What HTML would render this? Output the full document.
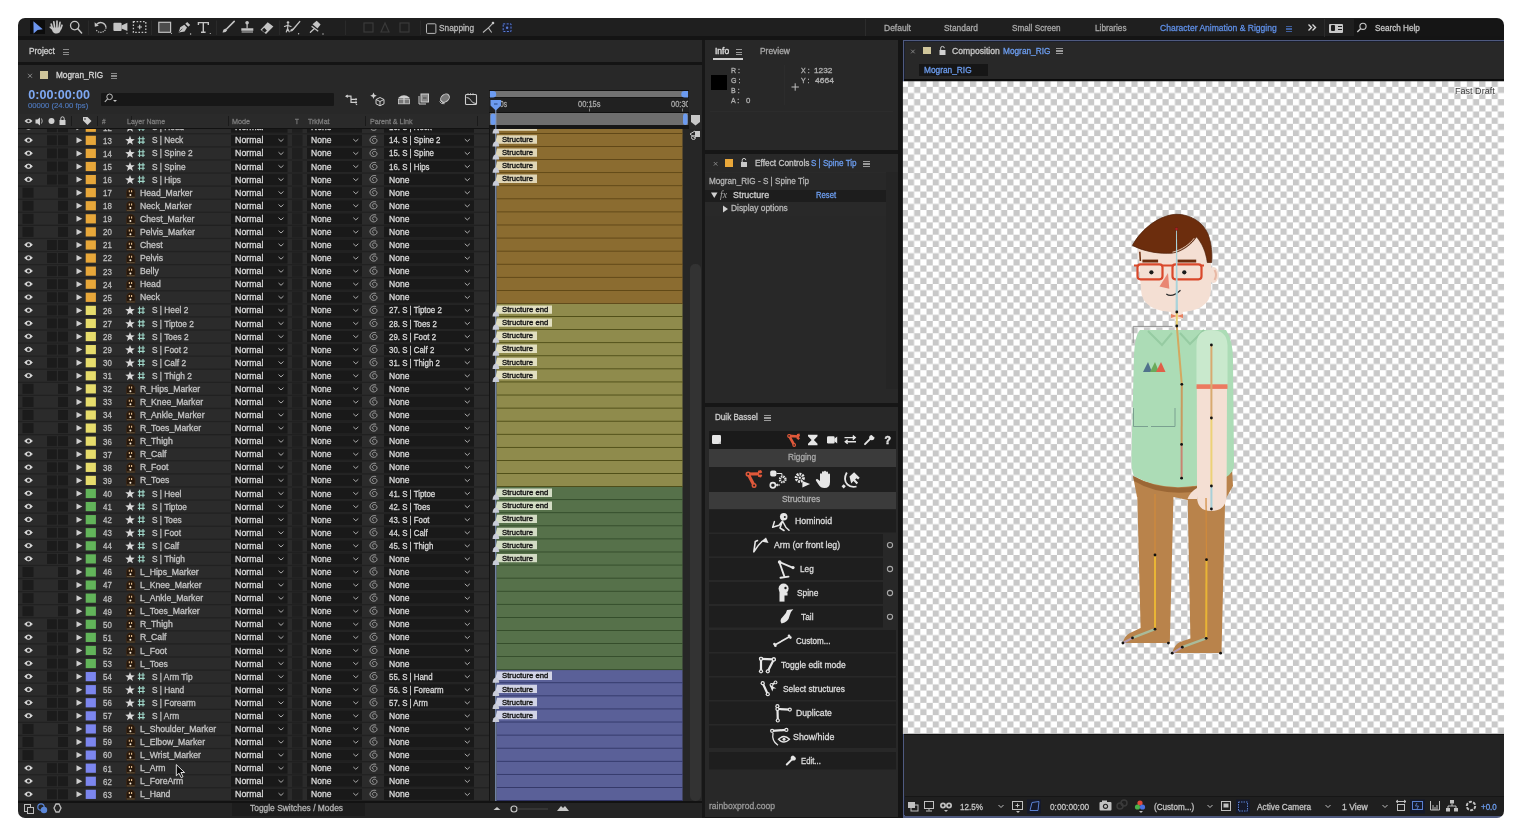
<!DOCTYPE html><html><head><meta charset="utf-8"><style>
*{margin:0;padding:0;box-sizing:border-box}
html,body{width:1521px;height:836px;overflow:hidden;background:#fff;font-family:"Liberation Sans",sans-serif}
.a{position:absolute}
#win{position:absolute;left:0;top:0;will-change:transform;width:1521px;height:836px;clip-path:inset(18px 17px 18px 18px round 7px);background:#141414}
.t{position:absolute;white-space:nowrap;line-height:1;color:#c9c9c9;transform-origin:0 0;-webkit-text-stroke-width:0.3px}
.hb{position:absolute;background:repeating-linear-gradient(currentColor 0 1.2px,transparent 1.2px 2.5px)}
svg{position:absolute;overflow:visible}
</style></head><body><div id="win">
<div class="a" style="left:18px;top:18px;width:1486px;height:18px;background:#1f1f1f"></div>
<div class="a" style="left:29.7px;top:20.1px;width:15.2px;height:14.2px;background:#0c0c0c"></div>
<svg style="left:0;top:0" width="1521" height="40"><path d="M33.4 21.2 L42.8 29.3 L37.6 29.9 L33.6 33.5 Z" fill="#6c95ee"/><path d="M52.5 28.5 L51.2 24 M54.6 27.5 L53.8 21.8 M56.9 27.5 L57 21.2 M59.1 27.8 L60 22.3 M60.8 28.8 L62 25.2" stroke="#c4c4c4" stroke-width="1.7" stroke-linecap="round"/><path d="M52 27.5 Q51.5 31 54 33 Q57 34.3 59.5 32.5 Q61.5 30.5 61.2 27.5 Z" fill="#c4c4c4"/><path d="M52.5 29 L50.2 27.2" stroke="#c4c4c4" stroke-width="1.6" stroke-linecap="round"/><circle cx="74.7" cy="25.6" r="4.2" fill="none" stroke="#c4c4c4" stroke-width="1.3"/><path d="M77.6 28.6 L81.6 33" stroke="#c4c4c4" stroke-width="1.5" stroke-linecap="round"/><path d="M88.5 20.5 V35" stroke="#2a2a2a"/><path d="M96.8 24.3 A5.3 5.3 0 0 1 106 27.5" fill="none" stroke="#c4c4c4" stroke-width="1.3"/><path d="M106 27.5 A5.3 5.3 0 0 1 96 29.5" fill="none" stroke="#c4c4c4" stroke-width="1.1" stroke-dasharray="1.3 1"/><path d="M94.6 22.3 L98.8 25.8 L94.8 26.8 Z" fill="#c4c4c4"/><rect x="113.4" y="22.7" width="8.2" height="8.2" rx="1" fill="#c4c4c4"/><path d="M121.4 25.4 L127.4 22.7 V31 L121.4 28.6 Z" fill="#c4c4c4"/><circle cx="127" cy="33.2" r="0.6" fill="#c4c4c4"/><rect x="133.4" y="21.7" width="12.4" height="10.6" fill="none" stroke="#c4c4c4" stroke-width="1.3" stroke-dasharray="1.6 1.6"/><path d="M137.5 27 h4.5 M139.7 24.8 v4.5" stroke="#c4c4c4" stroke-width="1.1"/><path d="M151.5 20.5 V35" stroke="#2a2a2a"/><rect x="158.8" y="22.3" width="11.8" height="10" fill="#4c4c4c" stroke="#c0c0c0" stroke-width="1.2"/><circle cx="171.5" cy="33.5" r="0.6" fill="#c4c4c4"/><path d="M178.6 32.5 L180.2 27.2 L184.3 24.8 L187 27.5 L184.6 31.6 Z" fill="#c4c4c4"/><path d="M185.3 23.8 L187.2 21.9 L190.2 24.9 L188.3 26.8 Z" fill="#c4c4c4"/><path d="M178.9 32.2 L182.4 28.7" stroke="#1f1f1f" stroke-width="0.7"/><circle cx="190.6" cy="34" r="0.7" fill="#c4c4c4"/><path d="M198.4 25 V22.6 H208.3 V25 M203.3 22.6 V32.2 M201 32.2 H205.6" stroke="#c4c4c4" stroke-width="1.4" fill="none"/><circle cx="210.3" cy="33.5" r="0.6" fill="#c4c4c4"/><path d="M216.5 20.5 V35" stroke="#2a2a2a"/><path d="M222.5 32.5 Q222.8 29.3 225.5 28.6 L227.2 30.2 Q226 32.8 222.5 32.5 Z" fill="#c4c4c4"/><path d="M226.6 29 L234.2 21.4" stroke="#c4c4c4" stroke-width="1.6" stroke-linecap="round"/><circle cx="247.1" cy="22.8" r="1.8" fill="#c4c4c4"/><path d="M247.1 24 V28.6" stroke="#c4c4c4" stroke-width="1.2"/><path d="M241.3 28.3 H253.3 V30.8 H241.3 Z M241.6 31.6 H253 V32.6 H241.6 Z" fill="#c4c4c4"/><path d="M260.5 29.8 L267.7 22.3 L273.4 26.6 L266 34 Z" fill="#c4c4c4"/><path d="M261.9 30.1 L264.2 27.8 L266.9 30.5 L264.6 32.8 Z" fill="#1f1f1f"/><path d="M279.6 20.5 V35" stroke="#2a2a2a"/><circle cx="288" cy="22.5" r="1.3" fill="#c4c4c4"/><path d="M288 24.3 L287.6 28.5 L286.3 32 M287.9 25.2 L284.5 26.5 M287.9 25.5 L291 26.5 M287.6 28.5 L289.2 31.8" stroke="#c4c4c4" stroke-width="1.2" fill="none" stroke-linecap="round"/><path d="M290 31.5 Q290.2 29 292.6 28.6 L293.6 29.8 Q292.8 32 290 31.5 Z" fill="#c4c4c4"/><path d="M293.2 29.2 L299.7 21.6" stroke="#c4c4c4" stroke-width="1.4" stroke-linecap="round"/><circle cx="298.6" cy="33.8" r="0.7" fill="#c4c4c4"/><path d="M312.5 24.2 L316.7 20.8 L320.6 24.5 L317.5 28.5 Z" fill="#c4c4c4"/><path d="M311.6 26.2 L318.2 31.3" stroke="#c4c4c4" stroke-width="1.3"/><path d="M314.5 28.5 L310.4 32.2" stroke="#c4c4c4" stroke-width="1.3" stroke-linecap="round"/><circle cx="323" cy="34" r="0.7" fill="#c4c4c4"/><path d="M345.5 20.5 V35" stroke="#2a2a2a"/><rect x="364" y="23" width="9" height="9" fill="none" stroke="#3a3a3a" stroke-width="1.2"/><path d="M381 32 L385 23 L389 32 Z" fill="none" stroke="#3a3a3a" stroke-width="1.2"/><rect x="400" y="23" width="9" height="9" fill="none" stroke="#3a3a3a" stroke-width="1.2"/><path d="M420.5 20.5 V35" stroke="#2a2a2a"/><rect x="426.5" y="23.8" width="9.4" height="9.6" rx="1" fill="none" stroke="#b8b8b8" stroke-width="1"/><path d="M483 32.5 L488.4 27.9 L491.7 32.5 M488.4 27.9 L492.3 23.9" stroke="#b8b8b8" stroke-width="1.1" fill="none"/><path d="M491.5 23 l1.5 -1.5 l1.5 1.5 l-1.5 1.5 Z" fill="#e0e0e0"/><rect x="502.2" y="22.9" width="9.8" height="9.6" fill="#1a1e30"/><rect x="503.2" y="23.9" width="7.8" height="7.6" fill="none" stroke="#5a7ed8" stroke-width="1" stroke-dasharray="2 1.5"/><circle cx="507.1" cy="27.7" r="1.2" fill="#5a7ed8"/><path d="M865.5 19 V36" stroke="#2c2c2c"/></svg>
<div class="t" style="left:439.10px;top:24.13px;font-size:9.30px;color:#b9b9b9;transform:scaleX(0.8931)">Snapping</div>
<div class="t" style="left:883.60px;top:24.13px;font-size:9.30px;color:#a9a9a9;transform:scaleX(0.9129)">Default</div>
<div class="t" style="left:944.20px;top:24.13px;font-size:9.30px;color:#a9a9a9;transform:scaleX(0.9008)">Standard</div>
<div class="t" style="left:1011.90px;top:24.13px;font-size:9.30px;color:#a9a9a9;transform:scaleX(0.8788)">Small Screen</div>
<div class="t" style="left:1094.60px;top:24.13px;font-size:9.30px;color:#a9a9a9;transform:scaleX(0.8832)">Libraries</div>
<div class="t" style="left:1159.80px;top:24.13px;font-size:9.30px;color:#5f8fe6;transform:scaleX(0.9185)">Character Animation &amp; Rigging</div>
<div class="hb" style="left:1285.9px;top:25.5px;width:6.5px;height:6.2px;color:#3f5f9c"></div>
<svg style="left:0;top:0" width="1521" height="40"><path d="M1308.5 24.5 l3 3 l-3 3 M1312.5 24.5 l3 3 l-3 3" stroke="#d8d8d8" stroke-width="1.4" fill="none"/></svg>
<div class="a" style="left:1323.8px;top:19px;width:1px;height:18px;background:#2c2c2c"></div>
<div class="a" style="left:1328.6px;top:23.5px;width:14.6px;height:9px;background:#c8c8c8;border-radius:1px"></div>
<div class="a" style="left:1330.5px;top:25.3px;width:4.5px;height:5.4px;background:#1f1f1f;border-radius:1px"></div><div class="a" style="left:1337.5px;top:25.5px;width:4px;height:1.4px;background:#1f1f1f"></div><div class="a" style="left:1337.5px;top:28.6px;width:4px;height:1.4px;background:#1f1f1f"></div>
<div class="a" style="left:1353.6px;top:19px;width:150px;height:17px;background:#151515"></div>
<svg style="left:0;top:0" width="1521" height="40"><circle cx="1363" cy="26.3" r="3.1" fill="none" stroke="#c8c8c8" stroke-width="1.1"/><path d="M1360.8 28.5 L1357.3 32" stroke="#c8c8c8" stroke-width="1.3"/></svg>
<div class="t" style="left:1374.80px;top:24.13px;font-size:9.30px;color:#c8c8c8;transform:scaleX(0.8773)">Search Help</div>
<div class="a" style="left:18px;top:39.5px;width:684px;height:22px;background:#282828"></div>
<div class="t" style="left:29.10px;top:46.72px;font-size:8.60px;color:#cfcfcf;transform:scaleX(0.9639)">Project</div>
<div class="hb" style="left:63px;top:48.5px;width:6px;height:6.2px;color:#8a8a8a"></div>
<div class="a" style="left:18px;top:64.5px;width:684px;height:752.5px;background:#282828"></div>
<svg style="left:0;top:0" width="200" height="90"><path d="M28 73.8 l4 4 M32 73.8 l-4 4" stroke="#8a8a8a" stroke-width="1"/></svg>
<div class="a" style="left:39.7px;top:70.7px;width:7.9px;height:8.3px;background:#cfc59a"></div>
<div class="t" style="left:55.90px;top:71.21px;font-size:9.20px;color:#d6d6d6;transform:scaleX(0.8981)">Mogran_RIG</div>
<div class="hb" style="left:110.7px;top:73px;width:6.7px;height:6.2px;color:#8a8a8a"></div>
<div class="t" style="left:28.30px;top:88.83px;font-size:12.60px;color:#7ea8f2;font-weight:bold;-webkit-text-stroke-width:0">0:00:00:00</div>
<div class="t" style="left:28.00px;top:102.48px;font-size:7.70px;color:#4f79bd;-webkit-text-stroke-width:0.15px">00000 (24.00 fps)</div>
<div class="a" style="left:100.5px;top:93px;width:233px;height:13px;background:#171717;border-radius:1px"></div>
<svg style="left:0;top:0" width="703" height="130"><circle cx="109.6" cy="96.8" r="2.8" fill="none" stroke="#c0c0c0" stroke-width="1"/><path d="M107.6 98.9 L104.8 102" stroke="#c0c0c0" stroke-width="1.1"/><path d="M113 100 h4 l-2 2 Z" fill="#c0c0c0"/><path d="M346 96.2 h5.5 M351 96.2 v6.2 h4 M351 99.3 h4" stroke="#cfcfcf" stroke-width="1.2" fill="none"/><path d="M345 96.2 l2.8 -1.8 v3.6 Z" fill="#cfcfcf"/><circle cx="356" cy="99.3" r="1.1" fill="#cfcfcf"/><circle cx="356" cy="102.4" r="1.1" fill="#cfcfcf"/><path d="M355.5 104 h2 l-1 1.2 Z" fill="#cfcfcf"/><path d="M373.5 92.5 l1 2.3 l2.3 1 l-2.3 1 l-1 2.3 l-1 -2.3 l-2.3 -1 l2.3 -1 Z" fill="#cfcfcf"/><path d="M376 99.5 l4 -2 l4 2 v4.3 l-4 2 l-4 -2 Z M376 99.5 l4 2 l4 -2 M380 101.5 v4.3" stroke="#cfcfcf" stroke-width="1" fill="none"/><path d="M398.5 97.5 q5.5 -4.5 11 0 v1 h-11 Z" fill="#cfcfcf"/><rect x="398.5" y="99.2" width="11" height="4.6" fill="#777" stroke="#cfcfcf" stroke-width="0.8"/><path d="M404 96 v7.8" stroke="#cfcfcf" stroke-width="1.2"/><rect x="421" y="94" width="7.5" height="8" fill="#888" stroke="#cfcfcf" stroke-width="1"/><path d="M419 96 v8 h7" stroke="#cfcfcf" stroke-width="1" fill="none"/><path d="M423 98 h3.5" stroke="#333" stroke-width="0.8"/><ellipse cx="445" cy="98.2" rx="4.8" ry="3.6" transform="rotate(-40 445 98.2)" fill="#777" stroke="#cfcfcf" stroke-width="1"/><path d="M440.5 100 q1 3 4 2.5 M439.6 101.5 q1.5 3 5 2.2" stroke="#cfcfcf" stroke-width="0.9" fill="none"/><rect x="465.5" y="94.5" width="11" height="10" rx="1" fill="none" stroke="#cfcfcf" stroke-width="1.1"/><path d="M466.5 97.5 q3 0 4.5 3 q1.5 3 5 3" stroke="#cfcfcf" stroke-width="1" fill="none"/><path d="M468 93.2 v2 M470.5 93.2 v2 M473 93.2 v2" stroke="#cfcfcf" stroke-width="0.8"/></svg>
<div class="a" style="left:18px;top:114px;width:472px;height:14px;background:#2a2a2a"></div>
<div class="a" style="left:18px;top:127.8px;width:472px;height:1.2px;background:#121212"></div>
<svg style="left:0;top:0" width="703" height="130"><path d="M24.5 121 Q28.5 116.5 32.5 121 Q28.5 125.5 24.5 121 Z" fill="#cfcfcf"/><circle cx="28.5" cy="121" r="1.2" fill="#2a2a2a"/><path d="M35.5 119.5 h2 l2.5 -2 v8 l-2.5 -2 h-2 Z" fill="#cfcfcf"/><path d="M41.5 118.5 q1.5 2.5 0 5" stroke="#cfcfcf" stroke-width="0.8" fill="none"/><circle cx="51.5" cy="121" r="3" fill="#cfcfcf"/><rect x="59.5" y="120" width="6" height="5" fill="#cfcfcf"/><path d="M60.8 120 v-1.5 a1.7 1.7 0 0 1 3.4 0 v1.5" stroke="#cfcfcf" stroke-width="1" fill="none"/><path d="M71.5 116 V126 M131.5 116 V126 M228.5 116 V126 M365.5 116 V126 M477.5 116 V126" stroke="#1a1a1a" stroke-width="1"/><path d="M97.5 116 V126" stroke="#1a1a1a" stroke-width="1"/><path d="M83 117 h4.5 l4 4 l-4 4 l-4.5 -4.5 Z" fill="#cfcfcf" transform="rotate(0)"/><circle cx="85" cy="119" r="0.8" fill="#2a2a2a"/></svg>
<div class="t" style="left:101.60px;top:117.77px;font-size:7.60px;color:#7c7c7c;transform:scaleX(0.8517)">#</div>
<div class="t" style="left:127.10px;top:117.77px;font-size:7.60px;color:#7c7c7c;transform:scaleX(0.9204)">Layer Name</div>
<div class="t" style="left:232.10px;top:117.77px;font-size:7.60px;color:#7c7c7c;transform:scaleX(0.9521)">Mode</div>
<div class="t" style="left:294.90px;top:117.77px;font-size:7.60px;color:#7c7c7c;transform:scaleX(0.8185)">T</div>
<div class="t" style="left:308.20px;top:117.77px;font-size:7.60px;color:#7c7c7c;transform:scaleX(0.9204)">TrkMat</div>
<div class="t" style="left:370.00px;top:117.77px;font-size:7.60px;color:#7c7c7c;transform:scaleX(0.9337)">Parent &amp; Link</div>
<div class="a" style="left:18px;top:129px;width:471px;height:672px;overflow:hidden;background:#212121">
<svg style="left:0;top:0" width="472" height="672">
<rect x="0" y="-7.68" width="472" height="11.88" fill="#2b2b2b"/>
<path d="M6.6 -1.94 Q10.5 -6.34 14.4 -1.94 Q10.5 2.46 6.6 -1.94 Z" fill="#dcdcdc" stroke="#dcdcdc" stroke-width="0.8" stroke-linejoin="round"/><circle cx="10.5" cy="-1.94" r="1.5" fill="#2b2b2b"/>
<rect x="29" y="-6.74" width="9.8" height="10" fill="#1b1b1b"/>
<rect x="40" y="-6.74" width="10" height="10" fill="#1b1b1b"/>
<path d="M58.5 -4.74 L64.3 -1.74 L58.5 1.26 Z" fill="#cfcfcf"/>
<rect x="67.7" y="-6.34" width="10.2" height="9.2" fill="#e7a73a"/>
<polygon points="112.00,-6.34 113.23,-3.04 116.76,-2.89 114.00,-0.69 114.94,2.71 112.00,0.76 109.06,2.71 110.00,-0.69 107.24,-2.89 110.77,-3.04" fill="#d8d8d8"/>
<path d="M121.5 -5.54 v7.5 M125 -5.54 v7.5 M119.8 -3.34 h7 M119.8 0.06 h7" stroke="#9fd6c8" stroke-width="1.1"/>
<rect x="213" y="-7.24" width="56.5" height="11" fill="#191919"/>
<rect x="274" y="-7.24" width="10.5" height="11" fill="#1f1f1f"/>
<rect x="289" y="-7.24" width="55" height="11" fill="#191919"/>
<rect x="366" y="-7.24" width="90" height="11" fill="#191919"/>
<path d="M260.50 -2.94 l2.5 2.3 l2.5 -2.3" stroke="#bdbdbd" stroke-width="0.9" fill="none"/>
<path d="M335.30 -2.94 l2.5 2.3 l2.5 -2.3" stroke="#bdbdbd" stroke-width="0.9" fill="none"/>
<path d="M446.80 -2.94 l2.5 2.3 l2.5 -2.3" stroke="#bdbdbd" stroke-width="0.9" fill="none"/>
<path transform="translate(0 -1.74)" d="M358.14 -3.82 L357.57 -3.97 L357.00 -4.06 L356.43 -4.08 L355.86 -4.05 L355.30 -3.95 L354.77 -3.80 L354.27 -3.59 L353.81 -3.33 L353.39 -3.03 L353.02 -2.69 L352.71 -2.32 L352.45 -1.92 L352.25 -1.50 L352.11 -1.07 L352.04 -0.63 L352.03 -0.19 L352.08 0.25 L352.19 0.67 L352.35 1.06 L352.57 1.44 L352.84 1.78 L353.15 2.09 L353.49 2.36 L353.87 2.59 L354.27 2.77 L354.69 2.91 L355.12 3.00 L355.55 3.04 L355.98 3.04 L356.40 2.99 L356.80 2.90 L357.19 2.76 L357.54 2.59 L357.87 2.38 L358.16 2.14 L358.41 1.88 L358.61 1.60 L358.78 1.30 L358.89 0.99 L358.97 0.67 L358.99 0.36 L358.98 0.04 L358.91 -0.26 L358.81 -0.55 L358.67 -0.82 L358.50 -1.07 L358.29 -1.29 L358.06 -1.49 L357.81 -1.66 L357.54 -1.80 L357.25 -1.90 L356.96 -1.97 L356.67 -2.01 L356.38 -2.02 L356.10 -1.99 L355.83 -1.94 L355.57 -1.85 L355.33 -1.75 L355.12 -1.61 L354.93 -1.47 L354.76 -1.30 L354.63 -1.12 L354.52 -0.93 L354.44 -0.74 L354.40 -0.54 L354.38 -0.35 L354.39 -0.16 L354.43 0.03 L354.49 0.20 L354.57 0.36 L354.68 0.50 L354.80 0.63 L354.93 0.74 L355.08 0.83 L355.23 0.91 L355.39 0.96 L355.55 0.99 L355.71 1.00 L355.86 1.00 L356.00 0.98" stroke="#acacac" stroke-width="1" fill="none"/>
<rect x="0" y="5.40" width="472" height="11.88" fill="#2b2b2b"/>
<path d="M6.6 11.14 Q10.5 6.74 14.4 11.14 Q10.5 15.54 6.6 11.14 Z" fill="#dcdcdc" stroke="#dcdcdc" stroke-width="0.8" stroke-linejoin="round"/><circle cx="10.5" cy="11.14" r="1.5" fill="#2b2b2b"/>
<rect x="29" y="6.34" width="9.8" height="10" fill="#1b1b1b"/>
<rect x="40" y="6.34" width="10" height="10" fill="#1b1b1b"/>
<path d="M58.5 8.34 L64.3 11.34 L58.5 14.34 Z" fill="#cfcfcf"/>
<rect x="67.7" y="6.74" width="10.2" height="9.2" fill="#e7a73a"/>
<polygon points="112.00,6.74 113.23,10.04 116.76,10.19 114.00,12.39 114.94,15.79 112.00,13.84 109.06,15.79 110.00,12.39 107.24,10.19 110.77,10.04" fill="#d8d8d8"/>
<path d="M121.5 7.54 v7.5 M125 7.54 v7.5 M119.8 9.74 h7 M119.8 13.14 h7" stroke="#9fd6c8" stroke-width="1.1"/>
<rect x="213" y="5.84" width="56.5" height="11" fill="#191919"/>
<rect x="274" y="5.84" width="10.5" height="11" fill="#1f1f1f"/>
<rect x="289" y="5.84" width="55" height="11" fill="#191919"/>
<rect x="366" y="5.84" width="90" height="11" fill="#191919"/>
<path d="M260.50 10.14 l2.5 2.3 l2.5 -2.3" stroke="#bdbdbd" stroke-width="0.9" fill="none"/>
<path d="M335.30 10.14 l2.5 2.3 l2.5 -2.3" stroke="#bdbdbd" stroke-width="0.9" fill="none"/>
<path d="M446.80 10.14 l2.5 2.3 l2.5 -2.3" stroke="#bdbdbd" stroke-width="0.9" fill="none"/>
<path transform="translate(0 11.34)" d="M358.14 -3.82 L357.57 -3.97 L357.00 -4.06 L356.43 -4.08 L355.86 -4.05 L355.30 -3.95 L354.77 -3.80 L354.27 -3.59 L353.81 -3.33 L353.39 -3.03 L353.02 -2.69 L352.71 -2.32 L352.45 -1.92 L352.25 -1.50 L352.11 -1.07 L352.04 -0.63 L352.03 -0.19 L352.08 0.25 L352.19 0.67 L352.35 1.06 L352.57 1.44 L352.84 1.78 L353.15 2.09 L353.49 2.36 L353.87 2.59 L354.27 2.77 L354.69 2.91 L355.12 3.00 L355.55 3.04 L355.98 3.04 L356.40 2.99 L356.80 2.90 L357.19 2.76 L357.54 2.59 L357.87 2.38 L358.16 2.14 L358.41 1.88 L358.61 1.60 L358.78 1.30 L358.89 0.99 L358.97 0.67 L358.99 0.36 L358.98 0.04 L358.91 -0.26 L358.81 -0.55 L358.67 -0.82 L358.50 -1.07 L358.29 -1.29 L358.06 -1.49 L357.81 -1.66 L357.54 -1.80 L357.25 -1.90 L356.96 -1.97 L356.67 -2.01 L356.38 -2.02 L356.10 -1.99 L355.83 -1.94 L355.57 -1.85 L355.33 -1.75 L355.12 -1.61 L354.93 -1.47 L354.76 -1.30 L354.63 -1.12 L354.52 -0.93 L354.44 -0.74 L354.40 -0.54 L354.38 -0.35 L354.39 -0.16 L354.43 0.03 L354.49 0.20 L354.57 0.36 L354.68 0.50 L354.80 0.63 L354.93 0.74 L355.08 0.83 L355.23 0.91 L355.39 0.96 L355.55 0.99 L355.71 1.00 L355.86 1.00 L356.00 0.98" stroke="#acacac" stroke-width="1" fill="none"/>
<rect x="0" y="18.48" width="472" height="11.88" fill="#2b2b2b"/>
<path d="M6.6 24.22 Q10.5 19.82 14.4 24.22 Q10.5 28.62 6.6 24.22 Z" fill="#dcdcdc" stroke="#dcdcdc" stroke-width="0.8" stroke-linejoin="round"/><circle cx="10.5" cy="24.22" r="1.5" fill="#2b2b2b"/>
<rect x="29" y="19.42" width="9.8" height="10" fill="#1b1b1b"/>
<rect x="40" y="19.42" width="10" height="10" fill="#1b1b1b"/>
<path d="M58.5 21.42 L64.3 24.42 L58.5 27.42 Z" fill="#cfcfcf"/>
<rect x="67.7" y="19.82" width="10.2" height="9.2" fill="#e7a73a"/>
<polygon points="112.00,19.82 113.23,23.12 116.76,23.27 114.00,25.47 114.94,28.87 112.00,26.92 109.06,28.87 110.00,25.47 107.24,23.27 110.77,23.12" fill="#d8d8d8"/>
<path d="M121.5 20.62 v7.5 M125 20.62 v7.5 M119.8 22.82 h7 M119.8 26.22 h7" stroke="#9fd6c8" stroke-width="1.1"/>
<rect x="213" y="18.92" width="56.5" height="11" fill="#191919"/>
<rect x="274" y="18.92" width="10.5" height="11" fill="#1f1f1f"/>
<rect x="289" y="18.92" width="55" height="11" fill="#191919"/>
<rect x="366" y="18.92" width="90" height="11" fill="#191919"/>
<path d="M260.50 23.22 l2.5 2.3 l2.5 -2.3" stroke="#bdbdbd" stroke-width="0.9" fill="none"/>
<path d="M335.30 23.22 l2.5 2.3 l2.5 -2.3" stroke="#bdbdbd" stroke-width="0.9" fill="none"/>
<path d="M446.80 23.22 l2.5 2.3 l2.5 -2.3" stroke="#bdbdbd" stroke-width="0.9" fill="none"/>
<path transform="translate(0 24.42)" d="M358.14 -3.82 L357.57 -3.97 L357.00 -4.06 L356.43 -4.08 L355.86 -4.05 L355.30 -3.95 L354.77 -3.80 L354.27 -3.59 L353.81 -3.33 L353.39 -3.03 L353.02 -2.69 L352.71 -2.32 L352.45 -1.92 L352.25 -1.50 L352.11 -1.07 L352.04 -0.63 L352.03 -0.19 L352.08 0.25 L352.19 0.67 L352.35 1.06 L352.57 1.44 L352.84 1.78 L353.15 2.09 L353.49 2.36 L353.87 2.59 L354.27 2.77 L354.69 2.91 L355.12 3.00 L355.55 3.04 L355.98 3.04 L356.40 2.99 L356.80 2.90 L357.19 2.76 L357.54 2.59 L357.87 2.38 L358.16 2.14 L358.41 1.88 L358.61 1.60 L358.78 1.30 L358.89 0.99 L358.97 0.67 L358.99 0.36 L358.98 0.04 L358.91 -0.26 L358.81 -0.55 L358.67 -0.82 L358.50 -1.07 L358.29 -1.29 L358.06 -1.49 L357.81 -1.66 L357.54 -1.80 L357.25 -1.90 L356.96 -1.97 L356.67 -2.01 L356.38 -2.02 L356.10 -1.99 L355.83 -1.94 L355.57 -1.85 L355.33 -1.75 L355.12 -1.61 L354.93 -1.47 L354.76 -1.30 L354.63 -1.12 L354.52 -0.93 L354.44 -0.74 L354.40 -0.54 L354.38 -0.35 L354.39 -0.16 L354.43 0.03 L354.49 0.20 L354.57 0.36 L354.68 0.50 L354.80 0.63 L354.93 0.74 L355.08 0.83 L355.23 0.91 L355.39 0.96 L355.55 0.99 L355.71 1.00 L355.86 1.00 L356.00 0.98" stroke="#acacac" stroke-width="1" fill="none"/>
<rect x="0" y="31.56" width="472" height="11.88" fill="#2b2b2b"/>
<path d="M6.6 37.30 Q10.5 32.90 14.4 37.30 Q10.5 41.70 6.6 37.30 Z" fill="#dcdcdc" stroke="#dcdcdc" stroke-width="0.8" stroke-linejoin="round"/><circle cx="10.5" cy="37.30" r="1.5" fill="#2b2b2b"/>
<rect x="29" y="32.50" width="9.8" height="10" fill="#1b1b1b"/>
<rect x="40" y="32.50" width="10" height="10" fill="#1b1b1b"/>
<path d="M58.5 34.50 L64.3 37.50 L58.5 40.50 Z" fill="#cfcfcf"/>
<rect x="67.7" y="32.90" width="10.2" height="9.2" fill="#e7a73a"/>
<polygon points="112.00,32.90 113.23,36.20 116.76,36.35 114.00,38.55 114.94,41.95 112.00,40.00 109.06,41.95 110.00,38.55 107.24,36.35 110.77,36.20" fill="#d8d8d8"/>
<path d="M121.5 33.70 v7.5 M125 33.70 v7.5 M119.8 35.90 h7 M119.8 39.30 h7" stroke="#9fd6c8" stroke-width="1.1"/>
<rect x="213" y="32.00" width="56.5" height="11" fill="#191919"/>
<rect x="274" y="32.00" width="10.5" height="11" fill="#1f1f1f"/>
<rect x="289" y="32.00" width="55" height="11" fill="#191919"/>
<rect x="366" y="32.00" width="90" height="11" fill="#191919"/>
<path d="M260.50 36.30 l2.5 2.3 l2.5 -2.3" stroke="#bdbdbd" stroke-width="0.9" fill="none"/>
<path d="M335.30 36.30 l2.5 2.3 l2.5 -2.3" stroke="#bdbdbd" stroke-width="0.9" fill="none"/>
<path d="M446.80 36.30 l2.5 2.3 l2.5 -2.3" stroke="#bdbdbd" stroke-width="0.9" fill="none"/>
<path transform="translate(0 37.50)" d="M358.14 -3.82 L357.57 -3.97 L357.00 -4.06 L356.43 -4.08 L355.86 -4.05 L355.30 -3.95 L354.77 -3.80 L354.27 -3.59 L353.81 -3.33 L353.39 -3.03 L353.02 -2.69 L352.71 -2.32 L352.45 -1.92 L352.25 -1.50 L352.11 -1.07 L352.04 -0.63 L352.03 -0.19 L352.08 0.25 L352.19 0.67 L352.35 1.06 L352.57 1.44 L352.84 1.78 L353.15 2.09 L353.49 2.36 L353.87 2.59 L354.27 2.77 L354.69 2.91 L355.12 3.00 L355.55 3.04 L355.98 3.04 L356.40 2.99 L356.80 2.90 L357.19 2.76 L357.54 2.59 L357.87 2.38 L358.16 2.14 L358.41 1.88 L358.61 1.60 L358.78 1.30 L358.89 0.99 L358.97 0.67 L358.99 0.36 L358.98 0.04 L358.91 -0.26 L358.81 -0.55 L358.67 -0.82 L358.50 -1.07 L358.29 -1.29 L358.06 -1.49 L357.81 -1.66 L357.54 -1.80 L357.25 -1.90 L356.96 -1.97 L356.67 -2.01 L356.38 -2.02 L356.10 -1.99 L355.83 -1.94 L355.57 -1.85 L355.33 -1.75 L355.12 -1.61 L354.93 -1.47 L354.76 -1.30 L354.63 -1.12 L354.52 -0.93 L354.44 -0.74 L354.40 -0.54 L354.38 -0.35 L354.39 -0.16 L354.43 0.03 L354.49 0.20 L354.57 0.36 L354.68 0.50 L354.80 0.63 L354.93 0.74 L355.08 0.83 L355.23 0.91 L355.39 0.96 L355.55 0.99 L355.71 1.00 L355.86 1.00 L356.00 0.98" stroke="#acacac" stroke-width="1" fill="none"/>
<rect x="0" y="44.64" width="472" height="11.88" fill="#2b2b2b"/>
<path d="M6.6 50.38 Q10.5 45.98 14.4 50.38 Q10.5 54.78 6.6 50.38 Z" fill="#dcdcdc" stroke="#dcdcdc" stroke-width="0.8" stroke-linejoin="round"/><circle cx="10.5" cy="50.38" r="1.5" fill="#2b2b2b"/>
<rect x="29" y="45.58" width="9.8" height="10" fill="#1b1b1b"/>
<rect x="40" y="45.58" width="10" height="10" fill="#1b1b1b"/>
<path d="M58.5 47.58 L64.3 50.58 L58.5 53.58 Z" fill="#cfcfcf"/>
<rect x="67.7" y="45.98" width="10.2" height="9.2" fill="#e7a73a"/>
<polygon points="112.00,45.98 113.23,49.28 116.76,49.43 114.00,51.63 114.94,55.03 112.00,53.08 109.06,55.03 110.00,51.63 107.24,49.43 110.77,49.28" fill="#d8d8d8"/>
<path d="M121.5 46.78 v7.5 M125 46.78 v7.5 M119.8 48.98 h7 M119.8 52.38 h7" stroke="#9fd6c8" stroke-width="1.1"/>
<rect x="213" y="45.08" width="56.5" height="11" fill="#191919"/>
<rect x="274" y="45.08" width="10.5" height="11" fill="#1f1f1f"/>
<rect x="289" y="45.08" width="55" height="11" fill="#191919"/>
<rect x="366" y="45.08" width="90" height="11" fill="#191919"/>
<path d="M260.50 49.38 l2.5 2.3 l2.5 -2.3" stroke="#bdbdbd" stroke-width="0.9" fill="none"/>
<path d="M335.30 49.38 l2.5 2.3 l2.5 -2.3" stroke="#bdbdbd" stroke-width="0.9" fill="none"/>
<path d="M446.80 49.38 l2.5 2.3 l2.5 -2.3" stroke="#bdbdbd" stroke-width="0.9" fill="none"/>
<path transform="translate(0 50.58)" d="M358.14 -3.82 L357.57 -3.97 L357.00 -4.06 L356.43 -4.08 L355.86 -4.05 L355.30 -3.95 L354.77 -3.80 L354.27 -3.59 L353.81 -3.33 L353.39 -3.03 L353.02 -2.69 L352.71 -2.32 L352.45 -1.92 L352.25 -1.50 L352.11 -1.07 L352.04 -0.63 L352.03 -0.19 L352.08 0.25 L352.19 0.67 L352.35 1.06 L352.57 1.44 L352.84 1.78 L353.15 2.09 L353.49 2.36 L353.87 2.59 L354.27 2.77 L354.69 2.91 L355.12 3.00 L355.55 3.04 L355.98 3.04 L356.40 2.99 L356.80 2.90 L357.19 2.76 L357.54 2.59 L357.87 2.38 L358.16 2.14 L358.41 1.88 L358.61 1.60 L358.78 1.30 L358.89 0.99 L358.97 0.67 L358.99 0.36 L358.98 0.04 L358.91 -0.26 L358.81 -0.55 L358.67 -0.82 L358.50 -1.07 L358.29 -1.29 L358.06 -1.49 L357.81 -1.66 L357.54 -1.80 L357.25 -1.90 L356.96 -1.97 L356.67 -2.01 L356.38 -2.02 L356.10 -1.99 L355.83 -1.94 L355.57 -1.85 L355.33 -1.75 L355.12 -1.61 L354.93 -1.47 L354.76 -1.30 L354.63 -1.12 L354.52 -0.93 L354.44 -0.74 L354.40 -0.54 L354.38 -0.35 L354.39 -0.16 L354.43 0.03 L354.49 0.20 L354.57 0.36 L354.68 0.50 L354.80 0.63 L354.93 0.74 L355.08 0.83 L355.23 0.91 L355.39 0.96 L355.55 0.99 L355.71 1.00 L355.86 1.00 L356.00 0.98" stroke="#acacac" stroke-width="1" fill="none"/>
<rect x="0" y="57.72" width="472" height="11.88" fill="#2b2b2b"/>
<rect x="4.5" y="58.66" width="11" height="10" fill="#1b1b1b"/>
<rect x="40" y="58.66" width="10" height="10" fill="#1b1b1b"/>
<path d="M58.5 60.66 L64.3 63.66 L58.5 66.66 Z" fill="#cfcfcf"/>
<rect x="67.7" y="59.06" width="10.2" height="9.2" fill="#e7a73a"/>
<path d="M108.5 68.86 v-5.5 a4.25 4.25 0 0 1 8.5 0 v5.5 Z" fill="#26170b" stroke="#3d2a18" stroke-width="0.7"/><path d="M111.3 61.36 v2 M113.6 61.36 v2" stroke="#e8c090" stroke-width="1.1"/><circle cx="112.4" cy="65.96" r="1" fill="#fff4e0"/><path d="M108.8 68.26 h7.9" stroke="#6a5a40" stroke-width="0.9"/>
<rect x="213" y="58.16" width="56.5" height="11" fill="#191919"/>
<rect x="274" y="58.16" width="10.5" height="11" fill="#1f1f1f"/>
<rect x="289" y="58.16" width="55" height="11" fill="#191919"/>
<rect x="366" y="58.16" width="90" height="11" fill="#191919"/>
<path d="M260.50 62.46 l2.5 2.3 l2.5 -2.3" stroke="#bdbdbd" stroke-width="0.9" fill="none"/>
<path d="M335.30 62.46 l2.5 2.3 l2.5 -2.3" stroke="#bdbdbd" stroke-width="0.9" fill="none"/>
<path d="M446.80 62.46 l2.5 2.3 l2.5 -2.3" stroke="#bdbdbd" stroke-width="0.9" fill="none"/>
<path transform="translate(0 63.66)" d="M358.14 -3.82 L357.57 -3.97 L357.00 -4.06 L356.43 -4.08 L355.86 -4.05 L355.30 -3.95 L354.77 -3.80 L354.27 -3.59 L353.81 -3.33 L353.39 -3.03 L353.02 -2.69 L352.71 -2.32 L352.45 -1.92 L352.25 -1.50 L352.11 -1.07 L352.04 -0.63 L352.03 -0.19 L352.08 0.25 L352.19 0.67 L352.35 1.06 L352.57 1.44 L352.84 1.78 L353.15 2.09 L353.49 2.36 L353.87 2.59 L354.27 2.77 L354.69 2.91 L355.12 3.00 L355.55 3.04 L355.98 3.04 L356.40 2.99 L356.80 2.90 L357.19 2.76 L357.54 2.59 L357.87 2.38 L358.16 2.14 L358.41 1.88 L358.61 1.60 L358.78 1.30 L358.89 0.99 L358.97 0.67 L358.99 0.36 L358.98 0.04 L358.91 -0.26 L358.81 -0.55 L358.67 -0.82 L358.50 -1.07 L358.29 -1.29 L358.06 -1.49 L357.81 -1.66 L357.54 -1.80 L357.25 -1.90 L356.96 -1.97 L356.67 -2.01 L356.38 -2.02 L356.10 -1.99 L355.83 -1.94 L355.57 -1.85 L355.33 -1.75 L355.12 -1.61 L354.93 -1.47 L354.76 -1.30 L354.63 -1.12 L354.52 -0.93 L354.44 -0.74 L354.40 -0.54 L354.38 -0.35 L354.39 -0.16 L354.43 0.03 L354.49 0.20 L354.57 0.36 L354.68 0.50 L354.80 0.63 L354.93 0.74 L355.08 0.83 L355.23 0.91 L355.39 0.96 L355.55 0.99 L355.71 1.00 L355.86 1.00 L356.00 0.98" stroke="#acacac" stroke-width="1" fill="none"/>
<rect x="0" y="70.80" width="472" height="11.88" fill="#2b2b2b"/>
<rect x="4.5" y="71.74" width="11" height="10" fill="#1b1b1b"/>
<rect x="40" y="71.74" width="10" height="10" fill="#1b1b1b"/>
<path d="M58.5 73.74 L64.3 76.74 L58.5 79.74 Z" fill="#cfcfcf"/>
<rect x="67.7" y="72.14" width="10.2" height="9.2" fill="#e7a73a"/>
<path d="M108.5 81.94 v-5.5 a4.25 4.25 0 0 1 8.5 0 v5.5 Z" fill="#26170b" stroke="#3d2a18" stroke-width="0.7"/><path d="M111.3 74.44 v2 M113.6 74.44 v2" stroke="#e8c090" stroke-width="1.1"/><circle cx="112.4" cy="79.04" r="1" fill="#fff4e0"/><path d="M108.8 81.34 h7.9" stroke="#6a5a40" stroke-width="0.9"/>
<rect x="213" y="71.24" width="56.5" height="11" fill="#191919"/>
<rect x="274" y="71.24" width="10.5" height="11" fill="#1f1f1f"/>
<rect x="289" y="71.24" width="55" height="11" fill="#191919"/>
<rect x="366" y="71.24" width="90" height="11" fill="#191919"/>
<path d="M260.50 75.54 l2.5 2.3 l2.5 -2.3" stroke="#bdbdbd" stroke-width="0.9" fill="none"/>
<path d="M335.30 75.54 l2.5 2.3 l2.5 -2.3" stroke="#bdbdbd" stroke-width="0.9" fill="none"/>
<path d="M446.80 75.54 l2.5 2.3 l2.5 -2.3" stroke="#bdbdbd" stroke-width="0.9" fill="none"/>
<path transform="translate(0 76.74)" d="M358.14 -3.82 L357.57 -3.97 L357.00 -4.06 L356.43 -4.08 L355.86 -4.05 L355.30 -3.95 L354.77 -3.80 L354.27 -3.59 L353.81 -3.33 L353.39 -3.03 L353.02 -2.69 L352.71 -2.32 L352.45 -1.92 L352.25 -1.50 L352.11 -1.07 L352.04 -0.63 L352.03 -0.19 L352.08 0.25 L352.19 0.67 L352.35 1.06 L352.57 1.44 L352.84 1.78 L353.15 2.09 L353.49 2.36 L353.87 2.59 L354.27 2.77 L354.69 2.91 L355.12 3.00 L355.55 3.04 L355.98 3.04 L356.40 2.99 L356.80 2.90 L357.19 2.76 L357.54 2.59 L357.87 2.38 L358.16 2.14 L358.41 1.88 L358.61 1.60 L358.78 1.30 L358.89 0.99 L358.97 0.67 L358.99 0.36 L358.98 0.04 L358.91 -0.26 L358.81 -0.55 L358.67 -0.82 L358.50 -1.07 L358.29 -1.29 L358.06 -1.49 L357.81 -1.66 L357.54 -1.80 L357.25 -1.90 L356.96 -1.97 L356.67 -2.01 L356.38 -2.02 L356.10 -1.99 L355.83 -1.94 L355.57 -1.85 L355.33 -1.75 L355.12 -1.61 L354.93 -1.47 L354.76 -1.30 L354.63 -1.12 L354.52 -0.93 L354.44 -0.74 L354.40 -0.54 L354.38 -0.35 L354.39 -0.16 L354.43 0.03 L354.49 0.20 L354.57 0.36 L354.68 0.50 L354.80 0.63 L354.93 0.74 L355.08 0.83 L355.23 0.91 L355.39 0.96 L355.55 0.99 L355.71 1.00 L355.86 1.00 L356.00 0.98" stroke="#acacac" stroke-width="1" fill="none"/>
<rect x="0" y="83.88" width="472" height="11.88" fill="#2b2b2b"/>
<rect x="4.5" y="84.82" width="11" height="10" fill="#1b1b1b"/>
<rect x="40" y="84.82" width="10" height="10" fill="#1b1b1b"/>
<path d="M58.5 86.82 L64.3 89.82 L58.5 92.82 Z" fill="#cfcfcf"/>
<rect x="67.7" y="85.22" width="10.2" height="9.2" fill="#e7a73a"/>
<path d="M108.5 95.02 v-5.5 a4.25 4.25 0 0 1 8.5 0 v5.5 Z" fill="#26170b" stroke="#3d2a18" stroke-width="0.7"/><path d="M111.3 87.52 v2 M113.6 87.52 v2" stroke="#e8c090" stroke-width="1.1"/><circle cx="112.4" cy="92.12" r="1" fill="#fff4e0"/><path d="M108.8 94.42 h7.9" stroke="#6a5a40" stroke-width="0.9"/>
<rect x="213" y="84.32" width="56.5" height="11" fill="#191919"/>
<rect x="274" y="84.32" width="10.5" height="11" fill="#1f1f1f"/>
<rect x="289" y="84.32" width="55" height="11" fill="#191919"/>
<rect x="366" y="84.32" width="90" height="11" fill="#191919"/>
<path d="M260.50 88.62 l2.5 2.3 l2.5 -2.3" stroke="#bdbdbd" stroke-width="0.9" fill="none"/>
<path d="M335.30 88.62 l2.5 2.3 l2.5 -2.3" stroke="#bdbdbd" stroke-width="0.9" fill="none"/>
<path d="M446.80 88.62 l2.5 2.3 l2.5 -2.3" stroke="#bdbdbd" stroke-width="0.9" fill="none"/>
<path transform="translate(0 89.82)" d="M358.14 -3.82 L357.57 -3.97 L357.00 -4.06 L356.43 -4.08 L355.86 -4.05 L355.30 -3.95 L354.77 -3.80 L354.27 -3.59 L353.81 -3.33 L353.39 -3.03 L353.02 -2.69 L352.71 -2.32 L352.45 -1.92 L352.25 -1.50 L352.11 -1.07 L352.04 -0.63 L352.03 -0.19 L352.08 0.25 L352.19 0.67 L352.35 1.06 L352.57 1.44 L352.84 1.78 L353.15 2.09 L353.49 2.36 L353.87 2.59 L354.27 2.77 L354.69 2.91 L355.12 3.00 L355.55 3.04 L355.98 3.04 L356.40 2.99 L356.80 2.90 L357.19 2.76 L357.54 2.59 L357.87 2.38 L358.16 2.14 L358.41 1.88 L358.61 1.60 L358.78 1.30 L358.89 0.99 L358.97 0.67 L358.99 0.36 L358.98 0.04 L358.91 -0.26 L358.81 -0.55 L358.67 -0.82 L358.50 -1.07 L358.29 -1.29 L358.06 -1.49 L357.81 -1.66 L357.54 -1.80 L357.25 -1.90 L356.96 -1.97 L356.67 -2.01 L356.38 -2.02 L356.10 -1.99 L355.83 -1.94 L355.57 -1.85 L355.33 -1.75 L355.12 -1.61 L354.93 -1.47 L354.76 -1.30 L354.63 -1.12 L354.52 -0.93 L354.44 -0.74 L354.40 -0.54 L354.38 -0.35 L354.39 -0.16 L354.43 0.03 L354.49 0.20 L354.57 0.36 L354.68 0.50 L354.80 0.63 L354.93 0.74 L355.08 0.83 L355.23 0.91 L355.39 0.96 L355.55 0.99 L355.71 1.00 L355.86 1.00 L356.00 0.98" stroke="#acacac" stroke-width="1" fill="none"/>
<rect x="0" y="96.96" width="472" height="11.88" fill="#2b2b2b"/>
<rect x="4.5" y="97.90" width="11" height="10" fill="#1b1b1b"/>
<rect x="40" y="97.90" width="10" height="10" fill="#1b1b1b"/>
<path d="M58.5 99.90 L64.3 102.90 L58.5 105.90 Z" fill="#cfcfcf"/>
<rect x="67.7" y="98.30" width="10.2" height="9.2" fill="#e7a73a"/>
<path d="M108.5 108.10 v-5.5 a4.25 4.25 0 0 1 8.5 0 v5.5 Z" fill="#26170b" stroke="#3d2a18" stroke-width="0.7"/><path d="M111.3 100.60 v2 M113.6 100.60 v2" stroke="#e8c090" stroke-width="1.1"/><circle cx="112.4" cy="105.20" r="1" fill="#fff4e0"/><path d="M108.8 107.50 h7.9" stroke="#6a5a40" stroke-width="0.9"/>
<rect x="213" y="97.40" width="56.5" height="11" fill="#191919"/>
<rect x="274" y="97.40" width="10.5" height="11" fill="#1f1f1f"/>
<rect x="289" y="97.40" width="55" height="11" fill="#191919"/>
<rect x="366" y="97.40" width="90" height="11" fill="#191919"/>
<path d="M260.50 101.70 l2.5 2.3 l2.5 -2.3" stroke="#bdbdbd" stroke-width="0.9" fill="none"/>
<path d="M335.30 101.70 l2.5 2.3 l2.5 -2.3" stroke="#bdbdbd" stroke-width="0.9" fill="none"/>
<path d="M446.80 101.70 l2.5 2.3 l2.5 -2.3" stroke="#bdbdbd" stroke-width="0.9" fill="none"/>
<path transform="translate(0 102.90)" d="M358.14 -3.82 L357.57 -3.97 L357.00 -4.06 L356.43 -4.08 L355.86 -4.05 L355.30 -3.95 L354.77 -3.80 L354.27 -3.59 L353.81 -3.33 L353.39 -3.03 L353.02 -2.69 L352.71 -2.32 L352.45 -1.92 L352.25 -1.50 L352.11 -1.07 L352.04 -0.63 L352.03 -0.19 L352.08 0.25 L352.19 0.67 L352.35 1.06 L352.57 1.44 L352.84 1.78 L353.15 2.09 L353.49 2.36 L353.87 2.59 L354.27 2.77 L354.69 2.91 L355.12 3.00 L355.55 3.04 L355.98 3.04 L356.40 2.99 L356.80 2.90 L357.19 2.76 L357.54 2.59 L357.87 2.38 L358.16 2.14 L358.41 1.88 L358.61 1.60 L358.78 1.30 L358.89 0.99 L358.97 0.67 L358.99 0.36 L358.98 0.04 L358.91 -0.26 L358.81 -0.55 L358.67 -0.82 L358.50 -1.07 L358.29 -1.29 L358.06 -1.49 L357.81 -1.66 L357.54 -1.80 L357.25 -1.90 L356.96 -1.97 L356.67 -2.01 L356.38 -2.02 L356.10 -1.99 L355.83 -1.94 L355.57 -1.85 L355.33 -1.75 L355.12 -1.61 L354.93 -1.47 L354.76 -1.30 L354.63 -1.12 L354.52 -0.93 L354.44 -0.74 L354.40 -0.54 L354.38 -0.35 L354.39 -0.16 L354.43 0.03 L354.49 0.20 L354.57 0.36 L354.68 0.50 L354.80 0.63 L354.93 0.74 L355.08 0.83 L355.23 0.91 L355.39 0.96 L355.55 0.99 L355.71 1.00 L355.86 1.00 L356.00 0.98" stroke="#acacac" stroke-width="1" fill="none"/>
<rect x="0" y="110.04" width="472" height="11.88" fill="#2b2b2b"/>
<path d="M6.6 115.78 Q10.5 111.38 14.4 115.78 Q10.5 120.18 6.6 115.78 Z" fill="#dcdcdc" stroke="#dcdcdc" stroke-width="0.8" stroke-linejoin="round"/><circle cx="10.5" cy="115.78" r="1.5" fill="#2b2b2b"/>
<rect x="29" y="110.98" width="9.8" height="10" fill="#1b1b1b"/>
<rect x="40" y="110.98" width="10" height="10" fill="#1b1b1b"/>
<path d="M58.5 112.98 L64.3 115.98 L58.5 118.98 Z" fill="#cfcfcf"/>
<rect x="67.7" y="111.38" width="10.2" height="9.2" fill="#e7a73a"/>
<path d="M108.5 121.18 v-5.5 a4.25 4.25 0 0 1 8.5 0 v5.5 Z" fill="#26170b" stroke="#3d2a18" stroke-width="0.7"/><path d="M111.3 113.68 v2 M113.6 113.68 v2" stroke="#e8c090" stroke-width="1.1"/><circle cx="112.4" cy="118.28" r="1" fill="#fff4e0"/><path d="M108.8 120.58 h7.9" stroke="#6a5a40" stroke-width="0.9"/>
<rect x="213" y="110.48" width="56.5" height="11" fill="#191919"/>
<rect x="274" y="110.48" width="10.5" height="11" fill="#1f1f1f"/>
<rect x="289" y="110.48" width="55" height="11" fill="#191919"/>
<rect x="366" y="110.48" width="90" height="11" fill="#191919"/>
<path d="M260.50 114.78 l2.5 2.3 l2.5 -2.3" stroke="#bdbdbd" stroke-width="0.9" fill="none"/>
<path d="M335.30 114.78 l2.5 2.3 l2.5 -2.3" stroke="#bdbdbd" stroke-width="0.9" fill="none"/>
<path d="M446.80 114.78 l2.5 2.3 l2.5 -2.3" stroke="#bdbdbd" stroke-width="0.9" fill="none"/>
<path transform="translate(0 115.98)" d="M358.14 -3.82 L357.57 -3.97 L357.00 -4.06 L356.43 -4.08 L355.86 -4.05 L355.30 -3.95 L354.77 -3.80 L354.27 -3.59 L353.81 -3.33 L353.39 -3.03 L353.02 -2.69 L352.71 -2.32 L352.45 -1.92 L352.25 -1.50 L352.11 -1.07 L352.04 -0.63 L352.03 -0.19 L352.08 0.25 L352.19 0.67 L352.35 1.06 L352.57 1.44 L352.84 1.78 L353.15 2.09 L353.49 2.36 L353.87 2.59 L354.27 2.77 L354.69 2.91 L355.12 3.00 L355.55 3.04 L355.98 3.04 L356.40 2.99 L356.80 2.90 L357.19 2.76 L357.54 2.59 L357.87 2.38 L358.16 2.14 L358.41 1.88 L358.61 1.60 L358.78 1.30 L358.89 0.99 L358.97 0.67 L358.99 0.36 L358.98 0.04 L358.91 -0.26 L358.81 -0.55 L358.67 -0.82 L358.50 -1.07 L358.29 -1.29 L358.06 -1.49 L357.81 -1.66 L357.54 -1.80 L357.25 -1.90 L356.96 -1.97 L356.67 -2.01 L356.38 -2.02 L356.10 -1.99 L355.83 -1.94 L355.57 -1.85 L355.33 -1.75 L355.12 -1.61 L354.93 -1.47 L354.76 -1.30 L354.63 -1.12 L354.52 -0.93 L354.44 -0.74 L354.40 -0.54 L354.38 -0.35 L354.39 -0.16 L354.43 0.03 L354.49 0.20 L354.57 0.36 L354.68 0.50 L354.80 0.63 L354.93 0.74 L355.08 0.83 L355.23 0.91 L355.39 0.96 L355.55 0.99 L355.71 1.00 L355.86 1.00 L356.00 0.98" stroke="#acacac" stroke-width="1" fill="none"/>
<rect x="0" y="123.12" width="472" height="11.88" fill="#2b2b2b"/>
<path d="M6.6 128.86 Q10.5 124.46 14.4 128.86 Q10.5 133.26 6.6 128.86 Z" fill="#dcdcdc" stroke="#dcdcdc" stroke-width="0.8" stroke-linejoin="round"/><circle cx="10.5" cy="128.86" r="1.5" fill="#2b2b2b"/>
<rect x="29" y="124.06" width="9.8" height="10" fill="#1b1b1b"/>
<rect x="40" y="124.06" width="10" height="10" fill="#1b1b1b"/>
<path d="M58.5 126.06 L64.3 129.06 L58.5 132.06 Z" fill="#cfcfcf"/>
<rect x="67.7" y="124.46" width="10.2" height="9.2" fill="#e7a73a"/>
<path d="M108.5 134.26 v-5.5 a4.25 4.25 0 0 1 8.5 0 v5.5 Z" fill="#26170b" stroke="#3d2a18" stroke-width="0.7"/><path d="M111.3 126.76 v2 M113.6 126.76 v2" stroke="#e8c090" stroke-width="1.1"/><circle cx="112.4" cy="131.36" r="1" fill="#fff4e0"/><path d="M108.8 133.66 h7.9" stroke="#6a5a40" stroke-width="0.9"/>
<rect x="213" y="123.56" width="56.5" height="11" fill="#191919"/>
<rect x="274" y="123.56" width="10.5" height="11" fill="#1f1f1f"/>
<rect x="289" y="123.56" width="55" height="11" fill="#191919"/>
<rect x="366" y="123.56" width="90" height="11" fill="#191919"/>
<path d="M260.50 127.86 l2.5 2.3 l2.5 -2.3" stroke="#bdbdbd" stroke-width="0.9" fill="none"/>
<path d="M335.30 127.86 l2.5 2.3 l2.5 -2.3" stroke="#bdbdbd" stroke-width="0.9" fill="none"/>
<path d="M446.80 127.86 l2.5 2.3 l2.5 -2.3" stroke="#bdbdbd" stroke-width="0.9" fill="none"/>
<path transform="translate(0 129.06)" d="M358.14 -3.82 L357.57 -3.97 L357.00 -4.06 L356.43 -4.08 L355.86 -4.05 L355.30 -3.95 L354.77 -3.80 L354.27 -3.59 L353.81 -3.33 L353.39 -3.03 L353.02 -2.69 L352.71 -2.32 L352.45 -1.92 L352.25 -1.50 L352.11 -1.07 L352.04 -0.63 L352.03 -0.19 L352.08 0.25 L352.19 0.67 L352.35 1.06 L352.57 1.44 L352.84 1.78 L353.15 2.09 L353.49 2.36 L353.87 2.59 L354.27 2.77 L354.69 2.91 L355.12 3.00 L355.55 3.04 L355.98 3.04 L356.40 2.99 L356.80 2.90 L357.19 2.76 L357.54 2.59 L357.87 2.38 L358.16 2.14 L358.41 1.88 L358.61 1.60 L358.78 1.30 L358.89 0.99 L358.97 0.67 L358.99 0.36 L358.98 0.04 L358.91 -0.26 L358.81 -0.55 L358.67 -0.82 L358.50 -1.07 L358.29 -1.29 L358.06 -1.49 L357.81 -1.66 L357.54 -1.80 L357.25 -1.90 L356.96 -1.97 L356.67 -2.01 L356.38 -2.02 L356.10 -1.99 L355.83 -1.94 L355.57 -1.85 L355.33 -1.75 L355.12 -1.61 L354.93 -1.47 L354.76 -1.30 L354.63 -1.12 L354.52 -0.93 L354.44 -0.74 L354.40 -0.54 L354.38 -0.35 L354.39 -0.16 L354.43 0.03 L354.49 0.20 L354.57 0.36 L354.68 0.50 L354.80 0.63 L354.93 0.74 L355.08 0.83 L355.23 0.91 L355.39 0.96 L355.55 0.99 L355.71 1.00 L355.86 1.00 L356.00 0.98" stroke="#acacac" stroke-width="1" fill="none"/>
<rect x="0" y="136.20" width="472" height="11.88" fill="#2b2b2b"/>
<path d="M6.6 141.94 Q10.5 137.54 14.4 141.94 Q10.5 146.34 6.6 141.94 Z" fill="#dcdcdc" stroke="#dcdcdc" stroke-width="0.8" stroke-linejoin="round"/><circle cx="10.5" cy="141.94" r="1.5" fill="#2b2b2b"/>
<rect x="29" y="137.14" width="9.8" height="10" fill="#1b1b1b"/>
<rect x="40" y="137.14" width="10" height="10" fill="#1b1b1b"/>
<path d="M58.5 139.14 L64.3 142.14 L58.5 145.14 Z" fill="#cfcfcf"/>
<rect x="67.7" y="137.54" width="10.2" height="9.2" fill="#e7a73a"/>
<path d="M108.5 147.34 v-5.5 a4.25 4.25 0 0 1 8.5 0 v5.5 Z" fill="#26170b" stroke="#3d2a18" stroke-width="0.7"/><path d="M111.3 139.84 v2 M113.6 139.84 v2" stroke="#e8c090" stroke-width="1.1"/><circle cx="112.4" cy="144.44" r="1" fill="#fff4e0"/><path d="M108.8 146.74 h7.9" stroke="#6a5a40" stroke-width="0.9"/>
<rect x="213" y="136.64" width="56.5" height="11" fill="#191919"/>
<rect x="274" y="136.64" width="10.5" height="11" fill="#1f1f1f"/>
<rect x="289" y="136.64" width="55" height="11" fill="#191919"/>
<rect x="366" y="136.64" width="90" height="11" fill="#191919"/>
<path d="M260.50 140.94 l2.5 2.3 l2.5 -2.3" stroke="#bdbdbd" stroke-width="0.9" fill="none"/>
<path d="M335.30 140.94 l2.5 2.3 l2.5 -2.3" stroke="#bdbdbd" stroke-width="0.9" fill="none"/>
<path d="M446.80 140.94 l2.5 2.3 l2.5 -2.3" stroke="#bdbdbd" stroke-width="0.9" fill="none"/>
<path transform="translate(0 142.14)" d="M358.14 -3.82 L357.57 -3.97 L357.00 -4.06 L356.43 -4.08 L355.86 -4.05 L355.30 -3.95 L354.77 -3.80 L354.27 -3.59 L353.81 -3.33 L353.39 -3.03 L353.02 -2.69 L352.71 -2.32 L352.45 -1.92 L352.25 -1.50 L352.11 -1.07 L352.04 -0.63 L352.03 -0.19 L352.08 0.25 L352.19 0.67 L352.35 1.06 L352.57 1.44 L352.84 1.78 L353.15 2.09 L353.49 2.36 L353.87 2.59 L354.27 2.77 L354.69 2.91 L355.12 3.00 L355.55 3.04 L355.98 3.04 L356.40 2.99 L356.80 2.90 L357.19 2.76 L357.54 2.59 L357.87 2.38 L358.16 2.14 L358.41 1.88 L358.61 1.60 L358.78 1.30 L358.89 0.99 L358.97 0.67 L358.99 0.36 L358.98 0.04 L358.91 -0.26 L358.81 -0.55 L358.67 -0.82 L358.50 -1.07 L358.29 -1.29 L358.06 -1.49 L357.81 -1.66 L357.54 -1.80 L357.25 -1.90 L356.96 -1.97 L356.67 -2.01 L356.38 -2.02 L356.10 -1.99 L355.83 -1.94 L355.57 -1.85 L355.33 -1.75 L355.12 -1.61 L354.93 -1.47 L354.76 -1.30 L354.63 -1.12 L354.52 -0.93 L354.44 -0.74 L354.40 -0.54 L354.38 -0.35 L354.39 -0.16 L354.43 0.03 L354.49 0.20 L354.57 0.36 L354.68 0.50 L354.80 0.63 L354.93 0.74 L355.08 0.83 L355.23 0.91 L355.39 0.96 L355.55 0.99 L355.71 1.00 L355.86 1.00 L356.00 0.98" stroke="#acacac" stroke-width="1" fill="none"/>
<rect x="0" y="149.28" width="472" height="11.88" fill="#2b2b2b"/>
<path d="M6.6 155.02 Q10.5 150.62 14.4 155.02 Q10.5 159.42 6.6 155.02 Z" fill="#dcdcdc" stroke="#dcdcdc" stroke-width="0.8" stroke-linejoin="round"/><circle cx="10.5" cy="155.02" r="1.5" fill="#2b2b2b"/>
<rect x="29" y="150.22" width="9.8" height="10" fill="#1b1b1b"/>
<rect x="40" y="150.22" width="10" height="10" fill="#1b1b1b"/>
<path d="M58.5 152.22 L64.3 155.22 L58.5 158.22 Z" fill="#cfcfcf"/>
<rect x="67.7" y="150.62" width="10.2" height="9.2" fill="#e7a73a"/>
<path d="M108.5 160.42 v-5.5 a4.25 4.25 0 0 1 8.5 0 v5.5 Z" fill="#26170b" stroke="#3d2a18" stroke-width="0.7"/><path d="M111.3 152.92 v2 M113.6 152.92 v2" stroke="#e8c090" stroke-width="1.1"/><circle cx="112.4" cy="157.52" r="1" fill="#fff4e0"/><path d="M108.8 159.82 h7.9" stroke="#6a5a40" stroke-width="0.9"/>
<rect x="213" y="149.72" width="56.5" height="11" fill="#191919"/>
<rect x="274" y="149.72" width="10.5" height="11" fill="#1f1f1f"/>
<rect x="289" y="149.72" width="55" height="11" fill="#191919"/>
<rect x="366" y="149.72" width="90" height="11" fill="#191919"/>
<path d="M260.50 154.02 l2.5 2.3 l2.5 -2.3" stroke="#bdbdbd" stroke-width="0.9" fill="none"/>
<path d="M335.30 154.02 l2.5 2.3 l2.5 -2.3" stroke="#bdbdbd" stroke-width="0.9" fill="none"/>
<path d="M446.80 154.02 l2.5 2.3 l2.5 -2.3" stroke="#bdbdbd" stroke-width="0.9" fill="none"/>
<path transform="translate(0 155.22)" d="M358.14 -3.82 L357.57 -3.97 L357.00 -4.06 L356.43 -4.08 L355.86 -4.05 L355.30 -3.95 L354.77 -3.80 L354.27 -3.59 L353.81 -3.33 L353.39 -3.03 L353.02 -2.69 L352.71 -2.32 L352.45 -1.92 L352.25 -1.50 L352.11 -1.07 L352.04 -0.63 L352.03 -0.19 L352.08 0.25 L352.19 0.67 L352.35 1.06 L352.57 1.44 L352.84 1.78 L353.15 2.09 L353.49 2.36 L353.87 2.59 L354.27 2.77 L354.69 2.91 L355.12 3.00 L355.55 3.04 L355.98 3.04 L356.40 2.99 L356.80 2.90 L357.19 2.76 L357.54 2.59 L357.87 2.38 L358.16 2.14 L358.41 1.88 L358.61 1.60 L358.78 1.30 L358.89 0.99 L358.97 0.67 L358.99 0.36 L358.98 0.04 L358.91 -0.26 L358.81 -0.55 L358.67 -0.82 L358.50 -1.07 L358.29 -1.29 L358.06 -1.49 L357.81 -1.66 L357.54 -1.80 L357.25 -1.90 L356.96 -1.97 L356.67 -2.01 L356.38 -2.02 L356.10 -1.99 L355.83 -1.94 L355.57 -1.85 L355.33 -1.75 L355.12 -1.61 L354.93 -1.47 L354.76 -1.30 L354.63 -1.12 L354.52 -0.93 L354.44 -0.74 L354.40 -0.54 L354.38 -0.35 L354.39 -0.16 L354.43 0.03 L354.49 0.20 L354.57 0.36 L354.68 0.50 L354.80 0.63 L354.93 0.74 L355.08 0.83 L355.23 0.91 L355.39 0.96 L355.55 0.99 L355.71 1.00 L355.86 1.00 L356.00 0.98" stroke="#acacac" stroke-width="1" fill="none"/>
<rect x="0" y="162.36" width="472" height="11.88" fill="#2b2b2b"/>
<path d="M6.6 168.10 Q10.5 163.70 14.4 168.10 Q10.5 172.50 6.6 168.10 Z" fill="#dcdcdc" stroke="#dcdcdc" stroke-width="0.8" stroke-linejoin="round"/><circle cx="10.5" cy="168.10" r="1.5" fill="#2b2b2b"/>
<rect x="29" y="163.30" width="9.8" height="10" fill="#1b1b1b"/>
<rect x="40" y="163.30" width="10" height="10" fill="#1b1b1b"/>
<path d="M58.5 165.30 L64.3 168.30 L58.5 171.30 Z" fill="#cfcfcf"/>
<rect x="67.7" y="163.70" width="10.2" height="9.2" fill="#e7a73a"/>
<path d="M108.5 173.50 v-5.5 a4.25 4.25 0 0 1 8.5 0 v5.5 Z" fill="#26170b" stroke="#3d2a18" stroke-width="0.7"/><path d="M111.3 166.00 v2 M113.6 166.00 v2" stroke="#e8c090" stroke-width="1.1"/><circle cx="112.4" cy="170.60" r="1" fill="#fff4e0"/><path d="M108.8 172.90 h7.9" stroke="#6a5a40" stroke-width="0.9"/>
<rect x="213" y="162.80" width="56.5" height="11" fill="#191919"/>
<rect x="274" y="162.80" width="10.5" height="11" fill="#1f1f1f"/>
<rect x="289" y="162.80" width="55" height="11" fill="#191919"/>
<rect x="366" y="162.80" width="90" height="11" fill="#191919"/>
<path d="M260.50 167.10 l2.5 2.3 l2.5 -2.3" stroke="#bdbdbd" stroke-width="0.9" fill="none"/>
<path d="M335.30 167.10 l2.5 2.3 l2.5 -2.3" stroke="#bdbdbd" stroke-width="0.9" fill="none"/>
<path d="M446.80 167.10 l2.5 2.3 l2.5 -2.3" stroke="#bdbdbd" stroke-width="0.9" fill="none"/>
<path transform="translate(0 168.30)" d="M358.14 -3.82 L357.57 -3.97 L357.00 -4.06 L356.43 -4.08 L355.86 -4.05 L355.30 -3.95 L354.77 -3.80 L354.27 -3.59 L353.81 -3.33 L353.39 -3.03 L353.02 -2.69 L352.71 -2.32 L352.45 -1.92 L352.25 -1.50 L352.11 -1.07 L352.04 -0.63 L352.03 -0.19 L352.08 0.25 L352.19 0.67 L352.35 1.06 L352.57 1.44 L352.84 1.78 L353.15 2.09 L353.49 2.36 L353.87 2.59 L354.27 2.77 L354.69 2.91 L355.12 3.00 L355.55 3.04 L355.98 3.04 L356.40 2.99 L356.80 2.90 L357.19 2.76 L357.54 2.59 L357.87 2.38 L358.16 2.14 L358.41 1.88 L358.61 1.60 L358.78 1.30 L358.89 0.99 L358.97 0.67 L358.99 0.36 L358.98 0.04 L358.91 -0.26 L358.81 -0.55 L358.67 -0.82 L358.50 -1.07 L358.29 -1.29 L358.06 -1.49 L357.81 -1.66 L357.54 -1.80 L357.25 -1.90 L356.96 -1.97 L356.67 -2.01 L356.38 -2.02 L356.10 -1.99 L355.83 -1.94 L355.57 -1.85 L355.33 -1.75 L355.12 -1.61 L354.93 -1.47 L354.76 -1.30 L354.63 -1.12 L354.52 -0.93 L354.44 -0.74 L354.40 -0.54 L354.38 -0.35 L354.39 -0.16 L354.43 0.03 L354.49 0.20 L354.57 0.36 L354.68 0.50 L354.80 0.63 L354.93 0.74 L355.08 0.83 L355.23 0.91 L355.39 0.96 L355.55 0.99 L355.71 1.00 L355.86 1.00 L356.00 0.98" stroke="#acacac" stroke-width="1" fill="none"/>
<rect x="0" y="175.44" width="472" height="11.88" fill="#2b2b2b"/>
<path d="M6.6 181.18 Q10.5 176.78 14.4 181.18 Q10.5 185.58 6.6 181.18 Z" fill="#dcdcdc" stroke="#dcdcdc" stroke-width="0.8" stroke-linejoin="round"/><circle cx="10.5" cy="181.18" r="1.5" fill="#2b2b2b"/>
<rect x="29" y="176.38" width="9.8" height="10" fill="#1b1b1b"/>
<rect x="40" y="176.38" width="10" height="10" fill="#1b1b1b"/>
<path d="M58.5 178.38 L64.3 181.38 L58.5 184.38 Z" fill="#cfcfcf"/>
<rect x="67.7" y="176.78" width="10.2" height="9.2" fill="#e6dc6c"/>
<polygon points="112.00,176.78 113.23,180.08 116.76,180.23 114.00,182.43 114.94,185.83 112.00,183.88 109.06,185.83 110.00,182.43 107.24,180.23 110.77,180.08" fill="#d8d8d8"/>
<path d="M121.5 177.58 v7.5 M125 177.58 v7.5 M119.8 179.78 h7 M119.8 183.18 h7" stroke="#9fd6c8" stroke-width="1.1"/>
<rect x="213" y="175.88" width="56.5" height="11" fill="#191919"/>
<rect x="274" y="175.88" width="10.5" height="11" fill="#1f1f1f"/>
<rect x="289" y="175.88" width="55" height="11" fill="#191919"/>
<rect x="366" y="175.88" width="90" height="11" fill="#191919"/>
<path d="M260.50 180.18 l2.5 2.3 l2.5 -2.3" stroke="#bdbdbd" stroke-width="0.9" fill="none"/>
<path d="M335.30 180.18 l2.5 2.3 l2.5 -2.3" stroke="#bdbdbd" stroke-width="0.9" fill="none"/>
<path d="M446.80 180.18 l2.5 2.3 l2.5 -2.3" stroke="#bdbdbd" stroke-width="0.9" fill="none"/>
<path transform="translate(0 181.38)" d="M358.14 -3.82 L357.57 -3.97 L357.00 -4.06 L356.43 -4.08 L355.86 -4.05 L355.30 -3.95 L354.77 -3.80 L354.27 -3.59 L353.81 -3.33 L353.39 -3.03 L353.02 -2.69 L352.71 -2.32 L352.45 -1.92 L352.25 -1.50 L352.11 -1.07 L352.04 -0.63 L352.03 -0.19 L352.08 0.25 L352.19 0.67 L352.35 1.06 L352.57 1.44 L352.84 1.78 L353.15 2.09 L353.49 2.36 L353.87 2.59 L354.27 2.77 L354.69 2.91 L355.12 3.00 L355.55 3.04 L355.98 3.04 L356.40 2.99 L356.80 2.90 L357.19 2.76 L357.54 2.59 L357.87 2.38 L358.16 2.14 L358.41 1.88 L358.61 1.60 L358.78 1.30 L358.89 0.99 L358.97 0.67 L358.99 0.36 L358.98 0.04 L358.91 -0.26 L358.81 -0.55 L358.67 -0.82 L358.50 -1.07 L358.29 -1.29 L358.06 -1.49 L357.81 -1.66 L357.54 -1.80 L357.25 -1.90 L356.96 -1.97 L356.67 -2.01 L356.38 -2.02 L356.10 -1.99 L355.83 -1.94 L355.57 -1.85 L355.33 -1.75 L355.12 -1.61 L354.93 -1.47 L354.76 -1.30 L354.63 -1.12 L354.52 -0.93 L354.44 -0.74 L354.40 -0.54 L354.38 -0.35 L354.39 -0.16 L354.43 0.03 L354.49 0.20 L354.57 0.36 L354.68 0.50 L354.80 0.63 L354.93 0.74 L355.08 0.83 L355.23 0.91 L355.39 0.96 L355.55 0.99 L355.71 1.00 L355.86 1.00 L356.00 0.98" stroke="#acacac" stroke-width="1" fill="none"/>
<rect x="0" y="188.52" width="472" height="11.88" fill="#2b2b2b"/>
<path d="M6.6 194.26 Q10.5 189.86 14.4 194.26 Q10.5 198.66 6.6 194.26 Z" fill="#dcdcdc" stroke="#dcdcdc" stroke-width="0.8" stroke-linejoin="round"/><circle cx="10.5" cy="194.26" r="1.5" fill="#2b2b2b"/>
<rect x="29" y="189.46" width="9.8" height="10" fill="#1b1b1b"/>
<rect x="40" y="189.46" width="10" height="10" fill="#1b1b1b"/>
<path d="M58.5 191.46 L64.3 194.46 L58.5 197.46 Z" fill="#cfcfcf"/>
<rect x="67.7" y="189.86" width="10.2" height="9.2" fill="#e6dc6c"/>
<polygon points="112.00,189.86 113.23,193.16 116.76,193.31 114.00,195.51 114.94,198.91 112.00,196.96 109.06,198.91 110.00,195.51 107.24,193.31 110.77,193.16" fill="#d8d8d8"/>
<path d="M121.5 190.66 v7.5 M125 190.66 v7.5 M119.8 192.86 h7 M119.8 196.26 h7" stroke="#9fd6c8" stroke-width="1.1"/>
<rect x="213" y="188.96" width="56.5" height="11" fill="#191919"/>
<rect x="274" y="188.96" width="10.5" height="11" fill="#1f1f1f"/>
<rect x="289" y="188.96" width="55" height="11" fill="#191919"/>
<rect x="366" y="188.96" width="90" height="11" fill="#191919"/>
<path d="M260.50 193.26 l2.5 2.3 l2.5 -2.3" stroke="#bdbdbd" stroke-width="0.9" fill="none"/>
<path d="M335.30 193.26 l2.5 2.3 l2.5 -2.3" stroke="#bdbdbd" stroke-width="0.9" fill="none"/>
<path d="M446.80 193.26 l2.5 2.3 l2.5 -2.3" stroke="#bdbdbd" stroke-width="0.9" fill="none"/>
<path transform="translate(0 194.46)" d="M358.14 -3.82 L357.57 -3.97 L357.00 -4.06 L356.43 -4.08 L355.86 -4.05 L355.30 -3.95 L354.77 -3.80 L354.27 -3.59 L353.81 -3.33 L353.39 -3.03 L353.02 -2.69 L352.71 -2.32 L352.45 -1.92 L352.25 -1.50 L352.11 -1.07 L352.04 -0.63 L352.03 -0.19 L352.08 0.25 L352.19 0.67 L352.35 1.06 L352.57 1.44 L352.84 1.78 L353.15 2.09 L353.49 2.36 L353.87 2.59 L354.27 2.77 L354.69 2.91 L355.12 3.00 L355.55 3.04 L355.98 3.04 L356.40 2.99 L356.80 2.90 L357.19 2.76 L357.54 2.59 L357.87 2.38 L358.16 2.14 L358.41 1.88 L358.61 1.60 L358.78 1.30 L358.89 0.99 L358.97 0.67 L358.99 0.36 L358.98 0.04 L358.91 -0.26 L358.81 -0.55 L358.67 -0.82 L358.50 -1.07 L358.29 -1.29 L358.06 -1.49 L357.81 -1.66 L357.54 -1.80 L357.25 -1.90 L356.96 -1.97 L356.67 -2.01 L356.38 -2.02 L356.10 -1.99 L355.83 -1.94 L355.57 -1.85 L355.33 -1.75 L355.12 -1.61 L354.93 -1.47 L354.76 -1.30 L354.63 -1.12 L354.52 -0.93 L354.44 -0.74 L354.40 -0.54 L354.38 -0.35 L354.39 -0.16 L354.43 0.03 L354.49 0.20 L354.57 0.36 L354.68 0.50 L354.80 0.63 L354.93 0.74 L355.08 0.83 L355.23 0.91 L355.39 0.96 L355.55 0.99 L355.71 1.00 L355.86 1.00 L356.00 0.98" stroke="#acacac" stroke-width="1" fill="none"/>
<rect x="0" y="201.60" width="472" height="11.88" fill="#2b2b2b"/>
<path d="M6.6 207.34 Q10.5 202.94 14.4 207.34 Q10.5 211.74 6.6 207.34 Z" fill="#dcdcdc" stroke="#dcdcdc" stroke-width="0.8" stroke-linejoin="round"/><circle cx="10.5" cy="207.34" r="1.5" fill="#2b2b2b"/>
<rect x="29" y="202.54" width="9.8" height="10" fill="#1b1b1b"/>
<rect x="40" y="202.54" width="10" height="10" fill="#1b1b1b"/>
<path d="M58.5 204.54 L64.3 207.54 L58.5 210.54 Z" fill="#cfcfcf"/>
<rect x="67.7" y="202.94" width="10.2" height="9.2" fill="#e6dc6c"/>
<polygon points="112.00,202.94 113.23,206.24 116.76,206.39 114.00,208.59 114.94,211.99 112.00,210.04 109.06,211.99 110.00,208.59 107.24,206.39 110.77,206.24" fill="#d8d8d8"/>
<path d="M121.5 203.74 v7.5 M125 203.74 v7.5 M119.8 205.94 h7 M119.8 209.34 h7" stroke="#9fd6c8" stroke-width="1.1"/>
<rect x="213" y="202.04" width="56.5" height="11" fill="#191919"/>
<rect x="274" y="202.04" width="10.5" height="11" fill="#1f1f1f"/>
<rect x="289" y="202.04" width="55" height="11" fill="#191919"/>
<rect x="366" y="202.04" width="90" height="11" fill="#191919"/>
<path d="M260.50 206.34 l2.5 2.3 l2.5 -2.3" stroke="#bdbdbd" stroke-width="0.9" fill="none"/>
<path d="M335.30 206.34 l2.5 2.3 l2.5 -2.3" stroke="#bdbdbd" stroke-width="0.9" fill="none"/>
<path d="M446.80 206.34 l2.5 2.3 l2.5 -2.3" stroke="#bdbdbd" stroke-width="0.9" fill="none"/>
<path transform="translate(0 207.54)" d="M358.14 -3.82 L357.57 -3.97 L357.00 -4.06 L356.43 -4.08 L355.86 -4.05 L355.30 -3.95 L354.77 -3.80 L354.27 -3.59 L353.81 -3.33 L353.39 -3.03 L353.02 -2.69 L352.71 -2.32 L352.45 -1.92 L352.25 -1.50 L352.11 -1.07 L352.04 -0.63 L352.03 -0.19 L352.08 0.25 L352.19 0.67 L352.35 1.06 L352.57 1.44 L352.84 1.78 L353.15 2.09 L353.49 2.36 L353.87 2.59 L354.27 2.77 L354.69 2.91 L355.12 3.00 L355.55 3.04 L355.98 3.04 L356.40 2.99 L356.80 2.90 L357.19 2.76 L357.54 2.59 L357.87 2.38 L358.16 2.14 L358.41 1.88 L358.61 1.60 L358.78 1.30 L358.89 0.99 L358.97 0.67 L358.99 0.36 L358.98 0.04 L358.91 -0.26 L358.81 -0.55 L358.67 -0.82 L358.50 -1.07 L358.29 -1.29 L358.06 -1.49 L357.81 -1.66 L357.54 -1.80 L357.25 -1.90 L356.96 -1.97 L356.67 -2.01 L356.38 -2.02 L356.10 -1.99 L355.83 -1.94 L355.57 -1.85 L355.33 -1.75 L355.12 -1.61 L354.93 -1.47 L354.76 -1.30 L354.63 -1.12 L354.52 -0.93 L354.44 -0.74 L354.40 -0.54 L354.38 -0.35 L354.39 -0.16 L354.43 0.03 L354.49 0.20 L354.57 0.36 L354.68 0.50 L354.80 0.63 L354.93 0.74 L355.08 0.83 L355.23 0.91 L355.39 0.96 L355.55 0.99 L355.71 1.00 L355.86 1.00 L356.00 0.98" stroke="#acacac" stroke-width="1" fill="none"/>
<rect x="0" y="214.68" width="472" height="11.88" fill="#2b2b2b"/>
<path d="M6.6 220.42 Q10.5 216.02 14.4 220.42 Q10.5 224.82 6.6 220.42 Z" fill="#dcdcdc" stroke="#dcdcdc" stroke-width="0.8" stroke-linejoin="round"/><circle cx="10.5" cy="220.42" r="1.5" fill="#2b2b2b"/>
<rect x="29" y="215.62" width="9.8" height="10" fill="#1b1b1b"/>
<rect x="40" y="215.62" width="10" height="10" fill="#1b1b1b"/>
<path d="M58.5 217.62 L64.3 220.62 L58.5 223.62 Z" fill="#cfcfcf"/>
<rect x="67.7" y="216.02" width="10.2" height="9.2" fill="#e6dc6c"/>
<polygon points="112.00,216.02 113.23,219.32 116.76,219.47 114.00,221.67 114.94,225.07 112.00,223.12 109.06,225.07 110.00,221.67 107.24,219.47 110.77,219.32" fill="#d8d8d8"/>
<path d="M121.5 216.82 v7.5 M125 216.82 v7.5 M119.8 219.02 h7 M119.8 222.42 h7" stroke="#9fd6c8" stroke-width="1.1"/>
<rect x="213" y="215.12" width="56.5" height="11" fill="#191919"/>
<rect x="274" y="215.12" width="10.5" height="11" fill="#1f1f1f"/>
<rect x="289" y="215.12" width="55" height="11" fill="#191919"/>
<rect x="366" y="215.12" width="90" height="11" fill="#191919"/>
<path d="M260.50 219.42 l2.5 2.3 l2.5 -2.3" stroke="#bdbdbd" stroke-width="0.9" fill="none"/>
<path d="M335.30 219.42 l2.5 2.3 l2.5 -2.3" stroke="#bdbdbd" stroke-width="0.9" fill="none"/>
<path d="M446.80 219.42 l2.5 2.3 l2.5 -2.3" stroke="#bdbdbd" stroke-width="0.9" fill="none"/>
<path transform="translate(0 220.62)" d="M358.14 -3.82 L357.57 -3.97 L357.00 -4.06 L356.43 -4.08 L355.86 -4.05 L355.30 -3.95 L354.77 -3.80 L354.27 -3.59 L353.81 -3.33 L353.39 -3.03 L353.02 -2.69 L352.71 -2.32 L352.45 -1.92 L352.25 -1.50 L352.11 -1.07 L352.04 -0.63 L352.03 -0.19 L352.08 0.25 L352.19 0.67 L352.35 1.06 L352.57 1.44 L352.84 1.78 L353.15 2.09 L353.49 2.36 L353.87 2.59 L354.27 2.77 L354.69 2.91 L355.12 3.00 L355.55 3.04 L355.98 3.04 L356.40 2.99 L356.80 2.90 L357.19 2.76 L357.54 2.59 L357.87 2.38 L358.16 2.14 L358.41 1.88 L358.61 1.60 L358.78 1.30 L358.89 0.99 L358.97 0.67 L358.99 0.36 L358.98 0.04 L358.91 -0.26 L358.81 -0.55 L358.67 -0.82 L358.50 -1.07 L358.29 -1.29 L358.06 -1.49 L357.81 -1.66 L357.54 -1.80 L357.25 -1.90 L356.96 -1.97 L356.67 -2.01 L356.38 -2.02 L356.10 -1.99 L355.83 -1.94 L355.57 -1.85 L355.33 -1.75 L355.12 -1.61 L354.93 -1.47 L354.76 -1.30 L354.63 -1.12 L354.52 -0.93 L354.44 -0.74 L354.40 -0.54 L354.38 -0.35 L354.39 -0.16 L354.43 0.03 L354.49 0.20 L354.57 0.36 L354.68 0.50 L354.80 0.63 L354.93 0.74 L355.08 0.83 L355.23 0.91 L355.39 0.96 L355.55 0.99 L355.71 1.00 L355.86 1.00 L356.00 0.98" stroke="#acacac" stroke-width="1" fill="none"/>
<rect x="0" y="227.76" width="472" height="11.88" fill="#2b2b2b"/>
<path d="M6.6 233.50 Q10.5 229.10 14.4 233.50 Q10.5 237.90 6.6 233.50 Z" fill="#dcdcdc" stroke="#dcdcdc" stroke-width="0.8" stroke-linejoin="round"/><circle cx="10.5" cy="233.50" r="1.5" fill="#2b2b2b"/>
<rect x="29" y="228.70" width="9.8" height="10" fill="#1b1b1b"/>
<rect x="40" y="228.70" width="10" height="10" fill="#1b1b1b"/>
<path d="M58.5 230.70 L64.3 233.70 L58.5 236.70 Z" fill="#cfcfcf"/>
<rect x="67.7" y="229.10" width="10.2" height="9.2" fill="#e6dc6c"/>
<polygon points="112.00,229.10 113.23,232.40 116.76,232.55 114.00,234.75 114.94,238.15 112.00,236.20 109.06,238.15 110.00,234.75 107.24,232.55 110.77,232.40" fill="#d8d8d8"/>
<path d="M121.5 229.90 v7.5 M125 229.90 v7.5 M119.8 232.10 h7 M119.8 235.50 h7" stroke="#9fd6c8" stroke-width="1.1"/>
<rect x="213" y="228.20" width="56.5" height="11" fill="#191919"/>
<rect x="274" y="228.20" width="10.5" height="11" fill="#1f1f1f"/>
<rect x="289" y="228.20" width="55" height="11" fill="#191919"/>
<rect x="366" y="228.20" width="90" height="11" fill="#191919"/>
<path d="M260.50 232.50 l2.5 2.3 l2.5 -2.3" stroke="#bdbdbd" stroke-width="0.9" fill="none"/>
<path d="M335.30 232.50 l2.5 2.3 l2.5 -2.3" stroke="#bdbdbd" stroke-width="0.9" fill="none"/>
<path d="M446.80 232.50 l2.5 2.3 l2.5 -2.3" stroke="#bdbdbd" stroke-width="0.9" fill="none"/>
<path transform="translate(0 233.70)" d="M358.14 -3.82 L357.57 -3.97 L357.00 -4.06 L356.43 -4.08 L355.86 -4.05 L355.30 -3.95 L354.77 -3.80 L354.27 -3.59 L353.81 -3.33 L353.39 -3.03 L353.02 -2.69 L352.71 -2.32 L352.45 -1.92 L352.25 -1.50 L352.11 -1.07 L352.04 -0.63 L352.03 -0.19 L352.08 0.25 L352.19 0.67 L352.35 1.06 L352.57 1.44 L352.84 1.78 L353.15 2.09 L353.49 2.36 L353.87 2.59 L354.27 2.77 L354.69 2.91 L355.12 3.00 L355.55 3.04 L355.98 3.04 L356.40 2.99 L356.80 2.90 L357.19 2.76 L357.54 2.59 L357.87 2.38 L358.16 2.14 L358.41 1.88 L358.61 1.60 L358.78 1.30 L358.89 0.99 L358.97 0.67 L358.99 0.36 L358.98 0.04 L358.91 -0.26 L358.81 -0.55 L358.67 -0.82 L358.50 -1.07 L358.29 -1.29 L358.06 -1.49 L357.81 -1.66 L357.54 -1.80 L357.25 -1.90 L356.96 -1.97 L356.67 -2.01 L356.38 -2.02 L356.10 -1.99 L355.83 -1.94 L355.57 -1.85 L355.33 -1.75 L355.12 -1.61 L354.93 -1.47 L354.76 -1.30 L354.63 -1.12 L354.52 -0.93 L354.44 -0.74 L354.40 -0.54 L354.38 -0.35 L354.39 -0.16 L354.43 0.03 L354.49 0.20 L354.57 0.36 L354.68 0.50 L354.80 0.63 L354.93 0.74 L355.08 0.83 L355.23 0.91 L355.39 0.96 L355.55 0.99 L355.71 1.00 L355.86 1.00 L356.00 0.98" stroke="#acacac" stroke-width="1" fill="none"/>
<rect x="0" y="240.84" width="472" height="11.88" fill="#2b2b2b"/>
<path d="M6.6 246.58 Q10.5 242.18 14.4 246.58 Q10.5 250.98 6.6 246.58 Z" fill="#dcdcdc" stroke="#dcdcdc" stroke-width="0.8" stroke-linejoin="round"/><circle cx="10.5" cy="246.58" r="1.5" fill="#2b2b2b"/>
<rect x="29" y="241.78" width="9.8" height="10" fill="#1b1b1b"/>
<rect x="40" y="241.78" width="10" height="10" fill="#1b1b1b"/>
<path d="M58.5 243.78 L64.3 246.78 L58.5 249.78 Z" fill="#cfcfcf"/>
<rect x="67.7" y="242.18" width="10.2" height="9.2" fill="#e6dc6c"/>
<polygon points="112.00,242.18 113.23,245.48 116.76,245.63 114.00,247.83 114.94,251.23 112.00,249.28 109.06,251.23 110.00,247.83 107.24,245.63 110.77,245.48" fill="#d8d8d8"/>
<path d="M121.5 242.98 v7.5 M125 242.98 v7.5 M119.8 245.18 h7 M119.8 248.58 h7" stroke="#9fd6c8" stroke-width="1.1"/>
<rect x="213" y="241.28" width="56.5" height="11" fill="#191919"/>
<rect x="274" y="241.28" width="10.5" height="11" fill="#1f1f1f"/>
<rect x="289" y="241.28" width="55" height="11" fill="#191919"/>
<rect x="366" y="241.28" width="90" height="11" fill="#191919"/>
<path d="M260.50 245.58 l2.5 2.3 l2.5 -2.3" stroke="#bdbdbd" stroke-width="0.9" fill="none"/>
<path d="M335.30 245.58 l2.5 2.3 l2.5 -2.3" stroke="#bdbdbd" stroke-width="0.9" fill="none"/>
<path d="M446.80 245.58 l2.5 2.3 l2.5 -2.3" stroke="#bdbdbd" stroke-width="0.9" fill="none"/>
<path transform="translate(0 246.78)" d="M358.14 -3.82 L357.57 -3.97 L357.00 -4.06 L356.43 -4.08 L355.86 -4.05 L355.30 -3.95 L354.77 -3.80 L354.27 -3.59 L353.81 -3.33 L353.39 -3.03 L353.02 -2.69 L352.71 -2.32 L352.45 -1.92 L352.25 -1.50 L352.11 -1.07 L352.04 -0.63 L352.03 -0.19 L352.08 0.25 L352.19 0.67 L352.35 1.06 L352.57 1.44 L352.84 1.78 L353.15 2.09 L353.49 2.36 L353.87 2.59 L354.27 2.77 L354.69 2.91 L355.12 3.00 L355.55 3.04 L355.98 3.04 L356.40 2.99 L356.80 2.90 L357.19 2.76 L357.54 2.59 L357.87 2.38 L358.16 2.14 L358.41 1.88 L358.61 1.60 L358.78 1.30 L358.89 0.99 L358.97 0.67 L358.99 0.36 L358.98 0.04 L358.91 -0.26 L358.81 -0.55 L358.67 -0.82 L358.50 -1.07 L358.29 -1.29 L358.06 -1.49 L357.81 -1.66 L357.54 -1.80 L357.25 -1.90 L356.96 -1.97 L356.67 -2.01 L356.38 -2.02 L356.10 -1.99 L355.83 -1.94 L355.57 -1.85 L355.33 -1.75 L355.12 -1.61 L354.93 -1.47 L354.76 -1.30 L354.63 -1.12 L354.52 -0.93 L354.44 -0.74 L354.40 -0.54 L354.38 -0.35 L354.39 -0.16 L354.43 0.03 L354.49 0.20 L354.57 0.36 L354.68 0.50 L354.80 0.63 L354.93 0.74 L355.08 0.83 L355.23 0.91 L355.39 0.96 L355.55 0.99 L355.71 1.00 L355.86 1.00 L356.00 0.98" stroke="#acacac" stroke-width="1" fill="none"/>
<rect x="0" y="253.92" width="472" height="11.88" fill="#2b2b2b"/>
<rect x="4.5" y="254.86" width="11" height="10" fill="#1b1b1b"/>
<rect x="40" y="254.86" width="10" height="10" fill="#1b1b1b"/>
<path d="M58.5 256.86 L64.3 259.86 L58.5 262.86 Z" fill="#cfcfcf"/>
<rect x="67.7" y="255.26" width="10.2" height="9.2" fill="#e6dc6c"/>
<path d="M108.5 265.06 v-5.5 a4.25 4.25 0 0 1 8.5 0 v5.5 Z" fill="#26170b" stroke="#3d2a18" stroke-width="0.7"/><path d="M111.3 257.56 v2 M113.6 257.56 v2" stroke="#e8c090" stroke-width="1.1"/><circle cx="112.4" cy="262.16" r="1" fill="#fff4e0"/><path d="M108.8 264.46 h7.9" stroke="#6a5a40" stroke-width="0.9"/>
<rect x="213" y="254.36" width="56.5" height="11" fill="#191919"/>
<rect x="274" y="254.36" width="10.5" height="11" fill="#1f1f1f"/>
<rect x="289" y="254.36" width="55" height="11" fill="#191919"/>
<rect x="366" y="254.36" width="90" height="11" fill="#191919"/>
<path d="M260.50 258.66 l2.5 2.3 l2.5 -2.3" stroke="#bdbdbd" stroke-width="0.9" fill="none"/>
<path d="M335.30 258.66 l2.5 2.3 l2.5 -2.3" stroke="#bdbdbd" stroke-width="0.9" fill="none"/>
<path d="M446.80 258.66 l2.5 2.3 l2.5 -2.3" stroke="#bdbdbd" stroke-width="0.9" fill="none"/>
<path transform="translate(0 259.86)" d="M358.14 -3.82 L357.57 -3.97 L357.00 -4.06 L356.43 -4.08 L355.86 -4.05 L355.30 -3.95 L354.77 -3.80 L354.27 -3.59 L353.81 -3.33 L353.39 -3.03 L353.02 -2.69 L352.71 -2.32 L352.45 -1.92 L352.25 -1.50 L352.11 -1.07 L352.04 -0.63 L352.03 -0.19 L352.08 0.25 L352.19 0.67 L352.35 1.06 L352.57 1.44 L352.84 1.78 L353.15 2.09 L353.49 2.36 L353.87 2.59 L354.27 2.77 L354.69 2.91 L355.12 3.00 L355.55 3.04 L355.98 3.04 L356.40 2.99 L356.80 2.90 L357.19 2.76 L357.54 2.59 L357.87 2.38 L358.16 2.14 L358.41 1.88 L358.61 1.60 L358.78 1.30 L358.89 0.99 L358.97 0.67 L358.99 0.36 L358.98 0.04 L358.91 -0.26 L358.81 -0.55 L358.67 -0.82 L358.50 -1.07 L358.29 -1.29 L358.06 -1.49 L357.81 -1.66 L357.54 -1.80 L357.25 -1.90 L356.96 -1.97 L356.67 -2.01 L356.38 -2.02 L356.10 -1.99 L355.83 -1.94 L355.57 -1.85 L355.33 -1.75 L355.12 -1.61 L354.93 -1.47 L354.76 -1.30 L354.63 -1.12 L354.52 -0.93 L354.44 -0.74 L354.40 -0.54 L354.38 -0.35 L354.39 -0.16 L354.43 0.03 L354.49 0.20 L354.57 0.36 L354.68 0.50 L354.80 0.63 L354.93 0.74 L355.08 0.83 L355.23 0.91 L355.39 0.96 L355.55 0.99 L355.71 1.00 L355.86 1.00 L356.00 0.98" stroke="#acacac" stroke-width="1" fill="none"/>
<rect x="0" y="267.00" width="472" height="11.88" fill="#2b2b2b"/>
<rect x="4.5" y="267.94" width="11" height="10" fill="#1b1b1b"/>
<rect x="40" y="267.94" width="10" height="10" fill="#1b1b1b"/>
<path d="M58.5 269.94 L64.3 272.94 L58.5 275.94 Z" fill="#cfcfcf"/>
<rect x="67.7" y="268.34" width="10.2" height="9.2" fill="#e6dc6c"/>
<path d="M108.5 278.14 v-5.5 a4.25 4.25 0 0 1 8.5 0 v5.5 Z" fill="#26170b" stroke="#3d2a18" stroke-width="0.7"/><path d="M111.3 270.64 v2 M113.6 270.64 v2" stroke="#e8c090" stroke-width="1.1"/><circle cx="112.4" cy="275.24" r="1" fill="#fff4e0"/><path d="M108.8 277.54 h7.9" stroke="#6a5a40" stroke-width="0.9"/>
<rect x="213" y="267.44" width="56.5" height="11" fill="#191919"/>
<rect x="274" y="267.44" width="10.5" height="11" fill="#1f1f1f"/>
<rect x="289" y="267.44" width="55" height="11" fill="#191919"/>
<rect x="366" y="267.44" width="90" height="11" fill="#191919"/>
<path d="M260.50 271.74 l2.5 2.3 l2.5 -2.3" stroke="#bdbdbd" stroke-width="0.9" fill="none"/>
<path d="M335.30 271.74 l2.5 2.3 l2.5 -2.3" stroke="#bdbdbd" stroke-width="0.9" fill="none"/>
<path d="M446.80 271.74 l2.5 2.3 l2.5 -2.3" stroke="#bdbdbd" stroke-width="0.9" fill="none"/>
<path transform="translate(0 272.94)" d="M358.14 -3.82 L357.57 -3.97 L357.00 -4.06 L356.43 -4.08 L355.86 -4.05 L355.30 -3.95 L354.77 -3.80 L354.27 -3.59 L353.81 -3.33 L353.39 -3.03 L353.02 -2.69 L352.71 -2.32 L352.45 -1.92 L352.25 -1.50 L352.11 -1.07 L352.04 -0.63 L352.03 -0.19 L352.08 0.25 L352.19 0.67 L352.35 1.06 L352.57 1.44 L352.84 1.78 L353.15 2.09 L353.49 2.36 L353.87 2.59 L354.27 2.77 L354.69 2.91 L355.12 3.00 L355.55 3.04 L355.98 3.04 L356.40 2.99 L356.80 2.90 L357.19 2.76 L357.54 2.59 L357.87 2.38 L358.16 2.14 L358.41 1.88 L358.61 1.60 L358.78 1.30 L358.89 0.99 L358.97 0.67 L358.99 0.36 L358.98 0.04 L358.91 -0.26 L358.81 -0.55 L358.67 -0.82 L358.50 -1.07 L358.29 -1.29 L358.06 -1.49 L357.81 -1.66 L357.54 -1.80 L357.25 -1.90 L356.96 -1.97 L356.67 -2.01 L356.38 -2.02 L356.10 -1.99 L355.83 -1.94 L355.57 -1.85 L355.33 -1.75 L355.12 -1.61 L354.93 -1.47 L354.76 -1.30 L354.63 -1.12 L354.52 -0.93 L354.44 -0.74 L354.40 -0.54 L354.38 -0.35 L354.39 -0.16 L354.43 0.03 L354.49 0.20 L354.57 0.36 L354.68 0.50 L354.80 0.63 L354.93 0.74 L355.08 0.83 L355.23 0.91 L355.39 0.96 L355.55 0.99 L355.71 1.00 L355.86 1.00 L356.00 0.98" stroke="#acacac" stroke-width="1" fill="none"/>
<rect x="0" y="280.08" width="472" height="11.88" fill="#2b2b2b"/>
<rect x="4.5" y="281.02" width="11" height="10" fill="#1b1b1b"/>
<rect x="40" y="281.02" width="10" height="10" fill="#1b1b1b"/>
<path d="M58.5 283.02 L64.3 286.02 L58.5 289.02 Z" fill="#cfcfcf"/>
<rect x="67.7" y="281.42" width="10.2" height="9.2" fill="#e6dc6c"/>
<path d="M108.5 291.22 v-5.5 a4.25 4.25 0 0 1 8.5 0 v5.5 Z" fill="#26170b" stroke="#3d2a18" stroke-width="0.7"/><path d="M111.3 283.72 v2 M113.6 283.72 v2" stroke="#e8c090" stroke-width="1.1"/><circle cx="112.4" cy="288.32" r="1" fill="#fff4e0"/><path d="M108.8 290.62 h7.9" stroke="#6a5a40" stroke-width="0.9"/>
<rect x="213" y="280.52" width="56.5" height="11" fill="#191919"/>
<rect x="274" y="280.52" width="10.5" height="11" fill="#1f1f1f"/>
<rect x="289" y="280.52" width="55" height="11" fill="#191919"/>
<rect x="366" y="280.52" width="90" height="11" fill="#191919"/>
<path d="M260.50 284.82 l2.5 2.3 l2.5 -2.3" stroke="#bdbdbd" stroke-width="0.9" fill="none"/>
<path d="M335.30 284.82 l2.5 2.3 l2.5 -2.3" stroke="#bdbdbd" stroke-width="0.9" fill="none"/>
<path d="M446.80 284.82 l2.5 2.3 l2.5 -2.3" stroke="#bdbdbd" stroke-width="0.9" fill="none"/>
<path transform="translate(0 286.02)" d="M358.14 -3.82 L357.57 -3.97 L357.00 -4.06 L356.43 -4.08 L355.86 -4.05 L355.30 -3.95 L354.77 -3.80 L354.27 -3.59 L353.81 -3.33 L353.39 -3.03 L353.02 -2.69 L352.71 -2.32 L352.45 -1.92 L352.25 -1.50 L352.11 -1.07 L352.04 -0.63 L352.03 -0.19 L352.08 0.25 L352.19 0.67 L352.35 1.06 L352.57 1.44 L352.84 1.78 L353.15 2.09 L353.49 2.36 L353.87 2.59 L354.27 2.77 L354.69 2.91 L355.12 3.00 L355.55 3.04 L355.98 3.04 L356.40 2.99 L356.80 2.90 L357.19 2.76 L357.54 2.59 L357.87 2.38 L358.16 2.14 L358.41 1.88 L358.61 1.60 L358.78 1.30 L358.89 0.99 L358.97 0.67 L358.99 0.36 L358.98 0.04 L358.91 -0.26 L358.81 -0.55 L358.67 -0.82 L358.50 -1.07 L358.29 -1.29 L358.06 -1.49 L357.81 -1.66 L357.54 -1.80 L357.25 -1.90 L356.96 -1.97 L356.67 -2.01 L356.38 -2.02 L356.10 -1.99 L355.83 -1.94 L355.57 -1.85 L355.33 -1.75 L355.12 -1.61 L354.93 -1.47 L354.76 -1.30 L354.63 -1.12 L354.52 -0.93 L354.44 -0.74 L354.40 -0.54 L354.38 -0.35 L354.39 -0.16 L354.43 0.03 L354.49 0.20 L354.57 0.36 L354.68 0.50 L354.80 0.63 L354.93 0.74 L355.08 0.83 L355.23 0.91 L355.39 0.96 L355.55 0.99 L355.71 1.00 L355.86 1.00 L356.00 0.98" stroke="#acacac" stroke-width="1" fill="none"/>
<rect x="0" y="293.16" width="472" height="11.88" fill="#2b2b2b"/>
<rect x="4.5" y="294.10" width="11" height="10" fill="#1b1b1b"/>
<rect x="40" y="294.10" width="10" height="10" fill="#1b1b1b"/>
<path d="M58.5 296.10 L64.3 299.10 L58.5 302.10 Z" fill="#cfcfcf"/>
<rect x="67.7" y="294.50" width="10.2" height="9.2" fill="#e6dc6c"/>
<path d="M108.5 304.30 v-5.5 a4.25 4.25 0 0 1 8.5 0 v5.5 Z" fill="#26170b" stroke="#3d2a18" stroke-width="0.7"/><path d="M111.3 296.80 v2 M113.6 296.80 v2" stroke="#e8c090" stroke-width="1.1"/><circle cx="112.4" cy="301.40" r="1" fill="#fff4e0"/><path d="M108.8 303.70 h7.9" stroke="#6a5a40" stroke-width="0.9"/>
<rect x="213" y="293.60" width="56.5" height="11" fill="#191919"/>
<rect x="274" y="293.60" width="10.5" height="11" fill="#1f1f1f"/>
<rect x="289" y="293.60" width="55" height="11" fill="#191919"/>
<rect x="366" y="293.60" width="90" height="11" fill="#191919"/>
<path d="M260.50 297.90 l2.5 2.3 l2.5 -2.3" stroke="#bdbdbd" stroke-width="0.9" fill="none"/>
<path d="M335.30 297.90 l2.5 2.3 l2.5 -2.3" stroke="#bdbdbd" stroke-width="0.9" fill="none"/>
<path d="M446.80 297.90 l2.5 2.3 l2.5 -2.3" stroke="#bdbdbd" stroke-width="0.9" fill="none"/>
<path transform="translate(0 299.10)" d="M358.14 -3.82 L357.57 -3.97 L357.00 -4.06 L356.43 -4.08 L355.86 -4.05 L355.30 -3.95 L354.77 -3.80 L354.27 -3.59 L353.81 -3.33 L353.39 -3.03 L353.02 -2.69 L352.71 -2.32 L352.45 -1.92 L352.25 -1.50 L352.11 -1.07 L352.04 -0.63 L352.03 -0.19 L352.08 0.25 L352.19 0.67 L352.35 1.06 L352.57 1.44 L352.84 1.78 L353.15 2.09 L353.49 2.36 L353.87 2.59 L354.27 2.77 L354.69 2.91 L355.12 3.00 L355.55 3.04 L355.98 3.04 L356.40 2.99 L356.80 2.90 L357.19 2.76 L357.54 2.59 L357.87 2.38 L358.16 2.14 L358.41 1.88 L358.61 1.60 L358.78 1.30 L358.89 0.99 L358.97 0.67 L358.99 0.36 L358.98 0.04 L358.91 -0.26 L358.81 -0.55 L358.67 -0.82 L358.50 -1.07 L358.29 -1.29 L358.06 -1.49 L357.81 -1.66 L357.54 -1.80 L357.25 -1.90 L356.96 -1.97 L356.67 -2.01 L356.38 -2.02 L356.10 -1.99 L355.83 -1.94 L355.57 -1.85 L355.33 -1.75 L355.12 -1.61 L354.93 -1.47 L354.76 -1.30 L354.63 -1.12 L354.52 -0.93 L354.44 -0.74 L354.40 -0.54 L354.38 -0.35 L354.39 -0.16 L354.43 0.03 L354.49 0.20 L354.57 0.36 L354.68 0.50 L354.80 0.63 L354.93 0.74 L355.08 0.83 L355.23 0.91 L355.39 0.96 L355.55 0.99 L355.71 1.00 L355.86 1.00 L356.00 0.98" stroke="#acacac" stroke-width="1" fill="none"/>
<rect x="0" y="306.24" width="472" height="11.88" fill="#2b2b2b"/>
<path d="M6.6 311.98 Q10.5 307.58 14.4 311.98 Q10.5 316.38 6.6 311.98 Z" fill="#dcdcdc" stroke="#dcdcdc" stroke-width="0.8" stroke-linejoin="round"/><circle cx="10.5" cy="311.98" r="1.5" fill="#2b2b2b"/>
<rect x="29" y="307.18" width="9.8" height="10" fill="#1b1b1b"/>
<rect x="40" y="307.18" width="10" height="10" fill="#1b1b1b"/>
<path d="M58.5 309.18 L64.3 312.18 L58.5 315.18 Z" fill="#cfcfcf"/>
<rect x="67.7" y="307.58" width="10.2" height="9.2" fill="#e6dc6c"/>
<path d="M108.5 317.38 v-5.5 a4.25 4.25 0 0 1 8.5 0 v5.5 Z" fill="#26170b" stroke="#3d2a18" stroke-width="0.7"/><path d="M111.3 309.88 v2 M113.6 309.88 v2" stroke="#e8c090" stroke-width="1.1"/><circle cx="112.4" cy="314.48" r="1" fill="#fff4e0"/><path d="M108.8 316.78 h7.9" stroke="#6a5a40" stroke-width="0.9"/>
<rect x="213" y="306.68" width="56.5" height="11" fill="#191919"/>
<rect x="274" y="306.68" width="10.5" height="11" fill="#1f1f1f"/>
<rect x="289" y="306.68" width="55" height="11" fill="#191919"/>
<rect x="366" y="306.68" width="90" height="11" fill="#191919"/>
<path d="M260.50 310.98 l2.5 2.3 l2.5 -2.3" stroke="#bdbdbd" stroke-width="0.9" fill="none"/>
<path d="M335.30 310.98 l2.5 2.3 l2.5 -2.3" stroke="#bdbdbd" stroke-width="0.9" fill="none"/>
<path d="M446.80 310.98 l2.5 2.3 l2.5 -2.3" stroke="#bdbdbd" stroke-width="0.9" fill="none"/>
<path transform="translate(0 312.18)" d="M358.14 -3.82 L357.57 -3.97 L357.00 -4.06 L356.43 -4.08 L355.86 -4.05 L355.30 -3.95 L354.77 -3.80 L354.27 -3.59 L353.81 -3.33 L353.39 -3.03 L353.02 -2.69 L352.71 -2.32 L352.45 -1.92 L352.25 -1.50 L352.11 -1.07 L352.04 -0.63 L352.03 -0.19 L352.08 0.25 L352.19 0.67 L352.35 1.06 L352.57 1.44 L352.84 1.78 L353.15 2.09 L353.49 2.36 L353.87 2.59 L354.27 2.77 L354.69 2.91 L355.12 3.00 L355.55 3.04 L355.98 3.04 L356.40 2.99 L356.80 2.90 L357.19 2.76 L357.54 2.59 L357.87 2.38 L358.16 2.14 L358.41 1.88 L358.61 1.60 L358.78 1.30 L358.89 0.99 L358.97 0.67 L358.99 0.36 L358.98 0.04 L358.91 -0.26 L358.81 -0.55 L358.67 -0.82 L358.50 -1.07 L358.29 -1.29 L358.06 -1.49 L357.81 -1.66 L357.54 -1.80 L357.25 -1.90 L356.96 -1.97 L356.67 -2.01 L356.38 -2.02 L356.10 -1.99 L355.83 -1.94 L355.57 -1.85 L355.33 -1.75 L355.12 -1.61 L354.93 -1.47 L354.76 -1.30 L354.63 -1.12 L354.52 -0.93 L354.44 -0.74 L354.40 -0.54 L354.38 -0.35 L354.39 -0.16 L354.43 0.03 L354.49 0.20 L354.57 0.36 L354.68 0.50 L354.80 0.63 L354.93 0.74 L355.08 0.83 L355.23 0.91 L355.39 0.96 L355.55 0.99 L355.71 1.00 L355.86 1.00 L356.00 0.98" stroke="#acacac" stroke-width="1" fill="none"/>
<rect x="0" y="319.32" width="472" height="11.88" fill="#2b2b2b"/>
<path d="M6.6 325.06 Q10.5 320.66 14.4 325.06 Q10.5 329.46 6.6 325.06 Z" fill="#dcdcdc" stroke="#dcdcdc" stroke-width="0.8" stroke-linejoin="round"/><circle cx="10.5" cy="325.06" r="1.5" fill="#2b2b2b"/>
<rect x="29" y="320.26" width="9.8" height="10" fill="#1b1b1b"/>
<rect x="40" y="320.26" width="10" height="10" fill="#1b1b1b"/>
<path d="M58.5 322.26 L64.3 325.26 L58.5 328.26 Z" fill="#cfcfcf"/>
<rect x="67.7" y="320.66" width="10.2" height="9.2" fill="#e6dc6c"/>
<path d="M108.5 330.46 v-5.5 a4.25 4.25 0 0 1 8.5 0 v5.5 Z" fill="#26170b" stroke="#3d2a18" stroke-width="0.7"/><path d="M111.3 322.96 v2 M113.6 322.96 v2" stroke="#e8c090" stroke-width="1.1"/><circle cx="112.4" cy="327.56" r="1" fill="#fff4e0"/><path d="M108.8 329.86 h7.9" stroke="#6a5a40" stroke-width="0.9"/>
<rect x="213" y="319.76" width="56.5" height="11" fill="#191919"/>
<rect x="274" y="319.76" width="10.5" height="11" fill="#1f1f1f"/>
<rect x="289" y="319.76" width="55" height="11" fill="#191919"/>
<rect x="366" y="319.76" width="90" height="11" fill="#191919"/>
<path d="M260.50 324.06 l2.5 2.3 l2.5 -2.3" stroke="#bdbdbd" stroke-width="0.9" fill="none"/>
<path d="M335.30 324.06 l2.5 2.3 l2.5 -2.3" stroke="#bdbdbd" stroke-width="0.9" fill="none"/>
<path d="M446.80 324.06 l2.5 2.3 l2.5 -2.3" stroke="#bdbdbd" stroke-width="0.9" fill="none"/>
<path transform="translate(0 325.26)" d="M358.14 -3.82 L357.57 -3.97 L357.00 -4.06 L356.43 -4.08 L355.86 -4.05 L355.30 -3.95 L354.77 -3.80 L354.27 -3.59 L353.81 -3.33 L353.39 -3.03 L353.02 -2.69 L352.71 -2.32 L352.45 -1.92 L352.25 -1.50 L352.11 -1.07 L352.04 -0.63 L352.03 -0.19 L352.08 0.25 L352.19 0.67 L352.35 1.06 L352.57 1.44 L352.84 1.78 L353.15 2.09 L353.49 2.36 L353.87 2.59 L354.27 2.77 L354.69 2.91 L355.12 3.00 L355.55 3.04 L355.98 3.04 L356.40 2.99 L356.80 2.90 L357.19 2.76 L357.54 2.59 L357.87 2.38 L358.16 2.14 L358.41 1.88 L358.61 1.60 L358.78 1.30 L358.89 0.99 L358.97 0.67 L358.99 0.36 L358.98 0.04 L358.91 -0.26 L358.81 -0.55 L358.67 -0.82 L358.50 -1.07 L358.29 -1.29 L358.06 -1.49 L357.81 -1.66 L357.54 -1.80 L357.25 -1.90 L356.96 -1.97 L356.67 -2.01 L356.38 -2.02 L356.10 -1.99 L355.83 -1.94 L355.57 -1.85 L355.33 -1.75 L355.12 -1.61 L354.93 -1.47 L354.76 -1.30 L354.63 -1.12 L354.52 -0.93 L354.44 -0.74 L354.40 -0.54 L354.38 -0.35 L354.39 -0.16 L354.43 0.03 L354.49 0.20 L354.57 0.36 L354.68 0.50 L354.80 0.63 L354.93 0.74 L355.08 0.83 L355.23 0.91 L355.39 0.96 L355.55 0.99 L355.71 1.00 L355.86 1.00 L356.00 0.98" stroke="#acacac" stroke-width="1" fill="none"/>
<rect x="0" y="332.40" width="472" height="11.88" fill="#2b2b2b"/>
<path d="M6.6 338.14 Q10.5 333.74 14.4 338.14 Q10.5 342.54 6.6 338.14 Z" fill="#dcdcdc" stroke="#dcdcdc" stroke-width="0.8" stroke-linejoin="round"/><circle cx="10.5" cy="338.14" r="1.5" fill="#2b2b2b"/>
<rect x="29" y="333.34" width="9.8" height="10" fill="#1b1b1b"/>
<rect x="40" y="333.34" width="10" height="10" fill="#1b1b1b"/>
<path d="M58.5 335.34 L64.3 338.34 L58.5 341.34 Z" fill="#cfcfcf"/>
<rect x="67.7" y="333.74" width="10.2" height="9.2" fill="#e6dc6c"/>
<path d="M108.5 343.54 v-5.5 a4.25 4.25 0 0 1 8.5 0 v5.5 Z" fill="#26170b" stroke="#3d2a18" stroke-width="0.7"/><path d="M111.3 336.04 v2 M113.6 336.04 v2" stroke="#e8c090" stroke-width="1.1"/><circle cx="112.4" cy="340.64" r="1" fill="#fff4e0"/><path d="M108.8 342.94 h7.9" stroke="#6a5a40" stroke-width="0.9"/>
<rect x="213" y="332.84" width="56.5" height="11" fill="#191919"/>
<rect x="274" y="332.84" width="10.5" height="11" fill="#1f1f1f"/>
<rect x="289" y="332.84" width="55" height="11" fill="#191919"/>
<rect x="366" y="332.84" width="90" height="11" fill="#191919"/>
<path d="M260.50 337.14 l2.5 2.3 l2.5 -2.3" stroke="#bdbdbd" stroke-width="0.9" fill="none"/>
<path d="M335.30 337.14 l2.5 2.3 l2.5 -2.3" stroke="#bdbdbd" stroke-width="0.9" fill="none"/>
<path d="M446.80 337.14 l2.5 2.3 l2.5 -2.3" stroke="#bdbdbd" stroke-width="0.9" fill="none"/>
<path transform="translate(0 338.34)" d="M358.14 -3.82 L357.57 -3.97 L357.00 -4.06 L356.43 -4.08 L355.86 -4.05 L355.30 -3.95 L354.77 -3.80 L354.27 -3.59 L353.81 -3.33 L353.39 -3.03 L353.02 -2.69 L352.71 -2.32 L352.45 -1.92 L352.25 -1.50 L352.11 -1.07 L352.04 -0.63 L352.03 -0.19 L352.08 0.25 L352.19 0.67 L352.35 1.06 L352.57 1.44 L352.84 1.78 L353.15 2.09 L353.49 2.36 L353.87 2.59 L354.27 2.77 L354.69 2.91 L355.12 3.00 L355.55 3.04 L355.98 3.04 L356.40 2.99 L356.80 2.90 L357.19 2.76 L357.54 2.59 L357.87 2.38 L358.16 2.14 L358.41 1.88 L358.61 1.60 L358.78 1.30 L358.89 0.99 L358.97 0.67 L358.99 0.36 L358.98 0.04 L358.91 -0.26 L358.81 -0.55 L358.67 -0.82 L358.50 -1.07 L358.29 -1.29 L358.06 -1.49 L357.81 -1.66 L357.54 -1.80 L357.25 -1.90 L356.96 -1.97 L356.67 -2.01 L356.38 -2.02 L356.10 -1.99 L355.83 -1.94 L355.57 -1.85 L355.33 -1.75 L355.12 -1.61 L354.93 -1.47 L354.76 -1.30 L354.63 -1.12 L354.52 -0.93 L354.44 -0.74 L354.40 -0.54 L354.38 -0.35 L354.39 -0.16 L354.43 0.03 L354.49 0.20 L354.57 0.36 L354.68 0.50 L354.80 0.63 L354.93 0.74 L355.08 0.83 L355.23 0.91 L355.39 0.96 L355.55 0.99 L355.71 1.00 L355.86 1.00 L356.00 0.98" stroke="#acacac" stroke-width="1" fill="none"/>
<rect x="0" y="345.48" width="472" height="11.88" fill="#2b2b2b"/>
<path d="M6.6 351.22 Q10.5 346.82 14.4 351.22 Q10.5 355.62 6.6 351.22 Z" fill="#dcdcdc" stroke="#dcdcdc" stroke-width="0.8" stroke-linejoin="round"/><circle cx="10.5" cy="351.22" r="1.5" fill="#2b2b2b"/>
<rect x="29" y="346.42" width="9.8" height="10" fill="#1b1b1b"/>
<rect x="40" y="346.42" width="10" height="10" fill="#1b1b1b"/>
<path d="M58.5 348.42 L64.3 351.42 L58.5 354.42 Z" fill="#cfcfcf"/>
<rect x="67.7" y="346.82" width="10.2" height="9.2" fill="#e6dc6c"/>
<path d="M108.5 356.62 v-5.5 a4.25 4.25 0 0 1 8.5 0 v5.5 Z" fill="#26170b" stroke="#3d2a18" stroke-width="0.7"/><path d="M111.3 349.12 v2 M113.6 349.12 v2" stroke="#e8c090" stroke-width="1.1"/><circle cx="112.4" cy="353.72" r="1" fill="#fff4e0"/><path d="M108.8 356.02 h7.9" stroke="#6a5a40" stroke-width="0.9"/>
<rect x="213" y="345.92" width="56.5" height="11" fill="#191919"/>
<rect x="274" y="345.92" width="10.5" height="11" fill="#1f1f1f"/>
<rect x="289" y="345.92" width="55" height="11" fill="#191919"/>
<rect x="366" y="345.92" width="90" height="11" fill="#191919"/>
<path d="M260.50 350.22 l2.5 2.3 l2.5 -2.3" stroke="#bdbdbd" stroke-width="0.9" fill="none"/>
<path d="M335.30 350.22 l2.5 2.3 l2.5 -2.3" stroke="#bdbdbd" stroke-width="0.9" fill="none"/>
<path d="M446.80 350.22 l2.5 2.3 l2.5 -2.3" stroke="#bdbdbd" stroke-width="0.9" fill="none"/>
<path transform="translate(0 351.42)" d="M358.14 -3.82 L357.57 -3.97 L357.00 -4.06 L356.43 -4.08 L355.86 -4.05 L355.30 -3.95 L354.77 -3.80 L354.27 -3.59 L353.81 -3.33 L353.39 -3.03 L353.02 -2.69 L352.71 -2.32 L352.45 -1.92 L352.25 -1.50 L352.11 -1.07 L352.04 -0.63 L352.03 -0.19 L352.08 0.25 L352.19 0.67 L352.35 1.06 L352.57 1.44 L352.84 1.78 L353.15 2.09 L353.49 2.36 L353.87 2.59 L354.27 2.77 L354.69 2.91 L355.12 3.00 L355.55 3.04 L355.98 3.04 L356.40 2.99 L356.80 2.90 L357.19 2.76 L357.54 2.59 L357.87 2.38 L358.16 2.14 L358.41 1.88 L358.61 1.60 L358.78 1.30 L358.89 0.99 L358.97 0.67 L358.99 0.36 L358.98 0.04 L358.91 -0.26 L358.81 -0.55 L358.67 -0.82 L358.50 -1.07 L358.29 -1.29 L358.06 -1.49 L357.81 -1.66 L357.54 -1.80 L357.25 -1.90 L356.96 -1.97 L356.67 -2.01 L356.38 -2.02 L356.10 -1.99 L355.83 -1.94 L355.57 -1.85 L355.33 -1.75 L355.12 -1.61 L354.93 -1.47 L354.76 -1.30 L354.63 -1.12 L354.52 -0.93 L354.44 -0.74 L354.40 -0.54 L354.38 -0.35 L354.39 -0.16 L354.43 0.03 L354.49 0.20 L354.57 0.36 L354.68 0.50 L354.80 0.63 L354.93 0.74 L355.08 0.83 L355.23 0.91 L355.39 0.96 L355.55 0.99 L355.71 1.00 L355.86 1.00 L356.00 0.98" stroke="#acacac" stroke-width="1" fill="none"/>
<rect x="0" y="358.56" width="472" height="11.88" fill="#2b2b2b"/>
<path d="M6.6 364.30 Q10.5 359.90 14.4 364.30 Q10.5 368.70 6.6 364.30 Z" fill="#dcdcdc" stroke="#dcdcdc" stroke-width="0.8" stroke-linejoin="round"/><circle cx="10.5" cy="364.30" r="1.5" fill="#2b2b2b"/>
<rect x="29" y="359.50" width="9.8" height="10" fill="#1b1b1b"/>
<rect x="40" y="359.50" width="10" height="10" fill="#1b1b1b"/>
<path d="M58.5 361.50 L64.3 364.50 L58.5 367.50 Z" fill="#cfcfcf"/>
<rect x="67.7" y="359.90" width="10.2" height="9.2" fill="#62b45a"/>
<polygon points="112.00,359.90 113.23,363.20 116.76,363.35 114.00,365.55 114.94,368.95 112.00,367.00 109.06,368.95 110.00,365.55 107.24,363.35 110.77,363.20" fill="#d8d8d8"/>
<path d="M121.5 360.70 v7.5 M125 360.70 v7.5 M119.8 362.90 h7 M119.8 366.30 h7" stroke="#9fd6c8" stroke-width="1.1"/>
<rect x="213" y="359.00" width="56.5" height="11" fill="#191919"/>
<rect x="274" y="359.00" width="10.5" height="11" fill="#1f1f1f"/>
<rect x="289" y="359.00" width="55" height="11" fill="#191919"/>
<rect x="366" y="359.00" width="90" height="11" fill="#191919"/>
<path d="M260.50 363.30 l2.5 2.3 l2.5 -2.3" stroke="#bdbdbd" stroke-width="0.9" fill="none"/>
<path d="M335.30 363.30 l2.5 2.3 l2.5 -2.3" stroke="#bdbdbd" stroke-width="0.9" fill="none"/>
<path d="M446.80 363.30 l2.5 2.3 l2.5 -2.3" stroke="#bdbdbd" stroke-width="0.9" fill="none"/>
<path transform="translate(0 364.50)" d="M358.14 -3.82 L357.57 -3.97 L357.00 -4.06 L356.43 -4.08 L355.86 -4.05 L355.30 -3.95 L354.77 -3.80 L354.27 -3.59 L353.81 -3.33 L353.39 -3.03 L353.02 -2.69 L352.71 -2.32 L352.45 -1.92 L352.25 -1.50 L352.11 -1.07 L352.04 -0.63 L352.03 -0.19 L352.08 0.25 L352.19 0.67 L352.35 1.06 L352.57 1.44 L352.84 1.78 L353.15 2.09 L353.49 2.36 L353.87 2.59 L354.27 2.77 L354.69 2.91 L355.12 3.00 L355.55 3.04 L355.98 3.04 L356.40 2.99 L356.80 2.90 L357.19 2.76 L357.54 2.59 L357.87 2.38 L358.16 2.14 L358.41 1.88 L358.61 1.60 L358.78 1.30 L358.89 0.99 L358.97 0.67 L358.99 0.36 L358.98 0.04 L358.91 -0.26 L358.81 -0.55 L358.67 -0.82 L358.50 -1.07 L358.29 -1.29 L358.06 -1.49 L357.81 -1.66 L357.54 -1.80 L357.25 -1.90 L356.96 -1.97 L356.67 -2.01 L356.38 -2.02 L356.10 -1.99 L355.83 -1.94 L355.57 -1.85 L355.33 -1.75 L355.12 -1.61 L354.93 -1.47 L354.76 -1.30 L354.63 -1.12 L354.52 -0.93 L354.44 -0.74 L354.40 -0.54 L354.38 -0.35 L354.39 -0.16 L354.43 0.03 L354.49 0.20 L354.57 0.36 L354.68 0.50 L354.80 0.63 L354.93 0.74 L355.08 0.83 L355.23 0.91 L355.39 0.96 L355.55 0.99 L355.71 1.00 L355.86 1.00 L356.00 0.98" stroke="#acacac" stroke-width="1" fill="none"/>
<rect x="0" y="371.64" width="472" height="11.88" fill="#2b2b2b"/>
<path d="M6.6 377.38 Q10.5 372.98 14.4 377.38 Q10.5 381.78 6.6 377.38 Z" fill="#dcdcdc" stroke="#dcdcdc" stroke-width="0.8" stroke-linejoin="round"/><circle cx="10.5" cy="377.38" r="1.5" fill="#2b2b2b"/>
<rect x="29" y="372.58" width="9.8" height="10" fill="#1b1b1b"/>
<rect x="40" y="372.58" width="10" height="10" fill="#1b1b1b"/>
<path d="M58.5 374.58 L64.3 377.58 L58.5 380.58 Z" fill="#cfcfcf"/>
<rect x="67.7" y="372.98" width="10.2" height="9.2" fill="#62b45a"/>
<polygon points="112.00,372.98 113.23,376.28 116.76,376.43 114.00,378.63 114.94,382.03 112.00,380.08 109.06,382.03 110.00,378.63 107.24,376.43 110.77,376.28" fill="#d8d8d8"/>
<path d="M121.5 373.78 v7.5 M125 373.78 v7.5 M119.8 375.98 h7 M119.8 379.38 h7" stroke="#9fd6c8" stroke-width="1.1"/>
<rect x="213" y="372.08" width="56.5" height="11" fill="#191919"/>
<rect x="274" y="372.08" width="10.5" height="11" fill="#1f1f1f"/>
<rect x="289" y="372.08" width="55" height="11" fill="#191919"/>
<rect x="366" y="372.08" width="90" height="11" fill="#191919"/>
<path d="M260.50 376.38 l2.5 2.3 l2.5 -2.3" stroke="#bdbdbd" stroke-width="0.9" fill="none"/>
<path d="M335.30 376.38 l2.5 2.3 l2.5 -2.3" stroke="#bdbdbd" stroke-width="0.9" fill="none"/>
<path d="M446.80 376.38 l2.5 2.3 l2.5 -2.3" stroke="#bdbdbd" stroke-width="0.9" fill="none"/>
<path transform="translate(0 377.58)" d="M358.14 -3.82 L357.57 -3.97 L357.00 -4.06 L356.43 -4.08 L355.86 -4.05 L355.30 -3.95 L354.77 -3.80 L354.27 -3.59 L353.81 -3.33 L353.39 -3.03 L353.02 -2.69 L352.71 -2.32 L352.45 -1.92 L352.25 -1.50 L352.11 -1.07 L352.04 -0.63 L352.03 -0.19 L352.08 0.25 L352.19 0.67 L352.35 1.06 L352.57 1.44 L352.84 1.78 L353.15 2.09 L353.49 2.36 L353.87 2.59 L354.27 2.77 L354.69 2.91 L355.12 3.00 L355.55 3.04 L355.98 3.04 L356.40 2.99 L356.80 2.90 L357.19 2.76 L357.54 2.59 L357.87 2.38 L358.16 2.14 L358.41 1.88 L358.61 1.60 L358.78 1.30 L358.89 0.99 L358.97 0.67 L358.99 0.36 L358.98 0.04 L358.91 -0.26 L358.81 -0.55 L358.67 -0.82 L358.50 -1.07 L358.29 -1.29 L358.06 -1.49 L357.81 -1.66 L357.54 -1.80 L357.25 -1.90 L356.96 -1.97 L356.67 -2.01 L356.38 -2.02 L356.10 -1.99 L355.83 -1.94 L355.57 -1.85 L355.33 -1.75 L355.12 -1.61 L354.93 -1.47 L354.76 -1.30 L354.63 -1.12 L354.52 -0.93 L354.44 -0.74 L354.40 -0.54 L354.38 -0.35 L354.39 -0.16 L354.43 0.03 L354.49 0.20 L354.57 0.36 L354.68 0.50 L354.80 0.63 L354.93 0.74 L355.08 0.83 L355.23 0.91 L355.39 0.96 L355.55 0.99 L355.71 1.00 L355.86 1.00 L356.00 0.98" stroke="#acacac" stroke-width="1" fill="none"/>
<rect x="0" y="384.72" width="472" height="11.88" fill="#2b2b2b"/>
<path d="M6.6 390.46 Q10.5 386.06 14.4 390.46 Q10.5 394.86 6.6 390.46 Z" fill="#dcdcdc" stroke="#dcdcdc" stroke-width="0.8" stroke-linejoin="round"/><circle cx="10.5" cy="390.46" r="1.5" fill="#2b2b2b"/>
<rect x="29" y="385.66" width="9.8" height="10" fill="#1b1b1b"/>
<rect x="40" y="385.66" width="10" height="10" fill="#1b1b1b"/>
<path d="M58.5 387.66 L64.3 390.66 L58.5 393.66 Z" fill="#cfcfcf"/>
<rect x="67.7" y="386.06" width="10.2" height="9.2" fill="#62b45a"/>
<polygon points="112.00,386.06 113.23,389.36 116.76,389.51 114.00,391.71 114.94,395.11 112.00,393.16 109.06,395.11 110.00,391.71 107.24,389.51 110.77,389.36" fill="#d8d8d8"/>
<path d="M121.5 386.86 v7.5 M125 386.86 v7.5 M119.8 389.06 h7 M119.8 392.46 h7" stroke="#9fd6c8" stroke-width="1.1"/>
<rect x="213" y="385.16" width="56.5" height="11" fill="#191919"/>
<rect x="274" y="385.16" width="10.5" height="11" fill="#1f1f1f"/>
<rect x="289" y="385.16" width="55" height="11" fill="#191919"/>
<rect x="366" y="385.16" width="90" height="11" fill="#191919"/>
<path d="M260.50 389.46 l2.5 2.3 l2.5 -2.3" stroke="#bdbdbd" stroke-width="0.9" fill="none"/>
<path d="M335.30 389.46 l2.5 2.3 l2.5 -2.3" stroke="#bdbdbd" stroke-width="0.9" fill="none"/>
<path d="M446.80 389.46 l2.5 2.3 l2.5 -2.3" stroke="#bdbdbd" stroke-width="0.9" fill="none"/>
<path transform="translate(0 390.66)" d="M358.14 -3.82 L357.57 -3.97 L357.00 -4.06 L356.43 -4.08 L355.86 -4.05 L355.30 -3.95 L354.77 -3.80 L354.27 -3.59 L353.81 -3.33 L353.39 -3.03 L353.02 -2.69 L352.71 -2.32 L352.45 -1.92 L352.25 -1.50 L352.11 -1.07 L352.04 -0.63 L352.03 -0.19 L352.08 0.25 L352.19 0.67 L352.35 1.06 L352.57 1.44 L352.84 1.78 L353.15 2.09 L353.49 2.36 L353.87 2.59 L354.27 2.77 L354.69 2.91 L355.12 3.00 L355.55 3.04 L355.98 3.04 L356.40 2.99 L356.80 2.90 L357.19 2.76 L357.54 2.59 L357.87 2.38 L358.16 2.14 L358.41 1.88 L358.61 1.60 L358.78 1.30 L358.89 0.99 L358.97 0.67 L358.99 0.36 L358.98 0.04 L358.91 -0.26 L358.81 -0.55 L358.67 -0.82 L358.50 -1.07 L358.29 -1.29 L358.06 -1.49 L357.81 -1.66 L357.54 -1.80 L357.25 -1.90 L356.96 -1.97 L356.67 -2.01 L356.38 -2.02 L356.10 -1.99 L355.83 -1.94 L355.57 -1.85 L355.33 -1.75 L355.12 -1.61 L354.93 -1.47 L354.76 -1.30 L354.63 -1.12 L354.52 -0.93 L354.44 -0.74 L354.40 -0.54 L354.38 -0.35 L354.39 -0.16 L354.43 0.03 L354.49 0.20 L354.57 0.36 L354.68 0.50 L354.80 0.63 L354.93 0.74 L355.08 0.83 L355.23 0.91 L355.39 0.96 L355.55 0.99 L355.71 1.00 L355.86 1.00 L356.00 0.98" stroke="#acacac" stroke-width="1" fill="none"/>
<rect x="0" y="397.80" width="472" height="11.88" fill="#2b2b2b"/>
<path d="M6.6 403.54 Q10.5 399.14 14.4 403.54 Q10.5 407.94 6.6 403.54 Z" fill="#dcdcdc" stroke="#dcdcdc" stroke-width="0.8" stroke-linejoin="round"/><circle cx="10.5" cy="403.54" r="1.5" fill="#2b2b2b"/>
<rect x="29" y="398.74" width="9.8" height="10" fill="#1b1b1b"/>
<rect x="40" y="398.74" width="10" height="10" fill="#1b1b1b"/>
<path d="M58.5 400.74 L64.3 403.74 L58.5 406.74 Z" fill="#cfcfcf"/>
<rect x="67.7" y="399.14" width="10.2" height="9.2" fill="#62b45a"/>
<polygon points="112.00,399.14 113.23,402.44 116.76,402.59 114.00,404.79 114.94,408.19 112.00,406.24 109.06,408.19 110.00,404.79 107.24,402.59 110.77,402.44" fill="#d8d8d8"/>
<path d="M121.5 399.94 v7.5 M125 399.94 v7.5 M119.8 402.14 h7 M119.8 405.54 h7" stroke="#9fd6c8" stroke-width="1.1"/>
<rect x="213" y="398.24" width="56.5" height="11" fill="#191919"/>
<rect x="274" y="398.24" width="10.5" height="11" fill="#1f1f1f"/>
<rect x="289" y="398.24" width="55" height="11" fill="#191919"/>
<rect x="366" y="398.24" width="90" height="11" fill="#191919"/>
<path d="M260.50 402.54 l2.5 2.3 l2.5 -2.3" stroke="#bdbdbd" stroke-width="0.9" fill="none"/>
<path d="M335.30 402.54 l2.5 2.3 l2.5 -2.3" stroke="#bdbdbd" stroke-width="0.9" fill="none"/>
<path d="M446.80 402.54 l2.5 2.3 l2.5 -2.3" stroke="#bdbdbd" stroke-width="0.9" fill="none"/>
<path transform="translate(0 403.74)" d="M358.14 -3.82 L357.57 -3.97 L357.00 -4.06 L356.43 -4.08 L355.86 -4.05 L355.30 -3.95 L354.77 -3.80 L354.27 -3.59 L353.81 -3.33 L353.39 -3.03 L353.02 -2.69 L352.71 -2.32 L352.45 -1.92 L352.25 -1.50 L352.11 -1.07 L352.04 -0.63 L352.03 -0.19 L352.08 0.25 L352.19 0.67 L352.35 1.06 L352.57 1.44 L352.84 1.78 L353.15 2.09 L353.49 2.36 L353.87 2.59 L354.27 2.77 L354.69 2.91 L355.12 3.00 L355.55 3.04 L355.98 3.04 L356.40 2.99 L356.80 2.90 L357.19 2.76 L357.54 2.59 L357.87 2.38 L358.16 2.14 L358.41 1.88 L358.61 1.60 L358.78 1.30 L358.89 0.99 L358.97 0.67 L358.99 0.36 L358.98 0.04 L358.91 -0.26 L358.81 -0.55 L358.67 -0.82 L358.50 -1.07 L358.29 -1.29 L358.06 -1.49 L357.81 -1.66 L357.54 -1.80 L357.25 -1.90 L356.96 -1.97 L356.67 -2.01 L356.38 -2.02 L356.10 -1.99 L355.83 -1.94 L355.57 -1.85 L355.33 -1.75 L355.12 -1.61 L354.93 -1.47 L354.76 -1.30 L354.63 -1.12 L354.52 -0.93 L354.44 -0.74 L354.40 -0.54 L354.38 -0.35 L354.39 -0.16 L354.43 0.03 L354.49 0.20 L354.57 0.36 L354.68 0.50 L354.80 0.63 L354.93 0.74 L355.08 0.83 L355.23 0.91 L355.39 0.96 L355.55 0.99 L355.71 1.00 L355.86 1.00 L356.00 0.98" stroke="#acacac" stroke-width="1" fill="none"/>
<rect x="0" y="410.88" width="472" height="11.88" fill="#2b2b2b"/>
<path d="M6.6 416.62 Q10.5 412.22 14.4 416.62 Q10.5 421.02 6.6 416.62 Z" fill="#dcdcdc" stroke="#dcdcdc" stroke-width="0.8" stroke-linejoin="round"/><circle cx="10.5" cy="416.62" r="1.5" fill="#2b2b2b"/>
<rect x="29" y="411.82" width="9.8" height="10" fill="#1b1b1b"/>
<rect x="40" y="411.82" width="10" height="10" fill="#1b1b1b"/>
<path d="M58.5 413.82 L64.3 416.82 L58.5 419.82 Z" fill="#cfcfcf"/>
<rect x="67.7" y="412.22" width="10.2" height="9.2" fill="#62b45a"/>
<polygon points="112.00,412.22 113.23,415.52 116.76,415.67 114.00,417.87 114.94,421.27 112.00,419.32 109.06,421.27 110.00,417.87 107.24,415.67 110.77,415.52" fill="#d8d8d8"/>
<path d="M121.5 413.02 v7.5 M125 413.02 v7.5 M119.8 415.22 h7 M119.8 418.62 h7" stroke="#9fd6c8" stroke-width="1.1"/>
<rect x="213" y="411.32" width="56.5" height="11" fill="#191919"/>
<rect x="274" y="411.32" width="10.5" height="11" fill="#1f1f1f"/>
<rect x="289" y="411.32" width="55" height="11" fill="#191919"/>
<rect x="366" y="411.32" width="90" height="11" fill="#191919"/>
<path d="M260.50 415.62 l2.5 2.3 l2.5 -2.3" stroke="#bdbdbd" stroke-width="0.9" fill="none"/>
<path d="M335.30 415.62 l2.5 2.3 l2.5 -2.3" stroke="#bdbdbd" stroke-width="0.9" fill="none"/>
<path d="M446.80 415.62 l2.5 2.3 l2.5 -2.3" stroke="#bdbdbd" stroke-width="0.9" fill="none"/>
<path transform="translate(0 416.82)" d="M358.14 -3.82 L357.57 -3.97 L357.00 -4.06 L356.43 -4.08 L355.86 -4.05 L355.30 -3.95 L354.77 -3.80 L354.27 -3.59 L353.81 -3.33 L353.39 -3.03 L353.02 -2.69 L352.71 -2.32 L352.45 -1.92 L352.25 -1.50 L352.11 -1.07 L352.04 -0.63 L352.03 -0.19 L352.08 0.25 L352.19 0.67 L352.35 1.06 L352.57 1.44 L352.84 1.78 L353.15 2.09 L353.49 2.36 L353.87 2.59 L354.27 2.77 L354.69 2.91 L355.12 3.00 L355.55 3.04 L355.98 3.04 L356.40 2.99 L356.80 2.90 L357.19 2.76 L357.54 2.59 L357.87 2.38 L358.16 2.14 L358.41 1.88 L358.61 1.60 L358.78 1.30 L358.89 0.99 L358.97 0.67 L358.99 0.36 L358.98 0.04 L358.91 -0.26 L358.81 -0.55 L358.67 -0.82 L358.50 -1.07 L358.29 -1.29 L358.06 -1.49 L357.81 -1.66 L357.54 -1.80 L357.25 -1.90 L356.96 -1.97 L356.67 -2.01 L356.38 -2.02 L356.10 -1.99 L355.83 -1.94 L355.57 -1.85 L355.33 -1.75 L355.12 -1.61 L354.93 -1.47 L354.76 -1.30 L354.63 -1.12 L354.52 -0.93 L354.44 -0.74 L354.40 -0.54 L354.38 -0.35 L354.39 -0.16 L354.43 0.03 L354.49 0.20 L354.57 0.36 L354.68 0.50 L354.80 0.63 L354.93 0.74 L355.08 0.83 L355.23 0.91 L355.39 0.96 L355.55 0.99 L355.71 1.00 L355.86 1.00 L356.00 0.98" stroke="#acacac" stroke-width="1" fill="none"/>
<rect x="0" y="423.96" width="472" height="11.88" fill="#2b2b2b"/>
<path d="M6.6 429.70 Q10.5 425.30 14.4 429.70 Q10.5 434.10 6.6 429.70 Z" fill="#dcdcdc" stroke="#dcdcdc" stroke-width="0.8" stroke-linejoin="round"/><circle cx="10.5" cy="429.70" r="1.5" fill="#2b2b2b"/>
<rect x="29" y="424.90" width="9.8" height="10" fill="#1b1b1b"/>
<rect x="40" y="424.90" width="10" height="10" fill="#1b1b1b"/>
<path d="M58.5 426.90 L64.3 429.90 L58.5 432.90 Z" fill="#cfcfcf"/>
<rect x="67.7" y="425.30" width="10.2" height="9.2" fill="#62b45a"/>
<polygon points="112.00,425.30 113.23,428.60 116.76,428.75 114.00,430.95 114.94,434.35 112.00,432.40 109.06,434.35 110.00,430.95 107.24,428.75 110.77,428.60" fill="#d8d8d8"/>
<path d="M121.5 426.10 v7.5 M125 426.10 v7.5 M119.8 428.30 h7 M119.8 431.70 h7" stroke="#9fd6c8" stroke-width="1.1"/>
<rect x="213" y="424.40" width="56.5" height="11" fill="#191919"/>
<rect x="274" y="424.40" width="10.5" height="11" fill="#1f1f1f"/>
<rect x="289" y="424.40" width="55" height="11" fill="#191919"/>
<rect x="366" y="424.40" width="90" height="11" fill="#191919"/>
<path d="M260.50 428.70 l2.5 2.3 l2.5 -2.3" stroke="#bdbdbd" stroke-width="0.9" fill="none"/>
<path d="M335.30 428.70 l2.5 2.3 l2.5 -2.3" stroke="#bdbdbd" stroke-width="0.9" fill="none"/>
<path d="M446.80 428.70 l2.5 2.3 l2.5 -2.3" stroke="#bdbdbd" stroke-width="0.9" fill="none"/>
<path transform="translate(0 429.90)" d="M358.14 -3.82 L357.57 -3.97 L357.00 -4.06 L356.43 -4.08 L355.86 -4.05 L355.30 -3.95 L354.77 -3.80 L354.27 -3.59 L353.81 -3.33 L353.39 -3.03 L353.02 -2.69 L352.71 -2.32 L352.45 -1.92 L352.25 -1.50 L352.11 -1.07 L352.04 -0.63 L352.03 -0.19 L352.08 0.25 L352.19 0.67 L352.35 1.06 L352.57 1.44 L352.84 1.78 L353.15 2.09 L353.49 2.36 L353.87 2.59 L354.27 2.77 L354.69 2.91 L355.12 3.00 L355.55 3.04 L355.98 3.04 L356.40 2.99 L356.80 2.90 L357.19 2.76 L357.54 2.59 L357.87 2.38 L358.16 2.14 L358.41 1.88 L358.61 1.60 L358.78 1.30 L358.89 0.99 L358.97 0.67 L358.99 0.36 L358.98 0.04 L358.91 -0.26 L358.81 -0.55 L358.67 -0.82 L358.50 -1.07 L358.29 -1.29 L358.06 -1.49 L357.81 -1.66 L357.54 -1.80 L357.25 -1.90 L356.96 -1.97 L356.67 -2.01 L356.38 -2.02 L356.10 -1.99 L355.83 -1.94 L355.57 -1.85 L355.33 -1.75 L355.12 -1.61 L354.93 -1.47 L354.76 -1.30 L354.63 -1.12 L354.52 -0.93 L354.44 -0.74 L354.40 -0.54 L354.38 -0.35 L354.39 -0.16 L354.43 0.03 L354.49 0.20 L354.57 0.36 L354.68 0.50 L354.80 0.63 L354.93 0.74 L355.08 0.83 L355.23 0.91 L355.39 0.96 L355.55 0.99 L355.71 1.00 L355.86 1.00 L356.00 0.98" stroke="#acacac" stroke-width="1" fill="none"/>
<rect x="0" y="437.04" width="472" height="11.88" fill="#2b2b2b"/>
<rect x="4.5" y="437.98" width="11" height="10" fill="#1b1b1b"/>
<rect x="40" y="437.98" width="10" height="10" fill="#1b1b1b"/>
<path d="M58.5 439.98 L64.3 442.98 L58.5 445.98 Z" fill="#cfcfcf"/>
<rect x="67.7" y="438.38" width="10.2" height="9.2" fill="#62b45a"/>
<path d="M108.5 448.18 v-5.5 a4.25 4.25 0 0 1 8.5 0 v5.5 Z" fill="#26170b" stroke="#3d2a18" stroke-width="0.7"/><path d="M111.3 440.68 v2 M113.6 440.68 v2" stroke="#e8c090" stroke-width="1.1"/><circle cx="112.4" cy="445.28" r="1" fill="#fff4e0"/><path d="M108.8 447.58 h7.9" stroke="#6a5a40" stroke-width="0.9"/>
<rect x="213" y="437.48" width="56.5" height="11" fill="#191919"/>
<rect x="274" y="437.48" width="10.5" height="11" fill="#1f1f1f"/>
<rect x="289" y="437.48" width="55" height="11" fill="#191919"/>
<rect x="366" y="437.48" width="90" height="11" fill="#191919"/>
<path d="M260.50 441.78 l2.5 2.3 l2.5 -2.3" stroke="#bdbdbd" stroke-width="0.9" fill="none"/>
<path d="M335.30 441.78 l2.5 2.3 l2.5 -2.3" stroke="#bdbdbd" stroke-width="0.9" fill="none"/>
<path d="M446.80 441.78 l2.5 2.3 l2.5 -2.3" stroke="#bdbdbd" stroke-width="0.9" fill="none"/>
<path transform="translate(0 442.98)" d="M358.14 -3.82 L357.57 -3.97 L357.00 -4.06 L356.43 -4.08 L355.86 -4.05 L355.30 -3.95 L354.77 -3.80 L354.27 -3.59 L353.81 -3.33 L353.39 -3.03 L353.02 -2.69 L352.71 -2.32 L352.45 -1.92 L352.25 -1.50 L352.11 -1.07 L352.04 -0.63 L352.03 -0.19 L352.08 0.25 L352.19 0.67 L352.35 1.06 L352.57 1.44 L352.84 1.78 L353.15 2.09 L353.49 2.36 L353.87 2.59 L354.27 2.77 L354.69 2.91 L355.12 3.00 L355.55 3.04 L355.98 3.04 L356.40 2.99 L356.80 2.90 L357.19 2.76 L357.54 2.59 L357.87 2.38 L358.16 2.14 L358.41 1.88 L358.61 1.60 L358.78 1.30 L358.89 0.99 L358.97 0.67 L358.99 0.36 L358.98 0.04 L358.91 -0.26 L358.81 -0.55 L358.67 -0.82 L358.50 -1.07 L358.29 -1.29 L358.06 -1.49 L357.81 -1.66 L357.54 -1.80 L357.25 -1.90 L356.96 -1.97 L356.67 -2.01 L356.38 -2.02 L356.10 -1.99 L355.83 -1.94 L355.57 -1.85 L355.33 -1.75 L355.12 -1.61 L354.93 -1.47 L354.76 -1.30 L354.63 -1.12 L354.52 -0.93 L354.44 -0.74 L354.40 -0.54 L354.38 -0.35 L354.39 -0.16 L354.43 0.03 L354.49 0.20 L354.57 0.36 L354.68 0.50 L354.80 0.63 L354.93 0.74 L355.08 0.83 L355.23 0.91 L355.39 0.96 L355.55 0.99 L355.71 1.00 L355.86 1.00 L356.00 0.98" stroke="#acacac" stroke-width="1" fill="none"/>
<rect x="0" y="450.12" width="472" height="11.88" fill="#2b2b2b"/>
<rect x="4.5" y="451.06" width="11" height="10" fill="#1b1b1b"/>
<rect x="40" y="451.06" width="10" height="10" fill="#1b1b1b"/>
<path d="M58.5 453.06 L64.3 456.06 L58.5 459.06 Z" fill="#cfcfcf"/>
<rect x="67.7" y="451.46" width="10.2" height="9.2" fill="#62b45a"/>
<path d="M108.5 461.26 v-5.5 a4.25 4.25 0 0 1 8.5 0 v5.5 Z" fill="#26170b" stroke="#3d2a18" stroke-width="0.7"/><path d="M111.3 453.76 v2 M113.6 453.76 v2" stroke="#e8c090" stroke-width="1.1"/><circle cx="112.4" cy="458.36" r="1" fill="#fff4e0"/><path d="M108.8 460.66 h7.9" stroke="#6a5a40" stroke-width="0.9"/>
<rect x="213" y="450.56" width="56.5" height="11" fill="#191919"/>
<rect x="274" y="450.56" width="10.5" height="11" fill="#1f1f1f"/>
<rect x="289" y="450.56" width="55" height="11" fill="#191919"/>
<rect x="366" y="450.56" width="90" height="11" fill="#191919"/>
<path d="M260.50 454.86 l2.5 2.3 l2.5 -2.3" stroke="#bdbdbd" stroke-width="0.9" fill="none"/>
<path d="M335.30 454.86 l2.5 2.3 l2.5 -2.3" stroke="#bdbdbd" stroke-width="0.9" fill="none"/>
<path d="M446.80 454.86 l2.5 2.3 l2.5 -2.3" stroke="#bdbdbd" stroke-width="0.9" fill="none"/>
<path transform="translate(0 456.06)" d="M358.14 -3.82 L357.57 -3.97 L357.00 -4.06 L356.43 -4.08 L355.86 -4.05 L355.30 -3.95 L354.77 -3.80 L354.27 -3.59 L353.81 -3.33 L353.39 -3.03 L353.02 -2.69 L352.71 -2.32 L352.45 -1.92 L352.25 -1.50 L352.11 -1.07 L352.04 -0.63 L352.03 -0.19 L352.08 0.25 L352.19 0.67 L352.35 1.06 L352.57 1.44 L352.84 1.78 L353.15 2.09 L353.49 2.36 L353.87 2.59 L354.27 2.77 L354.69 2.91 L355.12 3.00 L355.55 3.04 L355.98 3.04 L356.40 2.99 L356.80 2.90 L357.19 2.76 L357.54 2.59 L357.87 2.38 L358.16 2.14 L358.41 1.88 L358.61 1.60 L358.78 1.30 L358.89 0.99 L358.97 0.67 L358.99 0.36 L358.98 0.04 L358.91 -0.26 L358.81 -0.55 L358.67 -0.82 L358.50 -1.07 L358.29 -1.29 L358.06 -1.49 L357.81 -1.66 L357.54 -1.80 L357.25 -1.90 L356.96 -1.97 L356.67 -2.01 L356.38 -2.02 L356.10 -1.99 L355.83 -1.94 L355.57 -1.85 L355.33 -1.75 L355.12 -1.61 L354.93 -1.47 L354.76 -1.30 L354.63 -1.12 L354.52 -0.93 L354.44 -0.74 L354.40 -0.54 L354.38 -0.35 L354.39 -0.16 L354.43 0.03 L354.49 0.20 L354.57 0.36 L354.68 0.50 L354.80 0.63 L354.93 0.74 L355.08 0.83 L355.23 0.91 L355.39 0.96 L355.55 0.99 L355.71 1.00 L355.86 1.00 L356.00 0.98" stroke="#acacac" stroke-width="1" fill="none"/>
<rect x="0" y="463.20" width="472" height="11.88" fill="#2b2b2b"/>
<rect x="4.5" y="464.14" width="11" height="10" fill="#1b1b1b"/>
<rect x="40" y="464.14" width="10" height="10" fill="#1b1b1b"/>
<path d="M58.5 466.14 L64.3 469.14 L58.5 472.14 Z" fill="#cfcfcf"/>
<rect x="67.7" y="464.54" width="10.2" height="9.2" fill="#62b45a"/>
<path d="M108.5 474.34 v-5.5 a4.25 4.25 0 0 1 8.5 0 v5.5 Z" fill="#26170b" stroke="#3d2a18" stroke-width="0.7"/><path d="M111.3 466.84 v2 M113.6 466.84 v2" stroke="#e8c090" stroke-width="1.1"/><circle cx="112.4" cy="471.44" r="1" fill="#fff4e0"/><path d="M108.8 473.74 h7.9" stroke="#6a5a40" stroke-width="0.9"/>
<rect x="213" y="463.64" width="56.5" height="11" fill="#191919"/>
<rect x="274" y="463.64" width="10.5" height="11" fill="#1f1f1f"/>
<rect x="289" y="463.64" width="55" height="11" fill="#191919"/>
<rect x="366" y="463.64" width="90" height="11" fill="#191919"/>
<path d="M260.50 467.94 l2.5 2.3 l2.5 -2.3" stroke="#bdbdbd" stroke-width="0.9" fill="none"/>
<path d="M335.30 467.94 l2.5 2.3 l2.5 -2.3" stroke="#bdbdbd" stroke-width="0.9" fill="none"/>
<path d="M446.80 467.94 l2.5 2.3 l2.5 -2.3" stroke="#bdbdbd" stroke-width="0.9" fill="none"/>
<path transform="translate(0 469.14)" d="M358.14 -3.82 L357.57 -3.97 L357.00 -4.06 L356.43 -4.08 L355.86 -4.05 L355.30 -3.95 L354.77 -3.80 L354.27 -3.59 L353.81 -3.33 L353.39 -3.03 L353.02 -2.69 L352.71 -2.32 L352.45 -1.92 L352.25 -1.50 L352.11 -1.07 L352.04 -0.63 L352.03 -0.19 L352.08 0.25 L352.19 0.67 L352.35 1.06 L352.57 1.44 L352.84 1.78 L353.15 2.09 L353.49 2.36 L353.87 2.59 L354.27 2.77 L354.69 2.91 L355.12 3.00 L355.55 3.04 L355.98 3.04 L356.40 2.99 L356.80 2.90 L357.19 2.76 L357.54 2.59 L357.87 2.38 L358.16 2.14 L358.41 1.88 L358.61 1.60 L358.78 1.30 L358.89 0.99 L358.97 0.67 L358.99 0.36 L358.98 0.04 L358.91 -0.26 L358.81 -0.55 L358.67 -0.82 L358.50 -1.07 L358.29 -1.29 L358.06 -1.49 L357.81 -1.66 L357.54 -1.80 L357.25 -1.90 L356.96 -1.97 L356.67 -2.01 L356.38 -2.02 L356.10 -1.99 L355.83 -1.94 L355.57 -1.85 L355.33 -1.75 L355.12 -1.61 L354.93 -1.47 L354.76 -1.30 L354.63 -1.12 L354.52 -0.93 L354.44 -0.74 L354.40 -0.54 L354.38 -0.35 L354.39 -0.16 L354.43 0.03 L354.49 0.20 L354.57 0.36 L354.68 0.50 L354.80 0.63 L354.93 0.74 L355.08 0.83 L355.23 0.91 L355.39 0.96 L355.55 0.99 L355.71 1.00 L355.86 1.00 L356.00 0.98" stroke="#acacac" stroke-width="1" fill="none"/>
<rect x="0" y="476.28" width="472" height="11.88" fill="#2b2b2b"/>
<rect x="4.5" y="477.22" width="11" height="10" fill="#1b1b1b"/>
<rect x="40" y="477.22" width="10" height="10" fill="#1b1b1b"/>
<path d="M58.5 479.22 L64.3 482.22 L58.5 485.22 Z" fill="#cfcfcf"/>
<rect x="67.7" y="477.62" width="10.2" height="9.2" fill="#62b45a"/>
<path d="M108.5 487.42 v-5.5 a4.25 4.25 0 0 1 8.5 0 v5.5 Z" fill="#26170b" stroke="#3d2a18" stroke-width="0.7"/><path d="M111.3 479.92 v2 M113.6 479.92 v2" stroke="#e8c090" stroke-width="1.1"/><circle cx="112.4" cy="484.52" r="1" fill="#fff4e0"/><path d="M108.8 486.82 h7.9" stroke="#6a5a40" stroke-width="0.9"/>
<rect x="213" y="476.72" width="56.5" height="11" fill="#191919"/>
<rect x="274" y="476.72" width="10.5" height="11" fill="#1f1f1f"/>
<rect x="289" y="476.72" width="55" height="11" fill="#191919"/>
<rect x="366" y="476.72" width="90" height="11" fill="#191919"/>
<path d="M260.50 481.02 l2.5 2.3 l2.5 -2.3" stroke="#bdbdbd" stroke-width="0.9" fill="none"/>
<path d="M335.30 481.02 l2.5 2.3 l2.5 -2.3" stroke="#bdbdbd" stroke-width="0.9" fill="none"/>
<path d="M446.80 481.02 l2.5 2.3 l2.5 -2.3" stroke="#bdbdbd" stroke-width="0.9" fill="none"/>
<path transform="translate(0 482.22)" d="M358.14 -3.82 L357.57 -3.97 L357.00 -4.06 L356.43 -4.08 L355.86 -4.05 L355.30 -3.95 L354.77 -3.80 L354.27 -3.59 L353.81 -3.33 L353.39 -3.03 L353.02 -2.69 L352.71 -2.32 L352.45 -1.92 L352.25 -1.50 L352.11 -1.07 L352.04 -0.63 L352.03 -0.19 L352.08 0.25 L352.19 0.67 L352.35 1.06 L352.57 1.44 L352.84 1.78 L353.15 2.09 L353.49 2.36 L353.87 2.59 L354.27 2.77 L354.69 2.91 L355.12 3.00 L355.55 3.04 L355.98 3.04 L356.40 2.99 L356.80 2.90 L357.19 2.76 L357.54 2.59 L357.87 2.38 L358.16 2.14 L358.41 1.88 L358.61 1.60 L358.78 1.30 L358.89 0.99 L358.97 0.67 L358.99 0.36 L358.98 0.04 L358.91 -0.26 L358.81 -0.55 L358.67 -0.82 L358.50 -1.07 L358.29 -1.29 L358.06 -1.49 L357.81 -1.66 L357.54 -1.80 L357.25 -1.90 L356.96 -1.97 L356.67 -2.01 L356.38 -2.02 L356.10 -1.99 L355.83 -1.94 L355.57 -1.85 L355.33 -1.75 L355.12 -1.61 L354.93 -1.47 L354.76 -1.30 L354.63 -1.12 L354.52 -0.93 L354.44 -0.74 L354.40 -0.54 L354.38 -0.35 L354.39 -0.16 L354.43 0.03 L354.49 0.20 L354.57 0.36 L354.68 0.50 L354.80 0.63 L354.93 0.74 L355.08 0.83 L355.23 0.91 L355.39 0.96 L355.55 0.99 L355.71 1.00 L355.86 1.00 L356.00 0.98" stroke="#acacac" stroke-width="1" fill="none"/>
<rect x="0" y="489.36" width="472" height="11.88" fill="#2b2b2b"/>
<path d="M6.6 495.10 Q10.5 490.70 14.4 495.10 Q10.5 499.50 6.6 495.10 Z" fill="#dcdcdc" stroke="#dcdcdc" stroke-width="0.8" stroke-linejoin="round"/><circle cx="10.5" cy="495.10" r="1.5" fill="#2b2b2b"/>
<rect x="29" y="490.30" width="9.8" height="10" fill="#1b1b1b"/>
<rect x="40" y="490.30" width="10" height="10" fill="#1b1b1b"/>
<path d="M58.5 492.30 L64.3 495.30 L58.5 498.30 Z" fill="#cfcfcf"/>
<rect x="67.7" y="490.70" width="10.2" height="9.2" fill="#62b45a"/>
<path d="M108.5 500.50 v-5.5 a4.25 4.25 0 0 1 8.5 0 v5.5 Z" fill="#26170b" stroke="#3d2a18" stroke-width="0.7"/><path d="M111.3 493.00 v2 M113.6 493.00 v2" stroke="#e8c090" stroke-width="1.1"/><circle cx="112.4" cy="497.60" r="1" fill="#fff4e0"/><path d="M108.8 499.90 h7.9" stroke="#6a5a40" stroke-width="0.9"/>
<rect x="213" y="489.80" width="56.5" height="11" fill="#191919"/>
<rect x="274" y="489.80" width="10.5" height="11" fill="#1f1f1f"/>
<rect x="289" y="489.80" width="55" height="11" fill="#191919"/>
<rect x="366" y="489.80" width="90" height="11" fill="#191919"/>
<path d="M260.50 494.10 l2.5 2.3 l2.5 -2.3" stroke="#bdbdbd" stroke-width="0.9" fill="none"/>
<path d="M335.30 494.10 l2.5 2.3 l2.5 -2.3" stroke="#bdbdbd" stroke-width="0.9" fill="none"/>
<path d="M446.80 494.10 l2.5 2.3 l2.5 -2.3" stroke="#bdbdbd" stroke-width="0.9" fill="none"/>
<path transform="translate(0 495.30)" d="M358.14 -3.82 L357.57 -3.97 L357.00 -4.06 L356.43 -4.08 L355.86 -4.05 L355.30 -3.95 L354.77 -3.80 L354.27 -3.59 L353.81 -3.33 L353.39 -3.03 L353.02 -2.69 L352.71 -2.32 L352.45 -1.92 L352.25 -1.50 L352.11 -1.07 L352.04 -0.63 L352.03 -0.19 L352.08 0.25 L352.19 0.67 L352.35 1.06 L352.57 1.44 L352.84 1.78 L353.15 2.09 L353.49 2.36 L353.87 2.59 L354.27 2.77 L354.69 2.91 L355.12 3.00 L355.55 3.04 L355.98 3.04 L356.40 2.99 L356.80 2.90 L357.19 2.76 L357.54 2.59 L357.87 2.38 L358.16 2.14 L358.41 1.88 L358.61 1.60 L358.78 1.30 L358.89 0.99 L358.97 0.67 L358.99 0.36 L358.98 0.04 L358.91 -0.26 L358.81 -0.55 L358.67 -0.82 L358.50 -1.07 L358.29 -1.29 L358.06 -1.49 L357.81 -1.66 L357.54 -1.80 L357.25 -1.90 L356.96 -1.97 L356.67 -2.01 L356.38 -2.02 L356.10 -1.99 L355.83 -1.94 L355.57 -1.85 L355.33 -1.75 L355.12 -1.61 L354.93 -1.47 L354.76 -1.30 L354.63 -1.12 L354.52 -0.93 L354.44 -0.74 L354.40 -0.54 L354.38 -0.35 L354.39 -0.16 L354.43 0.03 L354.49 0.20 L354.57 0.36 L354.68 0.50 L354.80 0.63 L354.93 0.74 L355.08 0.83 L355.23 0.91 L355.39 0.96 L355.55 0.99 L355.71 1.00 L355.86 1.00 L356.00 0.98" stroke="#acacac" stroke-width="1" fill="none"/>
<rect x="0" y="502.44" width="472" height="11.88" fill="#2b2b2b"/>
<path d="M6.6 508.18 Q10.5 503.78 14.4 508.18 Q10.5 512.58 6.6 508.18 Z" fill="#dcdcdc" stroke="#dcdcdc" stroke-width="0.8" stroke-linejoin="round"/><circle cx="10.5" cy="508.18" r="1.5" fill="#2b2b2b"/>
<rect x="29" y="503.38" width="9.8" height="10" fill="#1b1b1b"/>
<rect x="40" y="503.38" width="10" height="10" fill="#1b1b1b"/>
<path d="M58.5 505.38 L64.3 508.38 L58.5 511.38 Z" fill="#cfcfcf"/>
<rect x="67.7" y="503.78" width="10.2" height="9.2" fill="#62b45a"/>
<path d="M108.5 513.58 v-5.5 a4.25 4.25 0 0 1 8.5 0 v5.5 Z" fill="#26170b" stroke="#3d2a18" stroke-width="0.7"/><path d="M111.3 506.08 v2 M113.6 506.08 v2" stroke="#e8c090" stroke-width="1.1"/><circle cx="112.4" cy="510.68" r="1" fill="#fff4e0"/><path d="M108.8 512.98 h7.9" stroke="#6a5a40" stroke-width="0.9"/>
<rect x="213" y="502.88" width="56.5" height="11" fill="#191919"/>
<rect x="274" y="502.88" width="10.5" height="11" fill="#1f1f1f"/>
<rect x="289" y="502.88" width="55" height="11" fill="#191919"/>
<rect x="366" y="502.88" width="90" height="11" fill="#191919"/>
<path d="M260.50 507.18 l2.5 2.3 l2.5 -2.3" stroke="#bdbdbd" stroke-width="0.9" fill="none"/>
<path d="M335.30 507.18 l2.5 2.3 l2.5 -2.3" stroke="#bdbdbd" stroke-width="0.9" fill="none"/>
<path d="M446.80 507.18 l2.5 2.3 l2.5 -2.3" stroke="#bdbdbd" stroke-width="0.9" fill="none"/>
<path transform="translate(0 508.38)" d="M358.14 -3.82 L357.57 -3.97 L357.00 -4.06 L356.43 -4.08 L355.86 -4.05 L355.30 -3.95 L354.77 -3.80 L354.27 -3.59 L353.81 -3.33 L353.39 -3.03 L353.02 -2.69 L352.71 -2.32 L352.45 -1.92 L352.25 -1.50 L352.11 -1.07 L352.04 -0.63 L352.03 -0.19 L352.08 0.25 L352.19 0.67 L352.35 1.06 L352.57 1.44 L352.84 1.78 L353.15 2.09 L353.49 2.36 L353.87 2.59 L354.27 2.77 L354.69 2.91 L355.12 3.00 L355.55 3.04 L355.98 3.04 L356.40 2.99 L356.80 2.90 L357.19 2.76 L357.54 2.59 L357.87 2.38 L358.16 2.14 L358.41 1.88 L358.61 1.60 L358.78 1.30 L358.89 0.99 L358.97 0.67 L358.99 0.36 L358.98 0.04 L358.91 -0.26 L358.81 -0.55 L358.67 -0.82 L358.50 -1.07 L358.29 -1.29 L358.06 -1.49 L357.81 -1.66 L357.54 -1.80 L357.25 -1.90 L356.96 -1.97 L356.67 -2.01 L356.38 -2.02 L356.10 -1.99 L355.83 -1.94 L355.57 -1.85 L355.33 -1.75 L355.12 -1.61 L354.93 -1.47 L354.76 -1.30 L354.63 -1.12 L354.52 -0.93 L354.44 -0.74 L354.40 -0.54 L354.38 -0.35 L354.39 -0.16 L354.43 0.03 L354.49 0.20 L354.57 0.36 L354.68 0.50 L354.80 0.63 L354.93 0.74 L355.08 0.83 L355.23 0.91 L355.39 0.96 L355.55 0.99 L355.71 1.00 L355.86 1.00 L356.00 0.98" stroke="#acacac" stroke-width="1" fill="none"/>
<rect x="0" y="515.52" width="472" height="11.88" fill="#2b2b2b"/>
<path d="M6.6 521.26 Q10.5 516.86 14.4 521.26 Q10.5 525.66 6.6 521.26 Z" fill="#dcdcdc" stroke="#dcdcdc" stroke-width="0.8" stroke-linejoin="round"/><circle cx="10.5" cy="521.26" r="1.5" fill="#2b2b2b"/>
<rect x="29" y="516.46" width="9.8" height="10" fill="#1b1b1b"/>
<rect x="40" y="516.46" width="10" height="10" fill="#1b1b1b"/>
<path d="M58.5 518.46 L64.3 521.46 L58.5 524.46 Z" fill="#cfcfcf"/>
<rect x="67.7" y="516.86" width="10.2" height="9.2" fill="#62b45a"/>
<path d="M108.5 526.66 v-5.5 a4.25 4.25 0 0 1 8.5 0 v5.5 Z" fill="#26170b" stroke="#3d2a18" stroke-width="0.7"/><path d="M111.3 519.16 v2 M113.6 519.16 v2" stroke="#e8c090" stroke-width="1.1"/><circle cx="112.4" cy="523.76" r="1" fill="#fff4e0"/><path d="M108.8 526.06 h7.9" stroke="#6a5a40" stroke-width="0.9"/>
<rect x="213" y="515.96" width="56.5" height="11" fill="#191919"/>
<rect x="274" y="515.96" width="10.5" height="11" fill="#1f1f1f"/>
<rect x="289" y="515.96" width="55" height="11" fill="#191919"/>
<rect x="366" y="515.96" width="90" height="11" fill="#191919"/>
<path d="M260.50 520.26 l2.5 2.3 l2.5 -2.3" stroke="#bdbdbd" stroke-width="0.9" fill="none"/>
<path d="M335.30 520.26 l2.5 2.3 l2.5 -2.3" stroke="#bdbdbd" stroke-width="0.9" fill="none"/>
<path d="M446.80 520.26 l2.5 2.3 l2.5 -2.3" stroke="#bdbdbd" stroke-width="0.9" fill="none"/>
<path transform="translate(0 521.46)" d="M358.14 -3.82 L357.57 -3.97 L357.00 -4.06 L356.43 -4.08 L355.86 -4.05 L355.30 -3.95 L354.77 -3.80 L354.27 -3.59 L353.81 -3.33 L353.39 -3.03 L353.02 -2.69 L352.71 -2.32 L352.45 -1.92 L352.25 -1.50 L352.11 -1.07 L352.04 -0.63 L352.03 -0.19 L352.08 0.25 L352.19 0.67 L352.35 1.06 L352.57 1.44 L352.84 1.78 L353.15 2.09 L353.49 2.36 L353.87 2.59 L354.27 2.77 L354.69 2.91 L355.12 3.00 L355.55 3.04 L355.98 3.04 L356.40 2.99 L356.80 2.90 L357.19 2.76 L357.54 2.59 L357.87 2.38 L358.16 2.14 L358.41 1.88 L358.61 1.60 L358.78 1.30 L358.89 0.99 L358.97 0.67 L358.99 0.36 L358.98 0.04 L358.91 -0.26 L358.81 -0.55 L358.67 -0.82 L358.50 -1.07 L358.29 -1.29 L358.06 -1.49 L357.81 -1.66 L357.54 -1.80 L357.25 -1.90 L356.96 -1.97 L356.67 -2.01 L356.38 -2.02 L356.10 -1.99 L355.83 -1.94 L355.57 -1.85 L355.33 -1.75 L355.12 -1.61 L354.93 -1.47 L354.76 -1.30 L354.63 -1.12 L354.52 -0.93 L354.44 -0.74 L354.40 -0.54 L354.38 -0.35 L354.39 -0.16 L354.43 0.03 L354.49 0.20 L354.57 0.36 L354.68 0.50 L354.80 0.63 L354.93 0.74 L355.08 0.83 L355.23 0.91 L355.39 0.96 L355.55 0.99 L355.71 1.00 L355.86 1.00 L356.00 0.98" stroke="#acacac" stroke-width="1" fill="none"/>
<rect x="0" y="528.60" width="472" height="11.88" fill="#2b2b2b"/>
<path d="M6.6 534.34 Q10.5 529.94 14.4 534.34 Q10.5 538.74 6.6 534.34 Z" fill="#dcdcdc" stroke="#dcdcdc" stroke-width="0.8" stroke-linejoin="round"/><circle cx="10.5" cy="534.34" r="1.5" fill="#2b2b2b"/>
<rect x="29" y="529.54" width="9.8" height="10" fill="#1b1b1b"/>
<rect x="40" y="529.54" width="10" height="10" fill="#1b1b1b"/>
<path d="M58.5 531.54 L64.3 534.54 L58.5 537.54 Z" fill="#cfcfcf"/>
<rect x="67.7" y="529.94" width="10.2" height="9.2" fill="#62b45a"/>
<path d="M108.5 539.74 v-5.5 a4.25 4.25 0 0 1 8.5 0 v5.5 Z" fill="#26170b" stroke="#3d2a18" stroke-width="0.7"/><path d="M111.3 532.24 v2 M113.6 532.24 v2" stroke="#e8c090" stroke-width="1.1"/><circle cx="112.4" cy="536.84" r="1" fill="#fff4e0"/><path d="M108.8 539.14 h7.9" stroke="#6a5a40" stroke-width="0.9"/>
<rect x="213" y="529.04" width="56.5" height="11" fill="#191919"/>
<rect x="274" y="529.04" width="10.5" height="11" fill="#1f1f1f"/>
<rect x="289" y="529.04" width="55" height="11" fill="#191919"/>
<rect x="366" y="529.04" width="90" height="11" fill="#191919"/>
<path d="M260.50 533.34 l2.5 2.3 l2.5 -2.3" stroke="#bdbdbd" stroke-width="0.9" fill="none"/>
<path d="M335.30 533.34 l2.5 2.3 l2.5 -2.3" stroke="#bdbdbd" stroke-width="0.9" fill="none"/>
<path d="M446.80 533.34 l2.5 2.3 l2.5 -2.3" stroke="#bdbdbd" stroke-width="0.9" fill="none"/>
<path transform="translate(0 534.54)" d="M358.14 -3.82 L357.57 -3.97 L357.00 -4.06 L356.43 -4.08 L355.86 -4.05 L355.30 -3.95 L354.77 -3.80 L354.27 -3.59 L353.81 -3.33 L353.39 -3.03 L353.02 -2.69 L352.71 -2.32 L352.45 -1.92 L352.25 -1.50 L352.11 -1.07 L352.04 -0.63 L352.03 -0.19 L352.08 0.25 L352.19 0.67 L352.35 1.06 L352.57 1.44 L352.84 1.78 L353.15 2.09 L353.49 2.36 L353.87 2.59 L354.27 2.77 L354.69 2.91 L355.12 3.00 L355.55 3.04 L355.98 3.04 L356.40 2.99 L356.80 2.90 L357.19 2.76 L357.54 2.59 L357.87 2.38 L358.16 2.14 L358.41 1.88 L358.61 1.60 L358.78 1.30 L358.89 0.99 L358.97 0.67 L358.99 0.36 L358.98 0.04 L358.91 -0.26 L358.81 -0.55 L358.67 -0.82 L358.50 -1.07 L358.29 -1.29 L358.06 -1.49 L357.81 -1.66 L357.54 -1.80 L357.25 -1.90 L356.96 -1.97 L356.67 -2.01 L356.38 -2.02 L356.10 -1.99 L355.83 -1.94 L355.57 -1.85 L355.33 -1.75 L355.12 -1.61 L354.93 -1.47 L354.76 -1.30 L354.63 -1.12 L354.52 -0.93 L354.44 -0.74 L354.40 -0.54 L354.38 -0.35 L354.39 -0.16 L354.43 0.03 L354.49 0.20 L354.57 0.36 L354.68 0.50 L354.80 0.63 L354.93 0.74 L355.08 0.83 L355.23 0.91 L355.39 0.96 L355.55 0.99 L355.71 1.00 L355.86 1.00 L356.00 0.98" stroke="#acacac" stroke-width="1" fill="none"/>
<rect x="0" y="541.68" width="472" height="11.88" fill="#2b2b2b"/>
<path d="M6.6 547.42 Q10.5 543.02 14.4 547.42 Q10.5 551.82 6.6 547.42 Z" fill="#dcdcdc" stroke="#dcdcdc" stroke-width="0.8" stroke-linejoin="round"/><circle cx="10.5" cy="547.42" r="1.5" fill="#2b2b2b"/>
<rect x="29" y="542.62" width="9.8" height="10" fill="#1b1b1b"/>
<rect x="40" y="542.62" width="10" height="10" fill="#1b1b1b"/>
<path d="M58.5 544.62 L64.3 547.62 L58.5 550.62 Z" fill="#cfcfcf"/>
<rect x="67.7" y="543.02" width="10.2" height="9.2" fill="#7c86ee"/>
<polygon points="112.00,543.02 113.23,546.32 116.76,546.47 114.00,548.67 114.94,552.07 112.00,550.12 109.06,552.07 110.00,548.67 107.24,546.47 110.77,546.32" fill="#d8d8d8"/>
<path d="M121.5 543.82 v7.5 M125 543.82 v7.5 M119.8 546.02 h7 M119.8 549.42 h7" stroke="#9fd6c8" stroke-width="1.1"/>
<rect x="213" y="542.12" width="56.5" height="11" fill="#191919"/>
<rect x="274" y="542.12" width="10.5" height="11" fill="#1f1f1f"/>
<rect x="289" y="542.12" width="55" height="11" fill="#191919"/>
<rect x="366" y="542.12" width="90" height="11" fill="#191919"/>
<path d="M260.50 546.42 l2.5 2.3 l2.5 -2.3" stroke="#bdbdbd" stroke-width="0.9" fill="none"/>
<path d="M335.30 546.42 l2.5 2.3 l2.5 -2.3" stroke="#bdbdbd" stroke-width="0.9" fill="none"/>
<path d="M446.80 546.42 l2.5 2.3 l2.5 -2.3" stroke="#bdbdbd" stroke-width="0.9" fill="none"/>
<path transform="translate(0 547.62)" d="M358.14 -3.82 L357.57 -3.97 L357.00 -4.06 L356.43 -4.08 L355.86 -4.05 L355.30 -3.95 L354.77 -3.80 L354.27 -3.59 L353.81 -3.33 L353.39 -3.03 L353.02 -2.69 L352.71 -2.32 L352.45 -1.92 L352.25 -1.50 L352.11 -1.07 L352.04 -0.63 L352.03 -0.19 L352.08 0.25 L352.19 0.67 L352.35 1.06 L352.57 1.44 L352.84 1.78 L353.15 2.09 L353.49 2.36 L353.87 2.59 L354.27 2.77 L354.69 2.91 L355.12 3.00 L355.55 3.04 L355.98 3.04 L356.40 2.99 L356.80 2.90 L357.19 2.76 L357.54 2.59 L357.87 2.38 L358.16 2.14 L358.41 1.88 L358.61 1.60 L358.78 1.30 L358.89 0.99 L358.97 0.67 L358.99 0.36 L358.98 0.04 L358.91 -0.26 L358.81 -0.55 L358.67 -0.82 L358.50 -1.07 L358.29 -1.29 L358.06 -1.49 L357.81 -1.66 L357.54 -1.80 L357.25 -1.90 L356.96 -1.97 L356.67 -2.01 L356.38 -2.02 L356.10 -1.99 L355.83 -1.94 L355.57 -1.85 L355.33 -1.75 L355.12 -1.61 L354.93 -1.47 L354.76 -1.30 L354.63 -1.12 L354.52 -0.93 L354.44 -0.74 L354.40 -0.54 L354.38 -0.35 L354.39 -0.16 L354.43 0.03 L354.49 0.20 L354.57 0.36 L354.68 0.50 L354.80 0.63 L354.93 0.74 L355.08 0.83 L355.23 0.91 L355.39 0.96 L355.55 0.99 L355.71 1.00 L355.86 1.00 L356.00 0.98" stroke="#acacac" stroke-width="1" fill="none"/>
<rect x="0" y="554.76" width="472" height="11.88" fill="#2b2b2b"/>
<path d="M6.6 560.50 Q10.5 556.10 14.4 560.50 Q10.5 564.90 6.6 560.50 Z" fill="#dcdcdc" stroke="#dcdcdc" stroke-width="0.8" stroke-linejoin="round"/><circle cx="10.5" cy="560.50" r="1.5" fill="#2b2b2b"/>
<rect x="29" y="555.70" width="9.8" height="10" fill="#1b1b1b"/>
<rect x="40" y="555.70" width="10" height="10" fill="#1b1b1b"/>
<path d="M58.5 557.70 L64.3 560.70 L58.5 563.70 Z" fill="#cfcfcf"/>
<rect x="67.7" y="556.10" width="10.2" height="9.2" fill="#7c86ee"/>
<polygon points="112.00,556.10 113.23,559.40 116.76,559.55 114.00,561.75 114.94,565.15 112.00,563.20 109.06,565.15 110.00,561.75 107.24,559.55 110.77,559.40" fill="#d8d8d8"/>
<path d="M121.5 556.90 v7.5 M125 556.90 v7.5 M119.8 559.10 h7 M119.8 562.50 h7" stroke="#9fd6c8" stroke-width="1.1"/>
<rect x="213" y="555.20" width="56.5" height="11" fill="#191919"/>
<rect x="274" y="555.20" width="10.5" height="11" fill="#1f1f1f"/>
<rect x="289" y="555.20" width="55" height="11" fill="#191919"/>
<rect x="366" y="555.20" width="90" height="11" fill="#191919"/>
<path d="M260.50 559.50 l2.5 2.3 l2.5 -2.3" stroke="#bdbdbd" stroke-width="0.9" fill="none"/>
<path d="M335.30 559.50 l2.5 2.3 l2.5 -2.3" stroke="#bdbdbd" stroke-width="0.9" fill="none"/>
<path d="M446.80 559.50 l2.5 2.3 l2.5 -2.3" stroke="#bdbdbd" stroke-width="0.9" fill="none"/>
<path transform="translate(0 560.70)" d="M358.14 -3.82 L357.57 -3.97 L357.00 -4.06 L356.43 -4.08 L355.86 -4.05 L355.30 -3.95 L354.77 -3.80 L354.27 -3.59 L353.81 -3.33 L353.39 -3.03 L353.02 -2.69 L352.71 -2.32 L352.45 -1.92 L352.25 -1.50 L352.11 -1.07 L352.04 -0.63 L352.03 -0.19 L352.08 0.25 L352.19 0.67 L352.35 1.06 L352.57 1.44 L352.84 1.78 L353.15 2.09 L353.49 2.36 L353.87 2.59 L354.27 2.77 L354.69 2.91 L355.12 3.00 L355.55 3.04 L355.98 3.04 L356.40 2.99 L356.80 2.90 L357.19 2.76 L357.54 2.59 L357.87 2.38 L358.16 2.14 L358.41 1.88 L358.61 1.60 L358.78 1.30 L358.89 0.99 L358.97 0.67 L358.99 0.36 L358.98 0.04 L358.91 -0.26 L358.81 -0.55 L358.67 -0.82 L358.50 -1.07 L358.29 -1.29 L358.06 -1.49 L357.81 -1.66 L357.54 -1.80 L357.25 -1.90 L356.96 -1.97 L356.67 -2.01 L356.38 -2.02 L356.10 -1.99 L355.83 -1.94 L355.57 -1.85 L355.33 -1.75 L355.12 -1.61 L354.93 -1.47 L354.76 -1.30 L354.63 -1.12 L354.52 -0.93 L354.44 -0.74 L354.40 -0.54 L354.38 -0.35 L354.39 -0.16 L354.43 0.03 L354.49 0.20 L354.57 0.36 L354.68 0.50 L354.80 0.63 L354.93 0.74 L355.08 0.83 L355.23 0.91 L355.39 0.96 L355.55 0.99 L355.71 1.00 L355.86 1.00 L356.00 0.98" stroke="#acacac" stroke-width="1" fill="none"/>
<rect x="0" y="567.84" width="472" height="11.88" fill="#2b2b2b"/>
<path d="M6.6 573.58 Q10.5 569.18 14.4 573.58 Q10.5 577.98 6.6 573.58 Z" fill="#dcdcdc" stroke="#dcdcdc" stroke-width="0.8" stroke-linejoin="round"/><circle cx="10.5" cy="573.58" r="1.5" fill="#2b2b2b"/>
<rect x="29" y="568.78" width="9.8" height="10" fill="#1b1b1b"/>
<rect x="40" y="568.78" width="10" height="10" fill="#1b1b1b"/>
<path d="M58.5 570.78 L64.3 573.78 L58.5 576.78 Z" fill="#cfcfcf"/>
<rect x="67.7" y="569.18" width="10.2" height="9.2" fill="#7c86ee"/>
<polygon points="112.00,569.18 113.23,572.48 116.76,572.63 114.00,574.83 114.94,578.23 112.00,576.28 109.06,578.23 110.00,574.83 107.24,572.63 110.77,572.48" fill="#d8d8d8"/>
<path d="M121.5 569.98 v7.5 M125 569.98 v7.5 M119.8 572.18 h7 M119.8 575.58 h7" stroke="#9fd6c8" stroke-width="1.1"/>
<rect x="213" y="568.28" width="56.5" height="11" fill="#191919"/>
<rect x="274" y="568.28" width="10.5" height="11" fill="#1f1f1f"/>
<rect x="289" y="568.28" width="55" height="11" fill="#191919"/>
<rect x="366" y="568.28" width="90" height="11" fill="#191919"/>
<path d="M260.50 572.58 l2.5 2.3 l2.5 -2.3" stroke="#bdbdbd" stroke-width="0.9" fill="none"/>
<path d="M335.30 572.58 l2.5 2.3 l2.5 -2.3" stroke="#bdbdbd" stroke-width="0.9" fill="none"/>
<path d="M446.80 572.58 l2.5 2.3 l2.5 -2.3" stroke="#bdbdbd" stroke-width="0.9" fill="none"/>
<path transform="translate(0 573.78)" d="M358.14 -3.82 L357.57 -3.97 L357.00 -4.06 L356.43 -4.08 L355.86 -4.05 L355.30 -3.95 L354.77 -3.80 L354.27 -3.59 L353.81 -3.33 L353.39 -3.03 L353.02 -2.69 L352.71 -2.32 L352.45 -1.92 L352.25 -1.50 L352.11 -1.07 L352.04 -0.63 L352.03 -0.19 L352.08 0.25 L352.19 0.67 L352.35 1.06 L352.57 1.44 L352.84 1.78 L353.15 2.09 L353.49 2.36 L353.87 2.59 L354.27 2.77 L354.69 2.91 L355.12 3.00 L355.55 3.04 L355.98 3.04 L356.40 2.99 L356.80 2.90 L357.19 2.76 L357.54 2.59 L357.87 2.38 L358.16 2.14 L358.41 1.88 L358.61 1.60 L358.78 1.30 L358.89 0.99 L358.97 0.67 L358.99 0.36 L358.98 0.04 L358.91 -0.26 L358.81 -0.55 L358.67 -0.82 L358.50 -1.07 L358.29 -1.29 L358.06 -1.49 L357.81 -1.66 L357.54 -1.80 L357.25 -1.90 L356.96 -1.97 L356.67 -2.01 L356.38 -2.02 L356.10 -1.99 L355.83 -1.94 L355.57 -1.85 L355.33 -1.75 L355.12 -1.61 L354.93 -1.47 L354.76 -1.30 L354.63 -1.12 L354.52 -0.93 L354.44 -0.74 L354.40 -0.54 L354.38 -0.35 L354.39 -0.16 L354.43 0.03 L354.49 0.20 L354.57 0.36 L354.68 0.50 L354.80 0.63 L354.93 0.74 L355.08 0.83 L355.23 0.91 L355.39 0.96 L355.55 0.99 L355.71 1.00 L355.86 1.00 L356.00 0.98" stroke="#acacac" stroke-width="1" fill="none"/>
<rect x="0" y="580.92" width="472" height="11.88" fill="#2b2b2b"/>
<path d="M6.6 586.66 Q10.5 582.26 14.4 586.66 Q10.5 591.06 6.6 586.66 Z" fill="#dcdcdc" stroke="#dcdcdc" stroke-width="0.8" stroke-linejoin="round"/><circle cx="10.5" cy="586.66" r="1.5" fill="#2b2b2b"/>
<rect x="29" y="581.86" width="9.8" height="10" fill="#1b1b1b"/>
<rect x="40" y="581.86" width="10" height="10" fill="#1b1b1b"/>
<path d="M58.5 583.86 L64.3 586.86 L58.5 589.86 Z" fill="#cfcfcf"/>
<rect x="67.7" y="582.26" width="10.2" height="9.2" fill="#7c86ee"/>
<polygon points="112.00,582.26 113.23,585.56 116.76,585.71 114.00,587.91 114.94,591.31 112.00,589.36 109.06,591.31 110.00,587.91 107.24,585.71 110.77,585.56" fill="#d8d8d8"/>
<path d="M121.5 583.06 v7.5 M125 583.06 v7.5 M119.8 585.26 h7 M119.8 588.66 h7" stroke="#9fd6c8" stroke-width="1.1"/>
<rect x="213" y="581.36" width="56.5" height="11" fill="#191919"/>
<rect x="274" y="581.36" width="10.5" height="11" fill="#1f1f1f"/>
<rect x="289" y="581.36" width="55" height="11" fill="#191919"/>
<rect x="366" y="581.36" width="90" height="11" fill="#191919"/>
<path d="M260.50 585.66 l2.5 2.3 l2.5 -2.3" stroke="#bdbdbd" stroke-width="0.9" fill="none"/>
<path d="M335.30 585.66 l2.5 2.3 l2.5 -2.3" stroke="#bdbdbd" stroke-width="0.9" fill="none"/>
<path d="M446.80 585.66 l2.5 2.3 l2.5 -2.3" stroke="#bdbdbd" stroke-width="0.9" fill="none"/>
<path transform="translate(0 586.86)" d="M358.14 -3.82 L357.57 -3.97 L357.00 -4.06 L356.43 -4.08 L355.86 -4.05 L355.30 -3.95 L354.77 -3.80 L354.27 -3.59 L353.81 -3.33 L353.39 -3.03 L353.02 -2.69 L352.71 -2.32 L352.45 -1.92 L352.25 -1.50 L352.11 -1.07 L352.04 -0.63 L352.03 -0.19 L352.08 0.25 L352.19 0.67 L352.35 1.06 L352.57 1.44 L352.84 1.78 L353.15 2.09 L353.49 2.36 L353.87 2.59 L354.27 2.77 L354.69 2.91 L355.12 3.00 L355.55 3.04 L355.98 3.04 L356.40 2.99 L356.80 2.90 L357.19 2.76 L357.54 2.59 L357.87 2.38 L358.16 2.14 L358.41 1.88 L358.61 1.60 L358.78 1.30 L358.89 0.99 L358.97 0.67 L358.99 0.36 L358.98 0.04 L358.91 -0.26 L358.81 -0.55 L358.67 -0.82 L358.50 -1.07 L358.29 -1.29 L358.06 -1.49 L357.81 -1.66 L357.54 -1.80 L357.25 -1.90 L356.96 -1.97 L356.67 -2.01 L356.38 -2.02 L356.10 -1.99 L355.83 -1.94 L355.57 -1.85 L355.33 -1.75 L355.12 -1.61 L354.93 -1.47 L354.76 -1.30 L354.63 -1.12 L354.52 -0.93 L354.44 -0.74 L354.40 -0.54 L354.38 -0.35 L354.39 -0.16 L354.43 0.03 L354.49 0.20 L354.57 0.36 L354.68 0.50 L354.80 0.63 L354.93 0.74 L355.08 0.83 L355.23 0.91 L355.39 0.96 L355.55 0.99 L355.71 1.00 L355.86 1.00 L356.00 0.98" stroke="#acacac" stroke-width="1" fill="none"/>
<rect x="0" y="594.00" width="472" height="11.88" fill="#2b2b2b"/>
<rect x="4.5" y="594.94" width="11" height="10" fill="#1b1b1b"/>
<rect x="40" y="594.94" width="10" height="10" fill="#1b1b1b"/>
<path d="M58.5 596.94 L64.3 599.94 L58.5 602.94 Z" fill="#cfcfcf"/>
<rect x="67.7" y="595.34" width="10.2" height="9.2" fill="#7c86ee"/>
<path d="M108.5 605.14 v-5.5 a4.25 4.25 0 0 1 8.5 0 v5.5 Z" fill="#26170b" stroke="#3d2a18" stroke-width="0.7"/><path d="M111.3 597.64 v2 M113.6 597.64 v2" stroke="#e8c090" stroke-width="1.1"/><circle cx="112.4" cy="602.24" r="1" fill="#fff4e0"/><path d="M108.8 604.54 h7.9" stroke="#6a5a40" stroke-width="0.9"/>
<rect x="213" y="594.44" width="56.5" height="11" fill="#191919"/>
<rect x="274" y="594.44" width="10.5" height="11" fill="#1f1f1f"/>
<rect x="289" y="594.44" width="55" height="11" fill="#191919"/>
<rect x="366" y="594.44" width="90" height="11" fill="#191919"/>
<path d="M260.50 598.74 l2.5 2.3 l2.5 -2.3" stroke="#bdbdbd" stroke-width="0.9" fill="none"/>
<path d="M335.30 598.74 l2.5 2.3 l2.5 -2.3" stroke="#bdbdbd" stroke-width="0.9" fill="none"/>
<path d="M446.80 598.74 l2.5 2.3 l2.5 -2.3" stroke="#bdbdbd" stroke-width="0.9" fill="none"/>
<path transform="translate(0 599.94)" d="M358.14 -3.82 L357.57 -3.97 L357.00 -4.06 L356.43 -4.08 L355.86 -4.05 L355.30 -3.95 L354.77 -3.80 L354.27 -3.59 L353.81 -3.33 L353.39 -3.03 L353.02 -2.69 L352.71 -2.32 L352.45 -1.92 L352.25 -1.50 L352.11 -1.07 L352.04 -0.63 L352.03 -0.19 L352.08 0.25 L352.19 0.67 L352.35 1.06 L352.57 1.44 L352.84 1.78 L353.15 2.09 L353.49 2.36 L353.87 2.59 L354.27 2.77 L354.69 2.91 L355.12 3.00 L355.55 3.04 L355.98 3.04 L356.40 2.99 L356.80 2.90 L357.19 2.76 L357.54 2.59 L357.87 2.38 L358.16 2.14 L358.41 1.88 L358.61 1.60 L358.78 1.30 L358.89 0.99 L358.97 0.67 L358.99 0.36 L358.98 0.04 L358.91 -0.26 L358.81 -0.55 L358.67 -0.82 L358.50 -1.07 L358.29 -1.29 L358.06 -1.49 L357.81 -1.66 L357.54 -1.80 L357.25 -1.90 L356.96 -1.97 L356.67 -2.01 L356.38 -2.02 L356.10 -1.99 L355.83 -1.94 L355.57 -1.85 L355.33 -1.75 L355.12 -1.61 L354.93 -1.47 L354.76 -1.30 L354.63 -1.12 L354.52 -0.93 L354.44 -0.74 L354.40 -0.54 L354.38 -0.35 L354.39 -0.16 L354.43 0.03 L354.49 0.20 L354.57 0.36 L354.68 0.50 L354.80 0.63 L354.93 0.74 L355.08 0.83 L355.23 0.91 L355.39 0.96 L355.55 0.99 L355.71 1.00 L355.86 1.00 L356.00 0.98" stroke="#acacac" stroke-width="1" fill="none"/>
<rect x="0" y="607.08" width="472" height="11.88" fill="#2b2b2b"/>
<rect x="4.5" y="608.02" width="11" height="10" fill="#1b1b1b"/>
<rect x="40" y="608.02" width="10" height="10" fill="#1b1b1b"/>
<path d="M58.5 610.02 L64.3 613.02 L58.5 616.02 Z" fill="#cfcfcf"/>
<rect x="67.7" y="608.42" width="10.2" height="9.2" fill="#7c86ee"/>
<path d="M108.5 618.22 v-5.5 a4.25 4.25 0 0 1 8.5 0 v5.5 Z" fill="#26170b" stroke="#3d2a18" stroke-width="0.7"/><path d="M111.3 610.72 v2 M113.6 610.72 v2" stroke="#e8c090" stroke-width="1.1"/><circle cx="112.4" cy="615.32" r="1" fill="#fff4e0"/><path d="M108.8 617.62 h7.9" stroke="#6a5a40" stroke-width="0.9"/>
<rect x="213" y="607.52" width="56.5" height="11" fill="#191919"/>
<rect x="274" y="607.52" width="10.5" height="11" fill="#1f1f1f"/>
<rect x="289" y="607.52" width="55" height="11" fill="#191919"/>
<rect x="366" y="607.52" width="90" height="11" fill="#191919"/>
<path d="M260.50 611.82 l2.5 2.3 l2.5 -2.3" stroke="#bdbdbd" stroke-width="0.9" fill="none"/>
<path d="M335.30 611.82 l2.5 2.3 l2.5 -2.3" stroke="#bdbdbd" stroke-width="0.9" fill="none"/>
<path d="M446.80 611.82 l2.5 2.3 l2.5 -2.3" stroke="#bdbdbd" stroke-width="0.9" fill="none"/>
<path transform="translate(0 613.02)" d="M358.14 -3.82 L357.57 -3.97 L357.00 -4.06 L356.43 -4.08 L355.86 -4.05 L355.30 -3.95 L354.77 -3.80 L354.27 -3.59 L353.81 -3.33 L353.39 -3.03 L353.02 -2.69 L352.71 -2.32 L352.45 -1.92 L352.25 -1.50 L352.11 -1.07 L352.04 -0.63 L352.03 -0.19 L352.08 0.25 L352.19 0.67 L352.35 1.06 L352.57 1.44 L352.84 1.78 L353.15 2.09 L353.49 2.36 L353.87 2.59 L354.27 2.77 L354.69 2.91 L355.12 3.00 L355.55 3.04 L355.98 3.04 L356.40 2.99 L356.80 2.90 L357.19 2.76 L357.54 2.59 L357.87 2.38 L358.16 2.14 L358.41 1.88 L358.61 1.60 L358.78 1.30 L358.89 0.99 L358.97 0.67 L358.99 0.36 L358.98 0.04 L358.91 -0.26 L358.81 -0.55 L358.67 -0.82 L358.50 -1.07 L358.29 -1.29 L358.06 -1.49 L357.81 -1.66 L357.54 -1.80 L357.25 -1.90 L356.96 -1.97 L356.67 -2.01 L356.38 -2.02 L356.10 -1.99 L355.83 -1.94 L355.57 -1.85 L355.33 -1.75 L355.12 -1.61 L354.93 -1.47 L354.76 -1.30 L354.63 -1.12 L354.52 -0.93 L354.44 -0.74 L354.40 -0.54 L354.38 -0.35 L354.39 -0.16 L354.43 0.03 L354.49 0.20 L354.57 0.36 L354.68 0.50 L354.80 0.63 L354.93 0.74 L355.08 0.83 L355.23 0.91 L355.39 0.96 L355.55 0.99 L355.71 1.00 L355.86 1.00 L356.00 0.98" stroke="#acacac" stroke-width="1" fill="none"/>
<rect x="0" y="620.16" width="472" height="11.88" fill="#2b2b2b"/>
<rect x="4.5" y="621.10" width="11" height="10" fill="#1b1b1b"/>
<rect x="40" y="621.10" width="10" height="10" fill="#1b1b1b"/>
<path d="M58.5 623.10 L64.3 626.10 L58.5 629.10 Z" fill="#cfcfcf"/>
<rect x="67.7" y="621.50" width="10.2" height="9.2" fill="#7c86ee"/>
<path d="M108.5 631.30 v-5.5 a4.25 4.25 0 0 1 8.5 0 v5.5 Z" fill="#26170b" stroke="#3d2a18" stroke-width="0.7"/><path d="M111.3 623.80 v2 M113.6 623.80 v2" stroke="#e8c090" stroke-width="1.1"/><circle cx="112.4" cy="628.40" r="1" fill="#fff4e0"/><path d="M108.8 630.70 h7.9" stroke="#6a5a40" stroke-width="0.9"/>
<rect x="213" y="620.60" width="56.5" height="11" fill="#191919"/>
<rect x="274" y="620.60" width="10.5" height="11" fill="#1f1f1f"/>
<rect x="289" y="620.60" width="55" height="11" fill="#191919"/>
<rect x="366" y="620.60" width="90" height="11" fill="#191919"/>
<path d="M260.50 624.90 l2.5 2.3 l2.5 -2.3" stroke="#bdbdbd" stroke-width="0.9" fill="none"/>
<path d="M335.30 624.90 l2.5 2.3 l2.5 -2.3" stroke="#bdbdbd" stroke-width="0.9" fill="none"/>
<path d="M446.80 624.90 l2.5 2.3 l2.5 -2.3" stroke="#bdbdbd" stroke-width="0.9" fill="none"/>
<path transform="translate(0 626.10)" d="M358.14 -3.82 L357.57 -3.97 L357.00 -4.06 L356.43 -4.08 L355.86 -4.05 L355.30 -3.95 L354.77 -3.80 L354.27 -3.59 L353.81 -3.33 L353.39 -3.03 L353.02 -2.69 L352.71 -2.32 L352.45 -1.92 L352.25 -1.50 L352.11 -1.07 L352.04 -0.63 L352.03 -0.19 L352.08 0.25 L352.19 0.67 L352.35 1.06 L352.57 1.44 L352.84 1.78 L353.15 2.09 L353.49 2.36 L353.87 2.59 L354.27 2.77 L354.69 2.91 L355.12 3.00 L355.55 3.04 L355.98 3.04 L356.40 2.99 L356.80 2.90 L357.19 2.76 L357.54 2.59 L357.87 2.38 L358.16 2.14 L358.41 1.88 L358.61 1.60 L358.78 1.30 L358.89 0.99 L358.97 0.67 L358.99 0.36 L358.98 0.04 L358.91 -0.26 L358.81 -0.55 L358.67 -0.82 L358.50 -1.07 L358.29 -1.29 L358.06 -1.49 L357.81 -1.66 L357.54 -1.80 L357.25 -1.90 L356.96 -1.97 L356.67 -2.01 L356.38 -2.02 L356.10 -1.99 L355.83 -1.94 L355.57 -1.85 L355.33 -1.75 L355.12 -1.61 L354.93 -1.47 L354.76 -1.30 L354.63 -1.12 L354.52 -0.93 L354.44 -0.74 L354.40 -0.54 L354.38 -0.35 L354.39 -0.16 L354.43 0.03 L354.49 0.20 L354.57 0.36 L354.68 0.50 L354.80 0.63 L354.93 0.74 L355.08 0.83 L355.23 0.91 L355.39 0.96 L355.55 0.99 L355.71 1.00 L355.86 1.00 L356.00 0.98" stroke="#acacac" stroke-width="1" fill="none"/>
<rect x="0" y="633.24" width="472" height="11.88" fill="#2b2b2b"/>
<path d="M6.6 638.98 Q10.5 634.58 14.4 638.98 Q10.5 643.38 6.6 638.98 Z" fill="#dcdcdc" stroke="#dcdcdc" stroke-width="0.8" stroke-linejoin="round"/><circle cx="10.5" cy="638.98" r="1.5" fill="#2b2b2b"/>
<rect x="29" y="634.18" width="9.8" height="10" fill="#1b1b1b"/>
<rect x="40" y="634.18" width="10" height="10" fill="#1b1b1b"/>
<path d="M58.5 636.18 L64.3 639.18 L58.5 642.18 Z" fill="#cfcfcf"/>
<rect x="67.7" y="634.58" width="10.2" height="9.2" fill="#7c86ee"/>
<path d="M108.5 644.38 v-5.5 a4.25 4.25 0 0 1 8.5 0 v5.5 Z" fill="#26170b" stroke="#3d2a18" stroke-width="0.7"/><path d="M111.3 636.88 v2 M113.6 636.88 v2" stroke="#e8c090" stroke-width="1.1"/><circle cx="112.4" cy="641.48" r="1" fill="#fff4e0"/><path d="M108.8 643.78 h7.9" stroke="#6a5a40" stroke-width="0.9"/>
<rect x="213" y="633.68" width="56.5" height="11" fill="#191919"/>
<rect x="274" y="633.68" width="10.5" height="11" fill="#1f1f1f"/>
<rect x="289" y="633.68" width="55" height="11" fill="#191919"/>
<rect x="366" y="633.68" width="90" height="11" fill="#191919"/>
<path d="M260.50 637.98 l2.5 2.3 l2.5 -2.3" stroke="#bdbdbd" stroke-width="0.9" fill="none"/>
<path d="M335.30 637.98 l2.5 2.3 l2.5 -2.3" stroke="#bdbdbd" stroke-width="0.9" fill="none"/>
<path d="M446.80 637.98 l2.5 2.3 l2.5 -2.3" stroke="#bdbdbd" stroke-width="0.9" fill="none"/>
<path transform="translate(0 639.18)" d="M358.14 -3.82 L357.57 -3.97 L357.00 -4.06 L356.43 -4.08 L355.86 -4.05 L355.30 -3.95 L354.77 -3.80 L354.27 -3.59 L353.81 -3.33 L353.39 -3.03 L353.02 -2.69 L352.71 -2.32 L352.45 -1.92 L352.25 -1.50 L352.11 -1.07 L352.04 -0.63 L352.03 -0.19 L352.08 0.25 L352.19 0.67 L352.35 1.06 L352.57 1.44 L352.84 1.78 L353.15 2.09 L353.49 2.36 L353.87 2.59 L354.27 2.77 L354.69 2.91 L355.12 3.00 L355.55 3.04 L355.98 3.04 L356.40 2.99 L356.80 2.90 L357.19 2.76 L357.54 2.59 L357.87 2.38 L358.16 2.14 L358.41 1.88 L358.61 1.60 L358.78 1.30 L358.89 0.99 L358.97 0.67 L358.99 0.36 L358.98 0.04 L358.91 -0.26 L358.81 -0.55 L358.67 -0.82 L358.50 -1.07 L358.29 -1.29 L358.06 -1.49 L357.81 -1.66 L357.54 -1.80 L357.25 -1.90 L356.96 -1.97 L356.67 -2.01 L356.38 -2.02 L356.10 -1.99 L355.83 -1.94 L355.57 -1.85 L355.33 -1.75 L355.12 -1.61 L354.93 -1.47 L354.76 -1.30 L354.63 -1.12 L354.52 -0.93 L354.44 -0.74 L354.40 -0.54 L354.38 -0.35 L354.39 -0.16 L354.43 0.03 L354.49 0.20 L354.57 0.36 L354.68 0.50 L354.80 0.63 L354.93 0.74 L355.08 0.83 L355.23 0.91 L355.39 0.96 L355.55 0.99 L355.71 1.00 L355.86 1.00 L356.00 0.98" stroke="#acacac" stroke-width="1" fill="none"/>
<rect x="0" y="646.32" width="472" height="11.88" fill="#2b2b2b"/>
<path d="M6.6 652.06 Q10.5 647.66 14.4 652.06 Q10.5 656.46 6.6 652.06 Z" fill="#dcdcdc" stroke="#dcdcdc" stroke-width="0.8" stroke-linejoin="round"/><circle cx="10.5" cy="652.06" r="1.5" fill="#2b2b2b"/>
<rect x="29" y="647.26" width="9.8" height="10" fill="#1b1b1b"/>
<rect x="40" y="647.26" width="10" height="10" fill="#1b1b1b"/>
<path d="M58.5 649.26 L64.3 652.26 L58.5 655.26 Z" fill="#cfcfcf"/>
<rect x="67.7" y="647.66" width="10.2" height="9.2" fill="#7c86ee"/>
<path d="M108.5 657.46 v-5.5 a4.25 4.25 0 0 1 8.5 0 v5.5 Z" fill="#26170b" stroke="#3d2a18" stroke-width="0.7"/><path d="M111.3 649.96 v2 M113.6 649.96 v2" stroke="#e8c090" stroke-width="1.1"/><circle cx="112.4" cy="654.56" r="1" fill="#fff4e0"/><path d="M108.8 656.86 h7.9" stroke="#6a5a40" stroke-width="0.9"/>
<rect x="213" y="646.76" width="56.5" height="11" fill="#191919"/>
<rect x="274" y="646.76" width="10.5" height="11" fill="#1f1f1f"/>
<rect x="289" y="646.76" width="55" height="11" fill="#191919"/>
<rect x="366" y="646.76" width="90" height="11" fill="#191919"/>
<path d="M260.50 651.06 l2.5 2.3 l2.5 -2.3" stroke="#bdbdbd" stroke-width="0.9" fill="none"/>
<path d="M335.30 651.06 l2.5 2.3 l2.5 -2.3" stroke="#bdbdbd" stroke-width="0.9" fill="none"/>
<path d="M446.80 651.06 l2.5 2.3 l2.5 -2.3" stroke="#bdbdbd" stroke-width="0.9" fill="none"/>
<path transform="translate(0 652.26)" d="M358.14 -3.82 L357.57 -3.97 L357.00 -4.06 L356.43 -4.08 L355.86 -4.05 L355.30 -3.95 L354.77 -3.80 L354.27 -3.59 L353.81 -3.33 L353.39 -3.03 L353.02 -2.69 L352.71 -2.32 L352.45 -1.92 L352.25 -1.50 L352.11 -1.07 L352.04 -0.63 L352.03 -0.19 L352.08 0.25 L352.19 0.67 L352.35 1.06 L352.57 1.44 L352.84 1.78 L353.15 2.09 L353.49 2.36 L353.87 2.59 L354.27 2.77 L354.69 2.91 L355.12 3.00 L355.55 3.04 L355.98 3.04 L356.40 2.99 L356.80 2.90 L357.19 2.76 L357.54 2.59 L357.87 2.38 L358.16 2.14 L358.41 1.88 L358.61 1.60 L358.78 1.30 L358.89 0.99 L358.97 0.67 L358.99 0.36 L358.98 0.04 L358.91 -0.26 L358.81 -0.55 L358.67 -0.82 L358.50 -1.07 L358.29 -1.29 L358.06 -1.49 L357.81 -1.66 L357.54 -1.80 L357.25 -1.90 L356.96 -1.97 L356.67 -2.01 L356.38 -2.02 L356.10 -1.99 L355.83 -1.94 L355.57 -1.85 L355.33 -1.75 L355.12 -1.61 L354.93 -1.47 L354.76 -1.30 L354.63 -1.12 L354.52 -0.93 L354.44 -0.74 L354.40 -0.54 L354.38 -0.35 L354.39 -0.16 L354.43 0.03 L354.49 0.20 L354.57 0.36 L354.68 0.50 L354.80 0.63 L354.93 0.74 L355.08 0.83 L355.23 0.91 L355.39 0.96 L355.55 0.99 L355.71 1.00 L355.86 1.00 L356.00 0.98" stroke="#acacac" stroke-width="1" fill="none"/>
<rect x="0" y="659.40" width="472" height="11.88" fill="#2b2b2b"/>
<path d="M6.6 665.14 Q10.5 660.74 14.4 665.14 Q10.5 669.54 6.6 665.14 Z" fill="#dcdcdc" stroke="#dcdcdc" stroke-width="0.8" stroke-linejoin="round"/><circle cx="10.5" cy="665.14" r="1.5" fill="#2b2b2b"/>
<rect x="29" y="660.34" width="9.8" height="10" fill="#1b1b1b"/>
<rect x="40" y="660.34" width="10" height="10" fill="#1b1b1b"/>
<path d="M58.5 662.34 L64.3 665.34 L58.5 668.34 Z" fill="#cfcfcf"/>
<rect x="67.7" y="660.74" width="10.2" height="9.2" fill="#7c86ee"/>
<path d="M108.5 670.54 v-5.5 a4.25 4.25 0 0 1 8.5 0 v5.5 Z" fill="#26170b" stroke="#3d2a18" stroke-width="0.7"/><path d="M111.3 663.04 v2 M113.6 663.04 v2" stroke="#e8c090" stroke-width="1.1"/><circle cx="112.4" cy="667.64" r="1" fill="#fff4e0"/><path d="M108.8 669.94 h7.9" stroke="#6a5a40" stroke-width="0.9"/>
<rect x="213" y="659.84" width="56.5" height="11" fill="#191919"/>
<rect x="274" y="659.84" width="10.5" height="11" fill="#1f1f1f"/>
<rect x="289" y="659.84" width="55" height="11" fill="#191919"/>
<rect x="366" y="659.84" width="90" height="11" fill="#191919"/>
<path d="M260.50 664.14 l2.5 2.3 l2.5 -2.3" stroke="#bdbdbd" stroke-width="0.9" fill="none"/>
<path d="M335.30 664.14 l2.5 2.3 l2.5 -2.3" stroke="#bdbdbd" stroke-width="0.9" fill="none"/>
<path d="M446.80 664.14 l2.5 2.3 l2.5 -2.3" stroke="#bdbdbd" stroke-width="0.9" fill="none"/>
<path transform="translate(0 665.34)" d="M358.14 -3.82 L357.57 -3.97 L357.00 -4.06 L356.43 -4.08 L355.86 -4.05 L355.30 -3.95 L354.77 -3.80 L354.27 -3.59 L353.81 -3.33 L353.39 -3.03 L353.02 -2.69 L352.71 -2.32 L352.45 -1.92 L352.25 -1.50 L352.11 -1.07 L352.04 -0.63 L352.03 -0.19 L352.08 0.25 L352.19 0.67 L352.35 1.06 L352.57 1.44 L352.84 1.78 L353.15 2.09 L353.49 2.36 L353.87 2.59 L354.27 2.77 L354.69 2.91 L355.12 3.00 L355.55 3.04 L355.98 3.04 L356.40 2.99 L356.80 2.90 L357.19 2.76 L357.54 2.59 L357.87 2.38 L358.16 2.14 L358.41 1.88 L358.61 1.60 L358.78 1.30 L358.89 0.99 L358.97 0.67 L358.99 0.36 L358.98 0.04 L358.91 -0.26 L358.81 -0.55 L358.67 -0.82 L358.50 -1.07 L358.29 -1.29 L358.06 -1.49 L357.81 -1.66 L357.54 -1.80 L357.25 -1.90 L356.96 -1.97 L356.67 -2.01 L356.38 -2.02 L356.10 -1.99 L355.83 -1.94 L355.57 -1.85 L355.33 -1.75 L355.12 -1.61 L354.93 -1.47 L354.76 -1.30 L354.63 -1.12 L354.52 -0.93 L354.44 -0.74 L354.40 -0.54 L354.38 -0.35 L354.39 -0.16 L354.43 0.03 L354.49 0.20 L354.57 0.36 L354.68 0.50 L354.80 0.63 L354.93 0.74 L355.08 0.83 L355.23 0.91 L355.39 0.96 L355.55 0.99 L355.71 1.00 L355.86 1.00 L356.00 0.98" stroke="#acacac" stroke-width="1" fill="none"/>
</svg>
<div class="t" style="left:84.80px;top:-5.35px;font-size:8.40px;color:#bdbdbd;transform:scaleX(0.9400)">12</div>
<div class="t" style="left:133.50px;top:-5.69px;font-size:8.80px;color:#c4c4c4;transform:scaleX(0.9450)">S | Head</div>
<div class="t" style="left:217.10px;top:-5.69px;font-size:8.80px;color:#dadada">Normal</div>
<div class="t" style="left:293.40px;top:-5.69px;font-size:8.80px;color:#dadada;transform:scaleX(0.9697)">None</div>
<div class="t" style="left:370.60px;top:-5.69px;font-size:8.80px;color:#dadada;transform:scaleX(0.8946)">13. S | Neck</div>
<div class="t" style="left:84.80px;top:7.73px;font-size:8.40px;color:#bdbdbd;transform:scaleX(0.9400)">13</div>
<div class="t" style="left:133.50px;top:7.39px;font-size:8.80px;color:#c4c4c4;transform:scaleX(0.9450)">S | Neck</div>
<div class="t" style="left:217.10px;top:7.39px;font-size:8.80px;color:#dadada">Normal</div>
<div class="t" style="left:293.40px;top:7.39px;font-size:8.80px;color:#dadada;transform:scaleX(0.9697)">None</div>
<div class="t" style="left:370.60px;top:7.39px;font-size:8.80px;color:#dadada;transform:scaleX(0.8946)">14. S | Spine 2</div>
<div class="t" style="left:84.80px;top:20.81px;font-size:8.40px;color:#bdbdbd;transform:scaleX(0.9400)">14</div>
<div class="t" style="left:133.50px;top:20.47px;font-size:8.80px;color:#c4c4c4;transform:scaleX(0.9450)">S | Spine 2</div>
<div class="t" style="left:217.10px;top:20.47px;font-size:8.80px;color:#dadada">Normal</div>
<div class="t" style="left:293.40px;top:20.47px;font-size:8.80px;color:#dadada;transform:scaleX(0.9697)">None</div>
<div class="t" style="left:370.60px;top:20.47px;font-size:8.80px;color:#dadada;transform:scaleX(0.8946)">15. S | Spine</div>
<div class="t" style="left:84.80px;top:33.89px;font-size:8.40px;color:#bdbdbd;transform:scaleX(0.9400)">15</div>
<div class="t" style="left:133.50px;top:33.55px;font-size:8.80px;color:#c4c4c4;transform:scaleX(0.9450)">S | Spine</div>
<div class="t" style="left:217.10px;top:33.55px;font-size:8.80px;color:#dadada">Normal</div>
<div class="t" style="left:293.40px;top:33.55px;font-size:8.80px;color:#dadada;transform:scaleX(0.9697)">None</div>
<div class="t" style="left:370.60px;top:33.55px;font-size:8.80px;color:#dadada;transform:scaleX(0.8946)">16. S | Hips</div>
<div class="t" style="left:84.80px;top:46.97px;font-size:8.40px;color:#bdbdbd;transform:scaleX(0.9400)">16</div>
<div class="t" style="left:133.50px;top:46.63px;font-size:8.80px;color:#c4c4c4;transform:scaleX(0.9450)">S | Hips</div>
<div class="t" style="left:217.10px;top:46.63px;font-size:8.80px;color:#dadada">Normal</div>
<div class="t" style="left:293.40px;top:46.63px;font-size:8.80px;color:#dadada;transform:scaleX(0.9697)">None</div>
<div class="t" style="left:370.60px;top:46.63px;font-size:8.80px;color:#dadada;transform:scaleX(0.9697)">None</div>
<div class="t" style="left:84.80px;top:60.05px;font-size:8.40px;color:#bdbdbd;transform:scaleX(0.9400)">17</div>
<div class="t" style="left:122.00px;top:59.71px;font-size:8.80px;color:#c4c4c4;transform:scaleX(0.9850)">Head_Marker</div>
<div class="t" style="left:217.10px;top:59.71px;font-size:8.80px;color:#dadada">Normal</div>
<div class="t" style="left:293.40px;top:59.71px;font-size:8.80px;color:#dadada;transform:scaleX(0.9697)">None</div>
<div class="t" style="left:370.60px;top:59.71px;font-size:8.80px;color:#dadada;transform:scaleX(0.9697)">None</div>
<div class="t" style="left:84.80px;top:73.13px;font-size:8.40px;color:#bdbdbd;transform:scaleX(0.9400)">18</div>
<div class="t" style="left:122.00px;top:72.79px;font-size:8.80px;color:#c4c4c4;transform:scaleX(0.9850)">Neck_Marker</div>
<div class="t" style="left:217.10px;top:72.79px;font-size:8.80px;color:#dadada">Normal</div>
<div class="t" style="left:293.40px;top:72.79px;font-size:8.80px;color:#dadada;transform:scaleX(0.9697)">None</div>
<div class="t" style="left:370.60px;top:72.79px;font-size:8.80px;color:#dadada;transform:scaleX(0.9697)">None</div>
<div class="t" style="left:84.80px;top:86.21px;font-size:8.40px;color:#bdbdbd;transform:scaleX(0.9400)">19</div>
<div class="t" style="left:122.00px;top:85.87px;font-size:8.80px;color:#c4c4c4;transform:scaleX(0.9850)">Chest_Marker</div>
<div class="t" style="left:217.10px;top:85.87px;font-size:8.80px;color:#dadada">Normal</div>
<div class="t" style="left:293.40px;top:85.87px;font-size:8.80px;color:#dadada;transform:scaleX(0.9697)">None</div>
<div class="t" style="left:370.60px;top:85.87px;font-size:8.80px;color:#dadada;transform:scaleX(0.9697)">None</div>
<div class="t" style="left:84.80px;top:99.29px;font-size:8.40px;color:#bdbdbd;transform:scaleX(0.9400)">20</div>
<div class="t" style="left:122.00px;top:98.95px;font-size:8.80px;color:#c4c4c4;transform:scaleX(0.9850)">Pelvis_Marker</div>
<div class="t" style="left:217.10px;top:98.95px;font-size:8.80px;color:#dadada">Normal</div>
<div class="t" style="left:293.40px;top:98.95px;font-size:8.80px;color:#dadada;transform:scaleX(0.9697)">None</div>
<div class="t" style="left:370.60px;top:98.95px;font-size:8.80px;color:#dadada;transform:scaleX(0.9697)">None</div>
<div class="t" style="left:84.80px;top:112.37px;font-size:8.40px;color:#bdbdbd;transform:scaleX(0.9400)">21</div>
<div class="t" style="left:122.00px;top:112.03px;font-size:8.80px;color:#c4c4c4;transform:scaleX(0.9850)">Chest</div>
<div class="t" style="left:217.10px;top:112.03px;font-size:8.80px;color:#dadada">Normal</div>
<div class="t" style="left:293.40px;top:112.03px;font-size:8.80px;color:#dadada;transform:scaleX(0.9697)">None</div>
<div class="t" style="left:370.60px;top:112.03px;font-size:8.80px;color:#dadada;transform:scaleX(0.9697)">None</div>
<div class="t" style="left:84.80px;top:125.45px;font-size:8.40px;color:#bdbdbd;transform:scaleX(0.9400)">22</div>
<div class="t" style="left:122.00px;top:125.11px;font-size:8.80px;color:#c4c4c4;transform:scaleX(0.9850)">Pelvis</div>
<div class="t" style="left:217.10px;top:125.11px;font-size:8.80px;color:#dadada">Normal</div>
<div class="t" style="left:293.40px;top:125.11px;font-size:8.80px;color:#dadada;transform:scaleX(0.9697)">None</div>
<div class="t" style="left:370.60px;top:125.11px;font-size:8.80px;color:#dadada;transform:scaleX(0.9697)">None</div>
<div class="t" style="left:84.80px;top:138.53px;font-size:8.40px;color:#bdbdbd;transform:scaleX(0.9400)">23</div>
<div class="t" style="left:122.00px;top:138.19px;font-size:8.80px;color:#c4c4c4;transform:scaleX(0.9850)">Belly</div>
<div class="t" style="left:217.10px;top:138.19px;font-size:8.80px;color:#dadada">Normal</div>
<div class="t" style="left:293.40px;top:138.19px;font-size:8.80px;color:#dadada;transform:scaleX(0.9697)">None</div>
<div class="t" style="left:370.60px;top:138.19px;font-size:8.80px;color:#dadada;transform:scaleX(0.9697)">None</div>
<div class="t" style="left:84.80px;top:151.61px;font-size:8.40px;color:#bdbdbd;transform:scaleX(0.9400)">24</div>
<div class="t" style="left:122.00px;top:151.27px;font-size:8.80px;color:#c4c4c4;transform:scaleX(0.9850)">Head</div>
<div class="t" style="left:217.10px;top:151.27px;font-size:8.80px;color:#dadada">Normal</div>
<div class="t" style="left:293.40px;top:151.27px;font-size:8.80px;color:#dadada;transform:scaleX(0.9697)">None</div>
<div class="t" style="left:370.60px;top:151.27px;font-size:8.80px;color:#dadada;transform:scaleX(0.9697)">None</div>
<div class="t" style="left:84.80px;top:164.69px;font-size:8.40px;color:#bdbdbd;transform:scaleX(0.9400)">25</div>
<div class="t" style="left:122.00px;top:164.35px;font-size:8.80px;color:#c4c4c4;transform:scaleX(0.9850)">Neck</div>
<div class="t" style="left:217.10px;top:164.35px;font-size:8.80px;color:#dadada">Normal</div>
<div class="t" style="left:293.40px;top:164.35px;font-size:8.80px;color:#dadada;transform:scaleX(0.9697)">None</div>
<div class="t" style="left:370.60px;top:164.35px;font-size:8.80px;color:#dadada;transform:scaleX(0.9697)">None</div>
<div class="t" style="left:84.80px;top:177.77px;font-size:8.40px;color:#bdbdbd;transform:scaleX(0.9400)">26</div>
<div class="t" style="left:133.50px;top:177.43px;font-size:8.80px;color:#c4c4c4;transform:scaleX(0.9450)">S | Heel 2</div>
<div class="t" style="left:217.10px;top:177.43px;font-size:8.80px;color:#dadada">Normal</div>
<div class="t" style="left:293.40px;top:177.43px;font-size:8.80px;color:#dadada;transform:scaleX(0.9697)">None</div>
<div class="t" style="left:370.60px;top:177.43px;font-size:8.80px;color:#dadada;transform:scaleX(0.8946)">27. S | Tiptoe 2</div>
<div class="t" style="left:84.80px;top:190.85px;font-size:8.40px;color:#bdbdbd;transform:scaleX(0.9400)">27</div>
<div class="t" style="left:133.50px;top:190.51px;font-size:8.80px;color:#c4c4c4;transform:scaleX(0.9450)">S | Tiptoe 2</div>
<div class="t" style="left:217.10px;top:190.51px;font-size:8.80px;color:#dadada">Normal</div>
<div class="t" style="left:293.40px;top:190.51px;font-size:8.80px;color:#dadada;transform:scaleX(0.9697)">None</div>
<div class="t" style="left:370.60px;top:190.51px;font-size:8.80px;color:#dadada;transform:scaleX(0.8946)">28. S | Toes 2</div>
<div class="t" style="left:84.80px;top:203.93px;font-size:8.40px;color:#bdbdbd;transform:scaleX(0.9400)">28</div>
<div class="t" style="left:133.50px;top:203.59px;font-size:8.80px;color:#c4c4c4;transform:scaleX(0.9450)">S | Toes 2</div>
<div class="t" style="left:217.10px;top:203.59px;font-size:8.80px;color:#dadada">Normal</div>
<div class="t" style="left:293.40px;top:203.59px;font-size:8.80px;color:#dadada;transform:scaleX(0.9697)">None</div>
<div class="t" style="left:370.60px;top:203.59px;font-size:8.80px;color:#dadada;transform:scaleX(0.8946)">29. S | Foot 2</div>
<div class="t" style="left:84.80px;top:217.01px;font-size:8.40px;color:#bdbdbd;transform:scaleX(0.9400)">29</div>
<div class="t" style="left:133.50px;top:216.67px;font-size:8.80px;color:#c4c4c4;transform:scaleX(0.9450)">S | Foot 2</div>
<div class="t" style="left:217.10px;top:216.67px;font-size:8.80px;color:#dadada">Normal</div>
<div class="t" style="left:293.40px;top:216.67px;font-size:8.80px;color:#dadada;transform:scaleX(0.9697)">None</div>
<div class="t" style="left:370.60px;top:216.67px;font-size:8.80px;color:#dadada;transform:scaleX(0.8946)">30. S | Calf 2</div>
<div class="t" style="left:84.80px;top:230.09px;font-size:8.40px;color:#bdbdbd;transform:scaleX(0.9400)">30</div>
<div class="t" style="left:133.50px;top:229.75px;font-size:8.80px;color:#c4c4c4;transform:scaleX(0.9450)">S | Calf 2</div>
<div class="t" style="left:217.10px;top:229.75px;font-size:8.80px;color:#dadada">Normal</div>
<div class="t" style="left:293.40px;top:229.75px;font-size:8.80px;color:#dadada;transform:scaleX(0.9697)">None</div>
<div class="t" style="left:370.60px;top:229.75px;font-size:8.80px;color:#dadada;transform:scaleX(0.8946)">31. S | Thigh 2</div>
<div class="t" style="left:84.80px;top:243.17px;font-size:8.40px;color:#bdbdbd;transform:scaleX(0.9400)">31</div>
<div class="t" style="left:133.50px;top:242.83px;font-size:8.80px;color:#c4c4c4;transform:scaleX(0.9450)">S | Thigh 2</div>
<div class="t" style="left:217.10px;top:242.83px;font-size:8.80px;color:#dadada">Normal</div>
<div class="t" style="left:293.40px;top:242.83px;font-size:8.80px;color:#dadada;transform:scaleX(0.9697)">None</div>
<div class="t" style="left:370.60px;top:242.83px;font-size:8.80px;color:#dadada;transform:scaleX(0.9697)">None</div>
<div class="t" style="left:84.80px;top:256.25px;font-size:8.40px;color:#bdbdbd;transform:scaleX(0.9400)">32</div>
<div class="t" style="left:122.00px;top:255.91px;font-size:8.80px;color:#c4c4c4;transform:scaleX(0.9850)">R_Hips_Marker</div>
<div class="t" style="left:217.10px;top:255.91px;font-size:8.80px;color:#dadada">Normal</div>
<div class="t" style="left:293.40px;top:255.91px;font-size:8.80px;color:#dadada;transform:scaleX(0.9697)">None</div>
<div class="t" style="left:370.60px;top:255.91px;font-size:8.80px;color:#dadada;transform:scaleX(0.9697)">None</div>
<div class="t" style="left:84.80px;top:269.33px;font-size:8.40px;color:#bdbdbd;transform:scaleX(0.9400)">33</div>
<div class="t" style="left:122.00px;top:268.99px;font-size:8.80px;color:#c4c4c4;transform:scaleX(0.9850)">R_Knee_Marker</div>
<div class="t" style="left:217.10px;top:268.99px;font-size:8.80px;color:#dadada">Normal</div>
<div class="t" style="left:293.40px;top:268.99px;font-size:8.80px;color:#dadada;transform:scaleX(0.9697)">None</div>
<div class="t" style="left:370.60px;top:268.99px;font-size:8.80px;color:#dadada;transform:scaleX(0.9697)">None</div>
<div class="t" style="left:84.80px;top:282.41px;font-size:8.40px;color:#bdbdbd;transform:scaleX(0.9400)">34</div>
<div class="t" style="left:122.00px;top:282.07px;font-size:8.80px;color:#c4c4c4;transform:scaleX(0.9850)">R_Ankle_Marker</div>
<div class="t" style="left:217.10px;top:282.07px;font-size:8.80px;color:#dadada">Normal</div>
<div class="t" style="left:293.40px;top:282.07px;font-size:8.80px;color:#dadada;transform:scaleX(0.9697)">None</div>
<div class="t" style="left:370.60px;top:282.07px;font-size:8.80px;color:#dadada;transform:scaleX(0.9697)">None</div>
<div class="t" style="left:84.80px;top:295.49px;font-size:8.40px;color:#bdbdbd;transform:scaleX(0.9400)">35</div>
<div class="t" style="left:122.00px;top:295.15px;font-size:8.80px;color:#c4c4c4;transform:scaleX(0.9850)">R_Toes_Marker</div>
<div class="t" style="left:217.10px;top:295.15px;font-size:8.80px;color:#dadada">Normal</div>
<div class="t" style="left:293.40px;top:295.15px;font-size:8.80px;color:#dadada;transform:scaleX(0.9697)">None</div>
<div class="t" style="left:370.60px;top:295.15px;font-size:8.80px;color:#dadada;transform:scaleX(0.9697)">None</div>
<div class="t" style="left:84.80px;top:308.57px;font-size:8.40px;color:#bdbdbd;transform:scaleX(0.9400)">36</div>
<div class="t" style="left:122.00px;top:308.23px;font-size:8.80px;color:#c4c4c4;transform:scaleX(0.9850)">R_Thigh</div>
<div class="t" style="left:217.10px;top:308.23px;font-size:8.80px;color:#dadada">Normal</div>
<div class="t" style="left:293.40px;top:308.23px;font-size:8.80px;color:#dadada;transform:scaleX(0.9697)">None</div>
<div class="t" style="left:370.60px;top:308.23px;font-size:8.80px;color:#dadada;transform:scaleX(0.9697)">None</div>
<div class="t" style="left:84.80px;top:321.65px;font-size:8.40px;color:#bdbdbd;transform:scaleX(0.9400)">37</div>
<div class="t" style="left:122.00px;top:321.31px;font-size:8.80px;color:#c4c4c4;transform:scaleX(0.9850)">R_Calf</div>
<div class="t" style="left:217.10px;top:321.31px;font-size:8.80px;color:#dadada">Normal</div>
<div class="t" style="left:293.40px;top:321.31px;font-size:8.80px;color:#dadada;transform:scaleX(0.9697)">None</div>
<div class="t" style="left:370.60px;top:321.31px;font-size:8.80px;color:#dadada;transform:scaleX(0.9697)">None</div>
<div class="t" style="left:84.80px;top:334.73px;font-size:8.40px;color:#bdbdbd;transform:scaleX(0.9400)">38</div>
<div class="t" style="left:122.00px;top:334.39px;font-size:8.80px;color:#c4c4c4;transform:scaleX(0.9850)">R_Foot</div>
<div class="t" style="left:217.10px;top:334.39px;font-size:8.80px;color:#dadada">Normal</div>
<div class="t" style="left:293.40px;top:334.39px;font-size:8.80px;color:#dadada;transform:scaleX(0.9697)">None</div>
<div class="t" style="left:370.60px;top:334.39px;font-size:8.80px;color:#dadada;transform:scaleX(0.9697)">None</div>
<div class="t" style="left:84.80px;top:347.81px;font-size:8.40px;color:#bdbdbd;transform:scaleX(0.9400)">39</div>
<div class="t" style="left:122.00px;top:347.47px;font-size:8.80px;color:#c4c4c4;transform:scaleX(0.9850)">R_Toes</div>
<div class="t" style="left:217.10px;top:347.47px;font-size:8.80px;color:#dadada">Normal</div>
<div class="t" style="left:293.40px;top:347.47px;font-size:8.80px;color:#dadada;transform:scaleX(0.9697)">None</div>
<div class="t" style="left:370.60px;top:347.47px;font-size:8.80px;color:#dadada;transform:scaleX(0.9697)">None</div>
<div class="t" style="left:84.80px;top:360.89px;font-size:8.40px;color:#bdbdbd;transform:scaleX(0.9400)">40</div>
<div class="t" style="left:133.50px;top:360.55px;font-size:8.80px;color:#c4c4c4;transform:scaleX(0.9450)">S | Heel</div>
<div class="t" style="left:217.10px;top:360.55px;font-size:8.80px;color:#dadada">Normal</div>
<div class="t" style="left:293.40px;top:360.55px;font-size:8.80px;color:#dadada;transform:scaleX(0.9697)">None</div>
<div class="t" style="left:370.60px;top:360.55px;font-size:8.80px;color:#dadada;transform:scaleX(0.8946)">41. S | Tiptoe</div>
<div class="t" style="left:84.80px;top:373.97px;font-size:8.40px;color:#bdbdbd;transform:scaleX(0.9400)">41</div>
<div class="t" style="left:133.50px;top:373.63px;font-size:8.80px;color:#c4c4c4;transform:scaleX(0.9450)">S | Tiptoe</div>
<div class="t" style="left:217.10px;top:373.63px;font-size:8.80px;color:#dadada">Normal</div>
<div class="t" style="left:293.40px;top:373.63px;font-size:8.80px;color:#dadada;transform:scaleX(0.9697)">None</div>
<div class="t" style="left:370.60px;top:373.63px;font-size:8.80px;color:#dadada;transform:scaleX(0.8946)">42. S | Toes</div>
<div class="t" style="left:84.80px;top:387.05px;font-size:8.40px;color:#bdbdbd;transform:scaleX(0.9400)">42</div>
<div class="t" style="left:133.50px;top:386.71px;font-size:8.80px;color:#c4c4c4;transform:scaleX(0.9450)">S | Toes</div>
<div class="t" style="left:217.10px;top:386.71px;font-size:8.80px;color:#dadada">Normal</div>
<div class="t" style="left:293.40px;top:386.71px;font-size:8.80px;color:#dadada;transform:scaleX(0.9697)">None</div>
<div class="t" style="left:370.60px;top:386.71px;font-size:8.80px;color:#dadada;transform:scaleX(0.8946)">43. S | Foot</div>
<div class="t" style="left:84.80px;top:400.13px;font-size:8.40px;color:#bdbdbd;transform:scaleX(0.9400)">43</div>
<div class="t" style="left:133.50px;top:399.79px;font-size:8.80px;color:#c4c4c4;transform:scaleX(0.9450)">S | Foot</div>
<div class="t" style="left:217.10px;top:399.79px;font-size:8.80px;color:#dadada">Normal</div>
<div class="t" style="left:293.40px;top:399.79px;font-size:8.80px;color:#dadada;transform:scaleX(0.9697)">None</div>
<div class="t" style="left:370.60px;top:399.79px;font-size:8.80px;color:#dadada;transform:scaleX(0.8946)">44. S | Calf</div>
<div class="t" style="left:84.80px;top:413.21px;font-size:8.40px;color:#bdbdbd;transform:scaleX(0.9400)">44</div>
<div class="t" style="left:133.50px;top:412.87px;font-size:8.80px;color:#c4c4c4;transform:scaleX(0.9450)">S | Calf</div>
<div class="t" style="left:217.10px;top:412.87px;font-size:8.80px;color:#dadada">Normal</div>
<div class="t" style="left:293.40px;top:412.87px;font-size:8.80px;color:#dadada;transform:scaleX(0.9697)">None</div>
<div class="t" style="left:370.60px;top:412.87px;font-size:8.80px;color:#dadada;transform:scaleX(0.8946)">45. S | Thigh</div>
<div class="t" style="left:84.80px;top:426.29px;font-size:8.40px;color:#bdbdbd;transform:scaleX(0.9400)">45</div>
<div class="t" style="left:133.50px;top:425.95px;font-size:8.80px;color:#c4c4c4;transform:scaleX(0.9450)">S | Thigh</div>
<div class="t" style="left:217.10px;top:425.95px;font-size:8.80px;color:#dadada">Normal</div>
<div class="t" style="left:293.40px;top:425.95px;font-size:8.80px;color:#dadada;transform:scaleX(0.9697)">None</div>
<div class="t" style="left:370.60px;top:425.95px;font-size:8.80px;color:#dadada;transform:scaleX(0.9697)">None</div>
<div class="t" style="left:84.80px;top:439.37px;font-size:8.40px;color:#bdbdbd;transform:scaleX(0.9400)">46</div>
<div class="t" style="left:122.00px;top:439.03px;font-size:8.80px;color:#c4c4c4;transform:scaleX(0.9850)">L_Hips_Marker</div>
<div class="t" style="left:217.10px;top:439.03px;font-size:8.80px;color:#dadada">Normal</div>
<div class="t" style="left:293.40px;top:439.03px;font-size:8.80px;color:#dadada;transform:scaleX(0.9697)">None</div>
<div class="t" style="left:370.60px;top:439.03px;font-size:8.80px;color:#dadada;transform:scaleX(0.9697)">None</div>
<div class="t" style="left:84.80px;top:452.45px;font-size:8.40px;color:#bdbdbd;transform:scaleX(0.9400)">47</div>
<div class="t" style="left:122.00px;top:452.11px;font-size:8.80px;color:#c4c4c4;transform:scaleX(0.9850)">L_Knee_Marker</div>
<div class="t" style="left:217.10px;top:452.11px;font-size:8.80px;color:#dadada">Normal</div>
<div class="t" style="left:293.40px;top:452.11px;font-size:8.80px;color:#dadada;transform:scaleX(0.9697)">None</div>
<div class="t" style="left:370.60px;top:452.11px;font-size:8.80px;color:#dadada;transform:scaleX(0.9697)">None</div>
<div class="t" style="left:84.80px;top:465.53px;font-size:8.40px;color:#bdbdbd;transform:scaleX(0.9400)">48</div>
<div class="t" style="left:122.00px;top:465.19px;font-size:8.80px;color:#c4c4c4;transform:scaleX(0.9850)">L_Ankle_Marker</div>
<div class="t" style="left:217.10px;top:465.19px;font-size:8.80px;color:#dadada">Normal</div>
<div class="t" style="left:293.40px;top:465.19px;font-size:8.80px;color:#dadada;transform:scaleX(0.9697)">None</div>
<div class="t" style="left:370.60px;top:465.19px;font-size:8.80px;color:#dadada;transform:scaleX(0.9697)">None</div>
<div class="t" style="left:84.80px;top:478.61px;font-size:8.40px;color:#bdbdbd;transform:scaleX(0.9400)">49</div>
<div class="t" style="left:122.00px;top:478.27px;font-size:8.80px;color:#c4c4c4;transform:scaleX(0.9850)">L_Toes_Marker</div>
<div class="t" style="left:217.10px;top:478.27px;font-size:8.80px;color:#dadada">Normal</div>
<div class="t" style="left:293.40px;top:478.27px;font-size:8.80px;color:#dadada;transform:scaleX(0.9697)">None</div>
<div class="t" style="left:370.60px;top:478.27px;font-size:8.80px;color:#dadada;transform:scaleX(0.9697)">None</div>
<div class="t" style="left:84.80px;top:491.69px;font-size:8.40px;color:#bdbdbd;transform:scaleX(0.9400)">50</div>
<div class="t" style="left:122.00px;top:491.35px;font-size:8.80px;color:#c4c4c4;transform:scaleX(0.9850)">R_Thigh</div>
<div class="t" style="left:217.10px;top:491.35px;font-size:8.80px;color:#dadada">Normal</div>
<div class="t" style="left:293.40px;top:491.35px;font-size:8.80px;color:#dadada;transform:scaleX(0.9697)">None</div>
<div class="t" style="left:370.60px;top:491.35px;font-size:8.80px;color:#dadada;transform:scaleX(0.9697)">None</div>
<div class="t" style="left:84.80px;top:504.77px;font-size:8.40px;color:#bdbdbd;transform:scaleX(0.9400)">51</div>
<div class="t" style="left:122.00px;top:504.43px;font-size:8.80px;color:#c4c4c4;transform:scaleX(0.9850)">R_Calf</div>
<div class="t" style="left:217.10px;top:504.43px;font-size:8.80px;color:#dadada">Normal</div>
<div class="t" style="left:293.40px;top:504.43px;font-size:8.80px;color:#dadada;transform:scaleX(0.9697)">None</div>
<div class="t" style="left:370.60px;top:504.43px;font-size:8.80px;color:#dadada;transform:scaleX(0.9697)">None</div>
<div class="t" style="left:84.80px;top:517.85px;font-size:8.40px;color:#bdbdbd;transform:scaleX(0.9400)">52</div>
<div class="t" style="left:122.00px;top:517.51px;font-size:8.80px;color:#c4c4c4;transform:scaleX(0.9850)">L_Foot</div>
<div class="t" style="left:217.10px;top:517.51px;font-size:8.80px;color:#dadada">Normal</div>
<div class="t" style="left:293.40px;top:517.51px;font-size:8.80px;color:#dadada;transform:scaleX(0.9697)">None</div>
<div class="t" style="left:370.60px;top:517.51px;font-size:8.80px;color:#dadada;transform:scaleX(0.9697)">None</div>
<div class="t" style="left:84.80px;top:530.93px;font-size:8.40px;color:#bdbdbd;transform:scaleX(0.9400)">53</div>
<div class="t" style="left:122.00px;top:530.59px;font-size:8.80px;color:#c4c4c4;transform:scaleX(0.9850)">L_Toes</div>
<div class="t" style="left:217.10px;top:530.59px;font-size:8.80px;color:#dadada">Normal</div>
<div class="t" style="left:293.40px;top:530.59px;font-size:8.80px;color:#dadada;transform:scaleX(0.9697)">None</div>
<div class="t" style="left:370.60px;top:530.59px;font-size:8.80px;color:#dadada;transform:scaleX(0.9697)">None</div>
<div class="t" style="left:84.80px;top:544.01px;font-size:8.40px;color:#bdbdbd;transform:scaleX(0.9400)">54</div>
<div class="t" style="left:133.50px;top:543.67px;font-size:8.80px;color:#c4c4c4;transform:scaleX(0.9450)">S | Arm Tip</div>
<div class="t" style="left:217.10px;top:543.67px;font-size:8.80px;color:#dadada">Normal</div>
<div class="t" style="left:293.40px;top:543.67px;font-size:8.80px;color:#dadada;transform:scaleX(0.9697)">None</div>
<div class="t" style="left:370.60px;top:543.67px;font-size:8.80px;color:#dadada;transform:scaleX(0.8946)">55. S | Hand</div>
<div class="t" style="left:84.80px;top:557.09px;font-size:8.40px;color:#bdbdbd;transform:scaleX(0.9400)">55</div>
<div class="t" style="left:133.50px;top:556.75px;font-size:8.80px;color:#c4c4c4;transform:scaleX(0.9450)">S | Hand</div>
<div class="t" style="left:217.10px;top:556.75px;font-size:8.80px;color:#dadada">Normal</div>
<div class="t" style="left:293.40px;top:556.75px;font-size:8.80px;color:#dadada;transform:scaleX(0.9697)">None</div>
<div class="t" style="left:370.60px;top:556.75px;font-size:8.80px;color:#dadada;transform:scaleX(0.8946)">56. S | Forearm</div>
<div class="t" style="left:84.80px;top:570.17px;font-size:8.40px;color:#bdbdbd;transform:scaleX(0.9400)">56</div>
<div class="t" style="left:133.50px;top:569.83px;font-size:8.80px;color:#c4c4c4;transform:scaleX(0.9450)">S | Forearm</div>
<div class="t" style="left:217.10px;top:569.83px;font-size:8.80px;color:#dadada">Normal</div>
<div class="t" style="left:293.40px;top:569.83px;font-size:8.80px;color:#dadada;transform:scaleX(0.9697)">None</div>
<div class="t" style="left:370.60px;top:569.83px;font-size:8.80px;color:#dadada;transform:scaleX(0.8946)">57. S | Arm</div>
<div class="t" style="left:84.80px;top:583.25px;font-size:8.40px;color:#bdbdbd;transform:scaleX(0.9400)">57</div>
<div class="t" style="left:133.50px;top:582.91px;font-size:8.80px;color:#c4c4c4;transform:scaleX(0.9450)">S | Arm</div>
<div class="t" style="left:217.10px;top:582.91px;font-size:8.80px;color:#dadada">Normal</div>
<div class="t" style="left:293.40px;top:582.91px;font-size:8.80px;color:#dadada;transform:scaleX(0.9697)">None</div>
<div class="t" style="left:370.60px;top:582.91px;font-size:8.80px;color:#dadada;transform:scaleX(0.9697)">None</div>
<div class="t" style="left:84.80px;top:596.33px;font-size:8.40px;color:#bdbdbd;transform:scaleX(0.9400)">58</div>
<div class="t" style="left:122.00px;top:595.99px;font-size:8.80px;color:#c4c4c4;transform:scaleX(0.9850)">L_Shoulder_Marker</div>
<div class="t" style="left:217.10px;top:595.99px;font-size:8.80px;color:#dadada">Normal</div>
<div class="t" style="left:293.40px;top:595.99px;font-size:8.80px;color:#dadada;transform:scaleX(0.9697)">None</div>
<div class="t" style="left:370.60px;top:595.99px;font-size:8.80px;color:#dadada;transform:scaleX(0.9697)">None</div>
<div class="t" style="left:84.80px;top:609.41px;font-size:8.40px;color:#bdbdbd;transform:scaleX(0.9400)">59</div>
<div class="t" style="left:122.00px;top:609.07px;font-size:8.80px;color:#c4c4c4;transform:scaleX(0.9850)">L_Elbow_Marker</div>
<div class="t" style="left:217.10px;top:609.07px;font-size:8.80px;color:#dadada">Normal</div>
<div class="t" style="left:293.40px;top:609.07px;font-size:8.80px;color:#dadada;transform:scaleX(0.9697)">None</div>
<div class="t" style="left:370.60px;top:609.07px;font-size:8.80px;color:#dadada;transform:scaleX(0.9697)">None</div>
<div class="t" style="left:84.80px;top:622.49px;font-size:8.40px;color:#bdbdbd;transform:scaleX(0.9400)">60</div>
<div class="t" style="left:122.00px;top:622.15px;font-size:8.80px;color:#c4c4c4;transform:scaleX(0.9850)">L_Wrist_Marker</div>
<div class="t" style="left:217.10px;top:622.15px;font-size:8.80px;color:#dadada">Normal</div>
<div class="t" style="left:293.40px;top:622.15px;font-size:8.80px;color:#dadada;transform:scaleX(0.9697)">None</div>
<div class="t" style="left:370.60px;top:622.15px;font-size:8.80px;color:#dadada;transform:scaleX(0.9697)">None</div>
<div class="t" style="left:84.80px;top:635.57px;font-size:8.40px;color:#bdbdbd;transform:scaleX(0.9400)">61</div>
<div class="t" style="left:122.00px;top:635.23px;font-size:8.80px;color:#c4c4c4;transform:scaleX(0.9850)">L_Arm</div>
<div class="t" style="left:217.10px;top:635.23px;font-size:8.80px;color:#dadada">Normal</div>
<div class="t" style="left:293.40px;top:635.23px;font-size:8.80px;color:#dadada;transform:scaleX(0.9697)">None</div>
<div class="t" style="left:370.60px;top:635.23px;font-size:8.80px;color:#dadada;transform:scaleX(0.9697)">None</div>
<div class="t" style="left:84.80px;top:648.65px;font-size:8.40px;color:#bdbdbd;transform:scaleX(0.9400)">62</div>
<div class="t" style="left:122.00px;top:648.31px;font-size:8.80px;color:#c4c4c4;transform:scaleX(0.9850)">L_ForeArm</div>
<div class="t" style="left:217.10px;top:648.31px;font-size:8.80px;color:#dadada">Normal</div>
<div class="t" style="left:293.40px;top:648.31px;font-size:8.80px;color:#dadada;transform:scaleX(0.9697)">None</div>
<div class="t" style="left:370.60px;top:648.31px;font-size:8.80px;color:#dadada;transform:scaleX(0.9697)">None</div>
<div class="t" style="left:84.80px;top:661.73px;font-size:8.40px;color:#bdbdbd;transform:scaleX(0.9400)">63</div>
<div class="t" style="left:122.00px;top:661.39px;font-size:8.80px;color:#c4c4c4;transform:scaleX(0.9850)">L_Hand</div>
<div class="t" style="left:217.10px;top:661.39px;font-size:8.80px;color:#dadada">Normal</div>
<div class="t" style="left:293.40px;top:661.39px;font-size:8.80px;color:#dadada;transform:scaleX(0.9697)">None</div>
<div class="t" style="left:370.60px;top:661.39px;font-size:8.80px;color:#dadada;transform:scaleX(0.9697)">None</div>
</div>
<div class="a" style="left:489px;top:86px;width:213px;height:43px;background:#282828"></div>
<div class="a" style="left:489px;top:89.5px;width:200px;height:1.5px;background:#111"></div>
<div class="a" style="left:490px;top:90.8px;width:198px;height:6.4px;background:#727272"></div>
<div class="a" style="left:489px;top:97.2px;width:200px;height:1px;background:#151515"></div>
<div class="a" style="left:489px;top:98.2px;width:200px;height:14px;background:#212121"></div>
<div class="a" style="left:489px;top:112px;width:200px;height:1px;background:#111"></div>
<div class="a" style="left:490px;top:113px;width:198px;height:12px;background:#6e6e6e"></div>
<div class="a" style="left:489px;top:125px;width:200px;height:4px;background:#161616"></div>
<div class="t" style="left:577.50px;top:99.62px;font-size:8.60px;color:#a9a9a9;transform:scaleX(0.8714)">00:15s</div>
<div class="a" style="left:671px;top:98px;width:17px;height:12px;overflow:hidden"><div class="t" style="left:0.00px;top:1.62px;font-size:8.60px;color:#a9a9a9;transform:scaleX(0.8714)">00:30s</div></div>
<div class="t" style="left:500.00px;top:99.62px;font-size:8.60px;color:#a9a9a9;transform:scaleX(0.7707)">0s</div>
<div class="a" style="left:682.5px;top:129px;width:20.5px;height:672px;background:#262626"></div>
<div class="a" style="left:689.5px;top:264px;width:11px;height:537px;background:#333;border-radius:5px"></div>
<div class="a" style="left:702px;top:39.5px;width:3px;height:778px;background:#171717"></div>
<div class="a" style="left:489px;top:129px;width:7.5px;height:672px;background:#262626"></div>
<div class="a" style="left:489px;top:129px;width:1px;height:672px;background:#141414"></div>
<svg style="left:0;top:0" width="703" height="836">
<clipPath id="tlc"><rect x="489" y="129" width="214" height="672"/></clipPath><g clip-path="url(#tlc)">
<rect x="496.5" y="120.72" width="186" height="13.08" fill="#8b6c30"/>
<rect x="496.5" y="133.05" width="186" height="1.7" fill="#553f12"/>
<rect x="496.5" y="133.80" width="186" height="13.08" fill="#8b6c30"/>
<rect x="496.5" y="146.13" width="186" height="1.7" fill="#553f12"/>
<rect x="496.5" y="146.88" width="186" height="13.08" fill="#8b6c30"/>
<rect x="496.5" y="159.21" width="186" height="1.7" fill="#553f12"/>
<rect x="496.5" y="159.96" width="186" height="13.08" fill="#8b6c30"/>
<rect x="496.5" y="172.29" width="186" height="1.7" fill="#553f12"/>
<rect x="496.5" y="173.04" width="186" height="13.08" fill="#8b6c30"/>
<rect x="496.5" y="185.37" width="186" height="1.7" fill="#553f12"/>
<rect x="496.5" y="186.12" width="186" height="13.08" fill="#8b6c30"/>
<rect x="496.5" y="198.45" width="186" height="1.7" fill="#553f12"/>
<rect x="496.5" y="199.20" width="186" height="13.08" fill="#8b6c30"/>
<rect x="496.5" y="211.53" width="186" height="1.7" fill="#553f12"/>
<rect x="496.5" y="212.28" width="186" height="13.08" fill="#8b6c30"/>
<rect x="496.5" y="224.61" width="186" height="1.7" fill="#553f12"/>
<rect x="496.5" y="225.36" width="186" height="13.08" fill="#8b6c30"/>
<rect x="496.5" y="237.69" width="186" height="1.7" fill="#553f12"/>
<rect x="496.5" y="238.44" width="186" height="13.08" fill="#8b6c30"/>
<rect x="496.5" y="250.77" width="186" height="1.7" fill="#553f12"/>
<rect x="496.5" y="251.52" width="186" height="13.08" fill="#8b6c30"/>
<rect x="496.5" y="263.85" width="186" height="1.7" fill="#553f12"/>
<rect x="496.5" y="264.60" width="186" height="13.08" fill="#8b6c30"/>
<rect x="496.5" y="276.93" width="186" height="1.7" fill="#553f12"/>
<rect x="496.5" y="277.68" width="186" height="13.08" fill="#8b6c30"/>
<rect x="496.5" y="290.01" width="186" height="1.7" fill="#553f12"/>
<rect x="496.5" y="290.76" width="186" height="13.08" fill="#8b6c30"/>
<rect x="496.5" y="303.09" width="186" height="1.7" fill="#553f12"/>
<rect x="496.5" y="303.84" width="186" height="13.08" fill="#8f8b4c"/>
<rect x="496.5" y="316.17" width="186" height="1.7" fill="#40400c"/>
<rect x="496.5" y="316.92" width="186" height="13.08" fill="#8f8b4c"/>
<rect x="496.5" y="329.25" width="186" height="1.7" fill="#40400c"/>
<rect x="496.5" y="330.00" width="186" height="13.08" fill="#8f8b4c"/>
<rect x="496.5" y="342.33" width="186" height="1.7" fill="#40400c"/>
<rect x="496.5" y="343.08" width="186" height="13.08" fill="#8f8b4c"/>
<rect x="496.5" y="355.41" width="186" height="1.7" fill="#40400c"/>
<rect x="496.5" y="356.16" width="186" height="13.08" fill="#8f8b4c"/>
<rect x="496.5" y="368.49" width="186" height="1.7" fill="#40400c"/>
<rect x="496.5" y="369.24" width="186" height="13.08" fill="#8f8b4c"/>
<rect x="496.5" y="381.57" width="186" height="1.7" fill="#40400c"/>
<rect x="496.5" y="382.32" width="186" height="13.08" fill="#8f8b4c"/>
<rect x="496.5" y="394.65" width="186" height="1.7" fill="#40400c"/>
<rect x="496.5" y="395.40" width="186" height="13.08" fill="#8f8b4c"/>
<rect x="496.5" y="407.73" width="186" height="1.7" fill="#40400c"/>
<rect x="496.5" y="408.48" width="186" height="13.08" fill="#8f8b4c"/>
<rect x="496.5" y="420.81" width="186" height="1.7" fill="#40400c"/>
<rect x="496.5" y="421.56" width="186" height="13.08" fill="#8f8b4c"/>
<rect x="496.5" y="433.89" width="186" height="1.7" fill="#40400c"/>
<rect x="496.5" y="434.64" width="186" height="13.08" fill="#8f8b4c"/>
<rect x="496.5" y="446.97" width="186" height="1.7" fill="#40400c"/>
<rect x="496.5" y="447.72" width="186" height="13.08" fill="#8f8b4c"/>
<rect x="496.5" y="460.05" width="186" height="1.7" fill="#40400c"/>
<rect x="496.5" y="460.80" width="186" height="13.08" fill="#8f8b4c"/>
<rect x="496.5" y="473.13" width="186" height="1.7" fill="#40400c"/>
<rect x="496.5" y="473.88" width="186" height="13.08" fill="#8f8b4c"/>
<rect x="496.5" y="486.21" width="186" height="1.7" fill="#40400c"/>
<rect x="496.5" y="486.96" width="186" height="13.08" fill="#56714a"/>
<rect x="496.5" y="499.29" width="186" height="1.7" fill="#2c4424"/>
<rect x="496.5" y="500.04" width="186" height="13.08" fill="#56714a"/>
<rect x="496.5" y="512.37" width="186" height="1.7" fill="#2c4424"/>
<rect x="496.5" y="513.12" width="186" height="13.08" fill="#56714a"/>
<rect x="496.5" y="525.45" width="186" height="1.7" fill="#2c4424"/>
<rect x="496.5" y="526.20" width="186" height="13.08" fill="#56714a"/>
<rect x="496.5" y="538.53" width="186" height="1.7" fill="#2c4424"/>
<rect x="496.5" y="539.28" width="186" height="13.08" fill="#56714a"/>
<rect x="496.5" y="551.61" width="186" height="1.7" fill="#2c4424"/>
<rect x="496.5" y="552.36" width="186" height="13.08" fill="#56714a"/>
<rect x="496.5" y="564.69" width="186" height="1.7" fill="#2c4424"/>
<rect x="496.5" y="565.44" width="186" height="13.08" fill="#56714a"/>
<rect x="496.5" y="577.77" width="186" height="1.7" fill="#2c4424"/>
<rect x="496.5" y="578.52" width="186" height="13.08" fill="#56714a"/>
<rect x="496.5" y="590.85" width="186" height="1.7" fill="#2c4424"/>
<rect x="496.5" y="591.60" width="186" height="13.08" fill="#56714a"/>
<rect x="496.5" y="603.93" width="186" height="1.7" fill="#2c4424"/>
<rect x="496.5" y="604.68" width="186" height="13.08" fill="#56714a"/>
<rect x="496.5" y="617.01" width="186" height="1.7" fill="#2c4424"/>
<rect x="496.5" y="617.76" width="186" height="13.08" fill="#56714a"/>
<rect x="496.5" y="630.09" width="186" height="1.7" fill="#2c4424"/>
<rect x="496.5" y="630.84" width="186" height="13.08" fill="#56714a"/>
<rect x="496.5" y="643.17" width="186" height="1.7" fill="#2c4424"/>
<rect x="496.5" y="643.92" width="186" height="13.08" fill="#56714a"/>
<rect x="496.5" y="656.25" width="186" height="1.7" fill="#2c4424"/>
<rect x="496.5" y="657.00" width="186" height="13.08" fill="#56714a"/>
<rect x="496.5" y="669.33" width="186" height="1.7" fill="#2c4424"/>
<rect x="496.5" y="670.08" width="186" height="13.08" fill="#5a6098"/>
<rect x="496.5" y="682.41" width="186" height="1.7" fill="#2a2f5e"/>
<rect x="496.5" y="683.16" width="186" height="13.08" fill="#5a6098"/>
<rect x="496.5" y="695.49" width="186" height="1.7" fill="#2a2f5e"/>
<rect x="496.5" y="696.24" width="186" height="13.08" fill="#5a6098"/>
<rect x="496.5" y="708.57" width="186" height="1.7" fill="#2a2f5e"/>
<rect x="496.5" y="709.32" width="186" height="13.08" fill="#5a6098"/>
<rect x="496.5" y="721.65" width="186" height="1.7" fill="#2a2f5e"/>
<rect x="496.5" y="722.40" width="186" height="13.08" fill="#5a6098"/>
<rect x="496.5" y="734.73" width="186" height="1.7" fill="#2a2f5e"/>
<rect x="496.5" y="735.48" width="186" height="13.08" fill="#5a6098"/>
<rect x="496.5" y="747.81" width="186" height="1.7" fill="#2a2f5e"/>
<rect x="496.5" y="748.56" width="186" height="13.08" fill="#5a6098"/>
<rect x="496.5" y="760.89" width="186" height="1.7" fill="#2a2f5e"/>
<rect x="496.5" y="761.64" width="186" height="13.08" fill="#5a6098"/>
<rect x="496.5" y="773.97" width="186" height="1.7" fill="#2a2f5e"/>
<rect x="496.5" y="774.72" width="186" height="13.08" fill="#5a6098"/>
<rect x="496.5" y="787.05" width="186" height="1.7" fill="#2a2f5e"/>
<rect x="496.5" y="787.80" width="186" height="13.08" fill="#5a6098"/>
<rect x="496.5" y="800.13" width="186" height="1.7" fill="#2a2f5e"/>
</g>
<path d="M495.8 101 V801" stroke="#8fa8d8" stroke-width="1"/>
<g clip-path="url(#tlc)"><path d="M497 122.26 h40.0 v8.4 h-40.0 l-1.5 -2 Z" fill="#e0d6b6"/>
<path d="M492.6 133.46 a3.3 5.4 0 0 1 6.6 0 Z" fill="#c9ccd8"/></g>
<g clip-path="url(#tlc)"><path d="M497 135.34 h40.0 v8.4 h-40.0 l-1.5 -2 Z" fill="#e0d6b6"/>
<path d="M492.6 146.54 a3.3 5.4 0 0 1 6.6 0 Z" fill="#c9ccd8"/></g>
<g clip-path="url(#tlc)"><path d="M497 148.42 h40.0 v8.4 h-40.0 l-1.5 -2 Z" fill="#e0d6b6"/>
<path d="M492.6 159.62 a3.3 5.4 0 0 1 6.6 0 Z" fill="#c9ccd8"/></g>
<g clip-path="url(#tlc)"><path d="M497 161.50 h40.0 v8.4 h-40.0 l-1.5 -2 Z" fill="#e0d6b6"/>
<path d="M492.6 172.70 a3.3 5.4 0 0 1 6.6 0 Z" fill="#c9ccd8"/></g>
<g clip-path="url(#tlc)"><path d="M497 174.58 h40.0 v8.4 h-40.0 l-1.5 -2 Z" fill="#e0d6b6"/>
<path d="M492.6 185.78 a3.3 5.4 0 0 1 6.6 0 Z" fill="#c9ccd8"/></g>
<g clip-path="url(#tlc)"><path d="M497 305.38 h55.0 v8.4 h-55.0 l-1.5 -2 Z" fill="#e2dfc0"/>
<path d="M492.6 316.58 a3.3 5.4 0 0 1 6.6 0 Z" fill="#c9ccd8"/></g>
<g clip-path="url(#tlc)"><path d="M497 318.46 h55.0 v8.4 h-55.0 l-1.5 -2 Z" fill="#e2dfc0"/>
<path d="M492.6 329.66 a3.3 5.4 0 0 1 6.6 0 Z" fill="#c9ccd8"/></g>
<g clip-path="url(#tlc)"><path d="M497 331.54 h40.0 v8.4 h-40.0 l-1.5 -2 Z" fill="#e2dfc0"/>
<path d="M492.6 342.74 a3.3 5.4 0 0 1 6.6 0 Z" fill="#c9ccd8"/></g>
<g clip-path="url(#tlc)"><path d="M497 344.62 h40.0 v8.4 h-40.0 l-1.5 -2 Z" fill="#e2dfc0"/>
<path d="M492.6 355.82 a3.3 5.4 0 0 1 6.6 0 Z" fill="#c9ccd8"/></g>
<g clip-path="url(#tlc)"><path d="M497 357.70 h40.0 v8.4 h-40.0 l-1.5 -2 Z" fill="#e2dfc0"/>
<path d="M492.6 368.90 a3.3 5.4 0 0 1 6.6 0 Z" fill="#c9ccd8"/></g>
<g clip-path="url(#tlc)"><path d="M497 370.78 h40.0 v8.4 h-40.0 l-1.5 -2 Z" fill="#e2dfc0"/>
<path d="M492.6 381.98 a3.3 5.4 0 0 1 6.6 0 Z" fill="#c9ccd8"/></g>
<g clip-path="url(#tlc)"><path d="M497 488.50 h55.0 v8.4 h-55.0 l-1.5 -2 Z" fill="#d3dcc4"/>
<path d="M492.6 499.70 a3.3 5.4 0 0 1 6.6 0 Z" fill="#c9ccd8"/></g>
<g clip-path="url(#tlc)"><path d="M497 501.58 h55.0 v8.4 h-55.0 l-1.5 -2 Z" fill="#d3dcc4"/>
<path d="M492.6 512.78 a3.3 5.4 0 0 1 6.6 0 Z" fill="#c9ccd8"/></g>
<g clip-path="url(#tlc)"><path d="M497 514.66 h40.0 v8.4 h-40.0 l-1.5 -2 Z" fill="#d3dcc4"/>
<path d="M492.6 525.86 a3.3 5.4 0 0 1 6.6 0 Z" fill="#c9ccd8"/></g>
<g clip-path="url(#tlc)"><path d="M497 527.74 h40.0 v8.4 h-40.0 l-1.5 -2 Z" fill="#d3dcc4"/>
<path d="M492.6 538.94 a3.3 5.4 0 0 1 6.6 0 Z" fill="#c9ccd8"/></g>
<g clip-path="url(#tlc)"><path d="M497 540.82 h40.0 v8.4 h-40.0 l-1.5 -2 Z" fill="#d3dcc4"/>
<path d="M492.6 552.02 a3.3 5.4 0 0 1 6.6 0 Z" fill="#c9ccd8"/></g>
<g clip-path="url(#tlc)"><path d="M497 553.90 h40.0 v8.4 h-40.0 l-1.5 -2 Z" fill="#d3dcc4"/>
<path d="M492.6 565.10 a3.3 5.4 0 0 1 6.6 0 Z" fill="#c9ccd8"/></g>
<g clip-path="url(#tlc)"><path d="M497 671.62 h55.0 v8.4 h-55.0 l-1.5 -2 Z" fill="#d2d4e6"/>
<path d="M492.6 682.82 a3.3 5.4 0 0 1 6.6 0 Z" fill="#c9ccd8"/></g>
<g clip-path="url(#tlc)"><path d="M497 684.70 h40.0 v8.4 h-40.0 l-1.5 -2 Z" fill="#d2d4e6"/>
<path d="M492.6 695.90 a3.3 5.4 0 0 1 6.6 0 Z" fill="#c9ccd8"/></g>
<g clip-path="url(#tlc)"><path d="M497 697.78 h40.0 v8.4 h-40.0 l-1.5 -2 Z" fill="#d2d4e6"/>
<path d="M492.6 708.98 a3.3 5.4 0 0 1 6.6 0 Z" fill="#c9ccd8"/></g>
<g clip-path="url(#tlc)"><path d="M497 710.86 h40.0 v8.4 h-40.0 l-1.5 -2 Z" fill="#d2d4e6"/>
<path d="M492.6 722.06 a3.3 5.4 0 0 1 6.6 0 Z" fill="#c9ccd8"/></g>
<path d="M490.5 100 h10.6 v5.5 l-5.3 5 l-5.3 -5 Z" fill="#6c9bf0"/>
<path d="M494 104 h3.5" stroke="#27427a" stroke-width="1"/>
<path d="M490 91 h3 a3.2 3.2 0 0 1 0 6.4 h-3 Z" fill="#6c9bf0"/>
<path d="M684.5 91 h3.5 v6.4 h-3.5 a3.2 3.2 0 0 1 0 -6.4 Z" fill="#6c9bf0"/>
<rect x="490.5" y="113.5" width="5" height="11.5" rx="2.5" fill="#6c9bf0"/>
<rect x="683" y="113.5" width="4.5" height="11.5" rx="2.2" fill="#6c9bf0"/>
<path d="M589.5 108.5 v3 M682.5 108.5 v3" stroke="#9a9a9a" stroke-width="0.8"/>
<path d="M691 115 h9 v7 l-4.5 3.5 l-4.5 -3.5 Z" fill="#c8c8c8"/>
<path d="M695 131 h5 v6 h-5 Z" fill="#c8c8c8"/><path d="M690 134 l5 -3 M690 134 l5 4" stroke="#c8c8c8" stroke-width="1"/><circle cx="693.5" cy="137.5" r="2" fill="none" stroke="#c8c8c8" stroke-width="1"/>
</svg>
<div class="t" style="left:501.80px;top:136.17px;font-size:8.00px;color:#161616;transform:scaleX(0.9582);-webkit-text-stroke-width:0.4px">Structure</div>
<div class="t" style="left:501.80px;top:149.25px;font-size:8.00px;color:#161616;transform:scaleX(0.9582);-webkit-text-stroke-width:0.4px">Structure</div>
<div class="t" style="left:501.80px;top:162.33px;font-size:8.00px;color:#161616;transform:scaleX(0.9582);-webkit-text-stroke-width:0.4px">Structure</div>
<div class="t" style="left:501.80px;top:175.41px;font-size:8.00px;color:#161616;transform:scaleX(0.9582);-webkit-text-stroke-width:0.4px">Structure</div>
<div class="t" style="left:501.80px;top:306.21px;font-size:8.00px;color:#161616;transform:scaleX(0.9661);-webkit-text-stroke-width:0.4px">Structure end</div>
<div class="t" style="left:501.80px;top:319.29px;font-size:8.00px;color:#161616;transform:scaleX(0.9661);-webkit-text-stroke-width:0.4px">Structure end</div>
<div class="t" style="left:501.80px;top:332.37px;font-size:8.00px;color:#161616;transform:scaleX(0.9582);-webkit-text-stroke-width:0.4px">Structure</div>
<div class="t" style="left:501.80px;top:345.45px;font-size:8.00px;color:#161616;transform:scaleX(0.9582);-webkit-text-stroke-width:0.4px">Structure</div>
<div class="t" style="left:501.80px;top:358.53px;font-size:8.00px;color:#161616;transform:scaleX(0.9582);-webkit-text-stroke-width:0.4px">Structure</div>
<div class="t" style="left:501.80px;top:371.61px;font-size:8.00px;color:#161616;transform:scaleX(0.9582);-webkit-text-stroke-width:0.4px">Structure</div>
<div class="t" style="left:501.80px;top:489.33px;font-size:8.00px;color:#161616;transform:scaleX(0.9661);-webkit-text-stroke-width:0.4px">Structure end</div>
<div class="t" style="left:501.80px;top:502.41px;font-size:8.00px;color:#161616;transform:scaleX(0.9661);-webkit-text-stroke-width:0.4px">Structure end</div>
<div class="t" style="left:501.80px;top:515.49px;font-size:8.00px;color:#161616;transform:scaleX(0.9582);-webkit-text-stroke-width:0.4px">Structure</div>
<div class="t" style="left:501.80px;top:528.57px;font-size:8.00px;color:#161616;transform:scaleX(0.9582);-webkit-text-stroke-width:0.4px">Structure</div>
<div class="t" style="left:501.80px;top:541.65px;font-size:8.00px;color:#161616;transform:scaleX(0.9582);-webkit-text-stroke-width:0.4px">Structure</div>
<div class="t" style="left:501.80px;top:554.73px;font-size:8.00px;color:#161616;transform:scaleX(0.9582);-webkit-text-stroke-width:0.4px">Structure</div>
<div class="t" style="left:501.80px;top:672.45px;font-size:8.00px;color:#161616;transform:scaleX(0.9661);-webkit-text-stroke-width:0.4px">Structure end</div>
<div class="t" style="left:501.80px;top:685.53px;font-size:8.00px;color:#161616;transform:scaleX(0.9582);-webkit-text-stroke-width:0.4px">Structure</div>
<div class="t" style="left:501.80px;top:698.61px;font-size:8.00px;color:#161616;transform:scaleX(0.9582);-webkit-text-stroke-width:0.4px">Structure</div>
<div class="t" style="left:501.80px;top:711.69px;font-size:8.00px;color:#161616;transform:scaleX(0.9582);-webkit-text-stroke-width:0.4px">Structure</div>
<div class="a" style="left:18px;top:801px;width:684px;height:1.5px;background:#121212"></div>
<div class="a" style="left:18px;top:802.5px;width:684px;height:15px;background:#242424"></div>
<div class="a" style="left:231.5px;top:802.5px;width:133px;height:13px;background:#1d1d1d"></div>
<div class="t" style="left:250.20px;top:804.15px;font-size:8.80px;color:#b3b3b3;transform:scaleX(0.9565)">Toggle Switches / Modes</div>
<svg style="left:0;top:0" width="703" height="836"><rect x="24.5" y="804.5" width="6" height="7" fill="none" stroke="#bdbdbd" stroke-width="1"/><rect x="27.5" y="807.5" width="6" height="6" fill="#242424" stroke="#bdbdbd" stroke-width="1"/><circle cx="41" cy="807" r="3.2" fill="none" stroke="#5a86d8" stroke-width="1.2"/><circle cx="44" cy="810" r="3.2" fill="#5a86d8"/><path d="M54 808 l2 -4 h3 l2 4 l-2 4 h-3 Z" fill="none" stroke="#bdbdbd" stroke-width="1.3"/><path d="M493.5 810 l3.5 -3 l3.5 3 Z" fill="#c8c8c8"/><circle cx="514" cy="809" r="3" fill="none" stroke="#c8c8c8" stroke-width="1.2"/><path d="M517 809 H548" stroke="#444" stroke-width="1"/><path d="M557 811 l4 -5 l2 2 l2 -2 l4 5 Z" fill="#c8c8c8"/></svg>
<div class="a" style="left:705px;top:39.5px;width:193px;height:110.5px;background:#282828"></div>
<div class="t" style="left:714.70px;top:47.02px;font-size:8.60px;color:#e0e0e0;transform:scaleX(0.9899)">Info</div>
<div class="hb" style="left:735.8px;top:48.5px;width:6.5px;height:6.2px;color:#9a9a9a"></div>
<div class="a" style="left:713.3px;top:58.4px;width:29.4px;height:1.8px;background:#cfcfcf"></div>
<div class="t" style="left:760.20px;top:47.02px;font-size:8.60px;color:#a9a9a9;transform:scaleX(0.9775)">Preview</div>
<div class="a" style="left:711.3px;top:75px;width:15.3px;height:14.7px;background:#000"></div>
<div class="t" style="left:730.80px;top:66.50px;font-size:7.80px;color:#b0b0b0;transform:scaleX(0.9000)">R :</div>
<div class="t" style="left:730.80px;top:76.70px;font-size:7.80px;color:#b0b0b0;transform:scaleX(0.9000)">G :</div>
<div class="t" style="left:730.80px;top:86.80px;font-size:7.80px;color:#b0b0b0;transform:scaleX(0.9000)">B :</div>
<div class="t" style="left:730.80px;top:96.90px;font-size:7.80px;color:#b0b0b0;transform:scaleX(0.9000)">A :</div>
<div class="t" style="left:746.00px;top:96.90px;font-size:7.80px;color:#b0b0b0">0</div>
<div class="a" style="left:784px;top:65px;width:1px;height:40.4px;background:#2c2c2c"></div>
<div class="t" style="left:800.70px;top:66.50px;font-size:7.80px;color:#b0b0b0;transform:scaleX(0.9000)">X :</div>
<div class="t" style="left:813.60px;top:66.50px;font-size:7.80px;color:#b0b0b0;transform:scaleX(1.0604)">1232</div>
<div class="t" style="left:800.70px;top:76.70px;font-size:7.80px;color:#b0b0b0;transform:scaleX(0.9000)">Y :</div>
<div class="t" style="left:814.50px;top:76.70px;font-size:7.80px;color:#b0b0b0;transform:scaleX(1.0892)">4664</div>
<svg style="left:0;top:0" width="900" height="120"><path d="M795.2 83.3 v7.4 M791.5 87 h7.4" stroke="#bdbdbd" stroke-width="1"/></svg>
<div class="a" style="left:710px;top:110.5px;width:183px;height:1px;background:#2c2c2c"></div>
<div class="a" style="left:705px;top:150px;width:193px;height:3.5px;background:#161616"></div>
<div class="a" style="left:705px;top:153.5px;width:193px;height:249.5px;background:#282828"></div>
<svg style="left:0;top:0" width="900" height="200"><path d="M713.8 162 l3.6 3.6 M717.4 162 l-3.6 3.6" stroke="#8a8a8a" stroke-width="0.9"/></svg>
<div class="a" style="left:725.1px;top:159.1px;width:7.7px;height:7.7px;background:#e9a73a"></div>
<div class="t" style="left:754.70px;top:159.18px;font-size:9.00px;color:#c3c3c3;transform:scaleX(0.9242)">Effect Controls</div>
<div class="t" style="left:810.90px;top:159.18px;font-size:9.00px;color:#6d9ef0;transform:scaleX(0.8965)">S | Spine Tip</div>
<div class="hb" style="left:863px;top:160.9px;width:7px;height:6.2px;color:#9a9a9a"></div>
<div class="t" style="left:709.10px;top:176.88px;font-size:9.00px;color:#b5b5b5;transform:scaleX(0.9059)">Mogran_RIG - S | Spine Tip</div>
<div class="a" style="left:705px;top:171.5px;width:181px;height:0.8px;background:#2a2a2a"></div>
<div class="a" style="left:705px;top:190px;width:181px;height:12px;background:#1d1d1d"></div>
<div class="a" style="left:705px;top:202px;width:181px;height:14px;background:#292929"></div>
<div class="a" style="left:705px;top:215.5px;width:181px;height:174px;background:#282828"></div>
<div class="a" style="left:886px;top:172px;width:11.5px;height:217px;background:#252525"></div>
<svg style="left:0;top:0" width="900" height="420"><rect x="741" y="162" width="6" height="5" fill="#c8c8c8"/><path d="M742.2 162 v-1.8 a1.8 1.8 0 0 1 3.6 0" stroke="#c8c8c8" stroke-width="1" fill="none"/><path d="M711 192.5 h6.5 l-3.25 5.5 Z" fill="#d0d0d0"/><path d="M723 205.5 l5 3.5 l-5 3.5 Z" fill="#cfcfcf"/></svg>
<div class="t" style="left:719.80px;top:190.23px;font-size:10.00px;color:#a8a8a8;transform:scaleX(0.9899);font-style:italic;font-family:'Liberation Serif',serif;-webkit-text-stroke-width:0">fx</div>
<div class="t" style="left:732.80px;top:191.08px;font-size:9.00px;color:#cdcdcd;transform:scaleX(0.9887)">Structure</div>
<div class="t" style="left:815.70px;top:191.08px;font-size:9.00px;color:#6d9ef0;transform:scaleX(0.8549)">Reset</div>
<div class="t" style="left:731.00px;top:203.58px;font-size:9.00px;color:#b8b8b8;transform:scaleX(0.9307)">Display options</div>
<div class="a" style="left:705px;top:403px;width:193px;height:3.5px;background:#161616"></div>
<div class="a" style="left:898px;top:39.5px;width:5px;height:778px;background:#141414"></div>
<div class="a" style="left:705px;top:406.5px;width:193px;height:410.5px;background:#282828"></div>
<div class="t" style="left:714.60px;top:413.18px;font-size:9.00px;color:#d0d0d0;transform:scaleX(0.8986)">Duik Bassel</div>
<div class="hb" style="left:764px;top:414.8px;width:7px;height:6.2px;color:#9a9a9a"></div>
<div class="a" style="left:709px;top:431px;width:187px;height:17.7px;background:#1a1a1a"></div>
<div class="a" style="left:709px;top:449px;width:187px;height:17.5px;background:#3b3b3b"></div>
<div class="t" style="left:788.00px;top:453.48px;font-size:9.00px;color:#a9a9a9;transform:scaleX(0.9174)">Rigging</div>
<div class="a" style="left:709px;top:466.5px;width:187px;height:25.5px;background:#1f1f1f"></div>
<div class="a" style="left:709px;top:492px;width:187px;height:17px;background:#3b3b3b"></div>
<div class="t" style="left:782.40px;top:495.08px;font-size:9.00px;color:#b0b0b0;transform:scaleX(0.9314)">Structures</div>
<svg style="left:0;top:0" width="900" height="836">
<rect x="712" y="435" width="9" height="9" rx="1.2" fill="#e6e6e6"/><path d="M718 444 l3 -3 v3 Z" fill="#bbb"/>
<path d="M789.1 435.9 L794.2 445 M789.1 435.9 L798 436.5" stroke="#e0583a" stroke-width="2.6" stroke-linecap="round"/><circle cx="789.1" cy="435.9" r="2" fill="#e0583a"/><circle cx="794.2" cy="445" r="1.9" fill="#e0583a"/><circle cx="789.1" cy="435.9" r="0.8" fill="#1a1a1a"/><circle cx="794.2" cy="445" r="0.8" fill="#1a1a1a"/><path d="M797 434 l2.5 -0.5 l0.5 2.5 l-1.8 0.8 l1.8 1.5 l-1.5 1.7 l-2 -1.5 Z" fill="#e0583a"/>
<path d="M808 434.7 h9.5 v1.5 l-3.6 3.8 l3.6 3.8 v1.5 h-9.5 v-1.5 l3.6 -3.8 l-3.6 -3.8 Z" fill="#e6e6e6"/>
<rect x="827" y="436.3" width="7.6" height="7.1" rx="1.2" fill="#e6e6e6"/><path d="M834.2 438.8 l3 -2.4 v7 l-3 -2.2 Z" fill="#e6e6e6"/>
<path d="M844.5 437.6 h10.5 M852.8 435.6 l2.4 2 l-2.4 2 M856 441.8 h-10.5 M847.7 439.8 l-2.4 2 l2.4 2" stroke="#e6e6e6" stroke-width="1.4" fill="none"/>
<path d="M865 444.2 l5.5 -5.5" stroke="#e6e6e6" stroke-width="1.9" stroke-linecap="round"/><circle cx="871.8" cy="437.6" r="2.6" fill="#e6e6e6"/><path d="M872.3 434.5 l2.3 2.3" stroke="#1a1a1a" stroke-width="1.6"/>
<text x="884.6" y="443.9" font-family="Liberation Sans" font-weight="bold" font-size="10.6" fill="#e6e6e6" stroke="#e6e6e6" stroke-width="0.5">?</text>
<path d="M748.1 474 L754.1 485.5 M748.1 474 L759 473.8" stroke="#e0583a" stroke-width="3.2" stroke-linecap="round"/><circle cx="748.1" cy="474" r="2.6" fill="#e0583a"/><circle cx="754.1" cy="485.5" r="2.5" fill="#e0583a"/><circle cx="748.1" cy="474" r="1" fill="#1f1f1f"/><circle cx="754.1" cy="485.5" r="1" fill="#1f1f1f"/><path d="M758 470.8 l3 -0.8 l1.3 2.2 l-2 1.5 l2 1.6 l-1.3 2.2 l-3 -0.8 Z" fill="#e0583a"/><circle cx="760" cy="473.9" r="0.9" fill="#1f1f1f"/>
<rect x="770.2" y="470.5" width="6.2" height="6" rx="1.8" fill="#e6e6e6"/><path d="M776.4 473.5 h5.5 v2.3" stroke="#e6e6e6" stroke-width="1" fill="none"/><circle cx="772.9" cy="485.2" r="2.6" fill="none" stroke="#e6e6e6" stroke-width="1.7"/><circle cx="782.7" cy="479.4" r="2.7" fill="none" stroke="#e6e6e6" stroke-width="2.4" stroke-dasharray="1.4 0.75"/><path d="M776.5 485 h3.5 M777.6 483.8 l-1.2 1.2 l1.2 1.2" stroke="#e6e6e6" stroke-width="1.1" fill="none"/>
<circle cx="799.8" cy="477.8" r="3.6" fill="none" stroke="#e6e6e6" stroke-width="3" stroke-dasharray="1.8 0.9"/><circle cx="799.8" cy="477.8" r="1.2" fill="#e6e6e6"/><path d="M802.4 481 L810.1 484 L802.4 487.6 Z" fill="#e6e6e6"/>
<path d="M820 481 V474.3 a1 1 0 0 1 2 0 V478 V472.3 a1 1 0 0 1 2 0 V478 V471.7 a1 1 0 0 1 2 0 V478 V472.6 a1 1 0 0 1 2 0 V478 V474.5 a1 1 0 0 1 2 0 V482 q0 6 -5.5 6 q-4 0 -6 -3.5 l-2.6 -4 a1.1 1.1 0 0 1 1.8 -1.2 Z" fill="#e6e6e6"/>
<path d="M846.8 472.5 Q842.8 480 847.5 484.5 Q851.5 488 856.5 486.5" stroke="#e6e6e6" stroke-width="1.8" fill="none"/><path d="M849.5 476.6 l4.6 -4.4 l5.6 5.6 l-1.6 1.6 l-1.6 -1.2 l-1.4 1.4 l3 3.2 l-1.5 1.5 l-3.1 -3.2 l-2.3 2.3 Z" fill="#e6e6e6"/><rect x="842.2" y="484.8" width="3" height="3" transform="rotate(45 843.7 486.3)" fill="#e6e6e6"/>
<rect x="709" y="509.5" width="187.0" height="23.0" fill="#1e1e1e"/>
<rect x="709" y="534.0" width="174.0" height="22.3" fill="#1e1e1e"/>
<circle cx="890" cy="545.1" r="2.6" fill="none" stroke="#a8a8a8" stroke-width="1.1"/>
<rect x="709" y="558.0" width="174.0" height="22.0" fill="#1e1e1e"/>
<circle cx="890" cy="569.0" r="2.6" fill="none" stroke="#a8a8a8" stroke-width="1.1"/>
<rect x="709" y="582.0" width="174.0" height="22.0" fill="#1e1e1e"/>
<circle cx="890" cy="593.0" r="2.6" fill="none" stroke="#a8a8a8" stroke-width="1.1"/>
<rect x="709" y="606.0" width="174.0" height="21.5" fill="#1e1e1e"/>
<circle cx="890" cy="616.8" r="2.6" fill="none" stroke="#a8a8a8" stroke-width="1.1"/>
<rect x="709" y="630.0" width="187.0" height="22.0" fill="#1e1e1e"/>
<rect x="709" y="653.5" width="187.0" height="22.5" fill="#1e1e1e"/>
<rect x="709" y="677.5" width="187.0" height="22.5" fill="#1e1e1e"/>
<rect x="709" y="701.5" width="187.0" height="22.5" fill="#1e1e1e"/>
<rect x="709" y="725.5" width="187.0" height="22.5" fill="#1e1e1e"/>
<rect x="709" y="752.0" width="187.0" height="17.5" fill="#1e1e1e"/>
<circle cx="783.7" cy="516.8" r="3.8" fill="#e6e6e6"/><circle cx="784.8" cy="517" r="1" fill="#1e1e1e"/><path d="M774.4 521.6 L772.7 527.3 L779 525.2 L782.5 521 L786 527.5 L789 530.3 M782.5 521 L780 528 L784 530.5" stroke="#e6e6e6" stroke-width="1.5" fill="none" stroke-linecap="round" stroke-linejoin="round"/>
<path d="M753.8 551.8 L755.3 541.5 L757.5 540.5 M753.8 551.8 Q758 545 762 541.5" stroke="#e6e6e6" stroke-width="1.6" fill="none" stroke-linecap="round"/><path d="M761 541.5 L766 537.5 L768.5 543 Z" fill="#e6e6e6"/>
<path d="M779.3 562 L793.1 567.8 M779.3 562 L784.2 576 M780.5 577.8 L788.5 576.6" stroke="#e6e6e6" stroke-width="1.9" fill="none" stroke-linecap="round"/><circle cx="779.6" cy="562" r="1.8" fill="#e6e6e6"/><circle cx="793" cy="567.6" r="1.6" fill="#e6e6e6"/>
<circle cx="783.6" cy="588.6" r="5" fill="#e6e6e6"/><rect x="779.5" y="591" width="5" height="10.6" fill="#e6e6e6"/><rect x="784" y="592.5" width="3.5" height="3" fill="#e6e6e6"/><circle cx="785.5" cy="588" r="1.2" fill="#1e1e1e"/>
<path d="M781.5 623.4 Q779 620 783 616.5 Q786.5 613.5 787 610 L793.3 609.2 Q790 612 789.5 616 Q788.5 622 781.5 623.4 Z" fill="#e6e6e6"/>
<path d="M774.8 645 L789.8 636.6" stroke="#e6e6e6" stroke-width="1.7" stroke-linecap="round"/><circle cx="774.4" cy="644" r="1.3" fill="#e6e6e6"/><circle cx="775.4" cy="645.8" r="1.3" fill="#e6e6e6"/><circle cx="789" cy="635.8" r="1.3" fill="#e6e6e6"/><circle cx="790.4" cy="637.6" r="1.3" fill="#e6e6e6"/>
<path d="M761.0 658.8 L761.0 671.3" stroke="#e6e6e6" stroke-width="2.2" stroke-linecap="round"/><circle cx="761.0" cy="658.8" r="2.1" fill="#e6e6e6"/><circle cx="761.0" cy="658.8" r="0.9" fill="#1e1e1e"/><circle cx="761.0" cy="671.3" r="2.1" fill="#e6e6e6"/><circle cx="761.0" cy="671.3" r="0.9" fill="#1e1e1e"/><path d="M761.0 658.8 L773.8 659.4" stroke="#e6e6e6" stroke-width="2.2" stroke-linecap="round"/><circle cx="761.0" cy="658.8" r="2.1" fill="#e6e6e6"/><circle cx="761.0" cy="658.8" r="0.9" fill="#1e1e1e"/><circle cx="773.8" cy="659.4" r="2.1" fill="#e6e6e6"/><circle cx="773.8" cy="659.4" r="0.9" fill="#1e1e1e"/><path d="M773.8 659.4 L767.8 671.3" stroke="#e6e6e6" stroke-width="2.2" stroke-linecap="round"/><circle cx="773.8" cy="659.4" r="2.1" fill="#e6e6e6"/><circle cx="773.8" cy="659.4" r="0.9" fill="#1e1e1e"/><circle cx="767.8" cy="671.3" r="2.1" fill="#e6e6e6"/><circle cx="767.8" cy="671.3" r="0.9" fill="#1e1e1e"/>
<path d="M762.7 683.2 L767.8 694.2" stroke="#e6e6e6" stroke-width="2.2" stroke-linecap="round"/><circle cx="762.7" cy="683.2" r="2.1" fill="#e6e6e6"/><circle cx="762.7" cy="683.2" r="0.9" fill="#1e1e1e"/><circle cx="767.8" cy="694.2" r="2.1" fill="#e6e6e6"/><circle cx="767.8" cy="694.2" r="0.9" fill="#1e1e1e"/><path d="M771.5 685.0 L775.5 682.4" stroke="#e6e6e6" stroke-width="1.8" stroke-linecap="round"/><circle cx="771.5" cy="685.0" r="1.9" fill="#e6e6e6"/><circle cx="771.5" cy="685.0" r="0.9" fill="#1e1e1e"/><circle cx="775.5" cy="682.4" r="1.9" fill="#e6e6e6"/><circle cx="775.5" cy="682.4" r="0.9" fill="#1e1e1e"/><path d="M769.5 684.5 L772.3 691.6 L773.4 688.6 L776.4 688.4 Z" fill="#e6e6e6"/>
<path d="M777.4 706.2 L777.8 720.5" stroke="#e6e6e6" stroke-width="2.2" stroke-linecap="round"/><circle cx="777.4" cy="706.2" r="2.1" fill="#e6e6e6"/><circle cx="777.4" cy="706.2" r="0.9" fill="#1e1e1e"/><circle cx="777.8" cy="720.5" r="2.1" fill="#e6e6e6"/><circle cx="777.8" cy="720.5" r="0.9" fill="#1e1e1e"/><path d="M777.4 709.0 L789.8 709.6" stroke="#e6e6e6" stroke-width="2.2" stroke-linecap="round"/><circle cx="777.4" cy="709.0" r="2.1" fill="#e6e6e6"/><circle cx="777.4" cy="709.0" r="0.9" fill="#1e1e1e"/><circle cx="789.8" cy="709.6" r="2.1" fill="#e6e6e6"/><circle cx="789.8" cy="709.6" r="0.9" fill="#1e1e1e"/>
<path d="M772.1 730.8 L786.4 729.9" stroke="#e6e6e6" stroke-width="2.2" stroke-linecap="round"/><circle cx="772.1" cy="730.8" r="2.1" fill="#e6e6e6"/><circle cx="772.1" cy="730.8" r="0.9" fill="#1e1e1e"/><circle cx="786.4" cy="729.9" r="2.1" fill="#e6e6e6"/><circle cx="786.4" cy="729.9" r="0.9" fill="#1e1e1e"/><path d="M773 733 Q771.5 741 778 745.3" stroke="#e6e6e6" stroke-width="1.3" fill="none"/><path d="M778.5 739.3 Q784 733.8 789.5 739.3 Q784 744.8 778.5 739.3 Z" fill="none" stroke="#e6e6e6" stroke-width="1.3"/><circle cx="784" cy="739.3" r="1.5" fill="#e6e6e6"/>
<path d="M786.8 764.5 L792 759.4" stroke="#e6e6e6" stroke-width="2" stroke-linecap="round"/><circle cx="793.3" cy="758" r="2.6" fill="#e6e6e6"/><path d="M793.8 754.8 l2.4 2.4" stroke="#1e1e1e" stroke-width="1.5"/>
</svg>
<div class="t" style="left:795.00px;top:517.08px;font-size:9.00px;color:#dcdcdc;transform:scaleX(0.9732)">Hominoid</div>
<div class="t" style="left:774.20px;top:541.23px;font-size:9.00px;color:#dcdcdc;transform:scaleX(0.9718)">Arm (or front leg)</div>
<div class="t" style="left:800.20px;top:565.08px;font-size:9.00px;color:#dcdcdc;transform:scaleX(0.9123)">Leg</div>
<div class="t" style="left:796.80px;top:589.08px;font-size:9.00px;color:#dcdcdc;transform:scaleX(0.9297)">Spine</div>
<div class="t" style="left:801.40px;top:612.83px;font-size:9.00px;color:#dcdcdc;transform:scaleX(0.9256)">Tail</div>
<div class="t" style="left:796.30px;top:637.08px;font-size:9.00px;color:#dcdcdc;transform:scaleX(0.8933)">Custom...</div>
<div class="t" style="left:781.20px;top:660.83px;font-size:9.00px;color:#dcdcdc;transform:scaleX(0.9439)">Toggle edit mode</div>
<div class="t" style="left:782.60px;top:684.83px;font-size:9.00px;color:#dcdcdc;transform:scaleX(0.9235)">Select structures</div>
<div class="t" style="left:795.80px;top:708.83px;font-size:9.00px;color:#dcdcdc;transform:scaleX(0.9541)">Duplicate</div>
<div class="t" style="left:793.00px;top:732.83px;font-size:9.00px;color:#dcdcdc;transform:scaleX(0.9826)">Show/hide</div>
<div class="t" style="left:801.30px;top:756.83px;font-size:9.00px;color:#dcdcdc;transform:scaleX(0.8605)">Edit...</div>
<div class="t" style="left:708.80px;top:801.58px;font-size:9.00px;color:#9a9a9a;transform:scaleX(0.9504)">rainboxprod.coop</div>
<div class="a" style="left:902.8px;top:39.5px;width:601.2px;height:778px;background:#4f5a80"></div>
<div class="a" style="left:904.1px;top:40.9px;width:600px;height:774.6px;background:#1b1f2c"></div>
<div class="a" style="left:905px;top:41.8px;width:599px;height:773px;background:#282828"></div>
<svg style="left:0;top:0" width="1521" height="60"><path d="M911.1 49.7 l3.6 3.6 M914.7 49.7 l-3.6 3.6" stroke="#8a8a8a" stroke-width="0.9"/></svg>
<div class="a" style="left:922.6px;top:46.8px;width:8.5px;height:7.4px;background:#cfc59a"></div>
<svg style="left:0;top:0" width="1521" height="60"><rect x="939.5" y="50" width="6" height="5" fill="#d0d0d0"/><path d="M940.7 50 v-1.8 a1.8 1.8 0 0 1 3.6 0" stroke="#d0d0d0" stroke-width="1" fill="none"/></svg>
<div class="t" style="left:952.30px;top:46.81px;font-size:9.20px;color:#c8c8c8;transform:scaleX(0.9348)">Composition</div>
<div class="t" style="left:1002.80px;top:46.81px;font-size:9.20px;color:#6d9ef0;transform:scaleX(0.9019)">Mogran_RIG</div>
<div class="hb" style="left:1056px;top:48.3px;width:6.8px;height:6.2px;color:#9a9a9a"></div>
<div class="a" style="left:918.5px;top:64.3px;width:69.5px;height:11.5px;background:#161616"></div>
<div class="t" style="left:924.40px;top:65.91px;font-size:9.20px;color:#6d9ef0;transform:scaleX(0.9057)">Mogran_RIG</div>
<div class="a" style="left:904.2px;top:78.5px;width:600px;height:2.8px;background:#0b0b0b"></div>
<svg style="left:0;top:0" width="1521" height="836">
<defs><pattern id="chk" patternUnits="userSpaceOnUse" x="907.9" y="86.85" width="12.42" height="12.32"><rect width="12.42" height="12.32" fill="#ffffff"/><rect x="6.21" y="0" width="6.21" height="6.16" fill="#c9c9c9"/><rect x="0" y="6.16" width="6.21" height="6.16" fill="#c9c9c9"/></pattern></defs>
<rect x="902.9" y="81.3" width="601.3" height="652.5" fill="url(#chk)"/>
</svg>
<div class="t" style="left:1454.60px;top:87.38px;font-size:9.00px;color:#3a3a3a;transform:scaleX(1.0049);-webkit-text-stroke-width:0;text-shadow:0.6px 0.6px 0 #f4f4f4">Fast Draft</div>
<div class="a" style="left:905px;top:796.5px;width:599px;height:19px;background:#1f1f1f"></div>
<div class="a" style="left:905px;top:796px;width:599px;height:1.3px;background:#161616"></div>
<div class="a" style="left:904.1px;top:733.8px;width:600px;height:62.7px;background:#232323"></div>
<div class="a" style="left:904.1px;top:733.8px;width:600px;height:1px;background:#111"></div>
<svg style="left:0;top:0" width="1521" height="836">
<rect x="908" y="802" width="7" height="6" fill="#c0c0c0"/><rect x="911" y="805" width="7" height="6" fill="none" stroke="#c0c0c0" stroke-width="1"/>
<rect x="924.5" y="801.5" width="9" height="7" fill="none" stroke="#c0c0c0" stroke-width="1"/><path d="M929 808.5 v2 M926 811 h6" stroke="#c0c0c0" stroke-width="1"/>
<circle cx="943" cy="805.5" r="3" fill="#c0c0c0"/><circle cx="949" cy="805.5" r="3" fill="#c0c0c0"/><circle cx="943" cy="805.5" r="1.2" fill="#1f1f1f"/><circle cx="949" cy="805.5" r="1.2" fill="#1f1f1f"/><path d="M944 810 h4 l-2 2 Z" fill="#c0c0c0"/>
<path d="M998.5 805 l2.5 2.5 l2.5 -2.5" stroke="#c0c0c0" stroke-width="1" fill="none"/>
<rect x="1012.5" y="801.5" width="10" height="8" fill="none" stroke="#c0c0c0" stroke-width="1"/><path d="M1017.5 803.5 v4 M1015.5 805.5 h4" stroke="#c0c0c0" stroke-width="1"/><path d="M1016 811 h4 l-2 2 Z" fill="#c0c0c0"/>
<rect x="1027" y="799.5" width="14" height="14" fill="#15192a"/><path d="M1030 810.5 l2 -8 l7 -1 l-1 9 Z" fill="none" stroke="#5a80d0" stroke-width="1"/>
<rect x="1099.5" y="802" width="12" height="8.5" rx="1" fill="#c0c0c0"/><circle cx="1105.5" cy="806.3" r="2.6" fill="#1f1f1f"/><circle cx="1105.5" cy="806.3" r="1.5" fill="#c0c0c0"/><rect x="1102" y="800.5" width="5" height="2" fill="#c0c0c0"/>
<circle cx="1120" cy="806" r="3" fill="none" stroke="#3a3a3a" stroke-width="1.5"/><circle cx="1124" cy="803" r="3" fill="none" stroke="#3a3a3a" stroke-width="1.5"/>
<circle cx="1140" cy="803" r="2.6" fill="#e04a3a"/><circle cx="1137.5" cy="807" r="2.6" fill="#4ab04a"/><circle cx="1142.5" cy="807" r="2.6" fill="#4a70e0"/><path d="M1139 811 h4 l-2 2 Z" fill="#c0c0c0"/>
<path d="M1207.5 805 l2.5 2.5 l2.5 -2.5 M1325.5 805 l2.5 2.5 l2.5 -2.5 M1382.5 805 l2.5 2.5 l2.5 -2.5" stroke="#c0c0c0" stroke-width="1" fill="none"/>
<rect x="1221.5" y="801.5" width="9" height="9" fill="none" stroke="#c0c0c0" stroke-width="1"/><rect x="1223.5" y="803.5" width="5" height="4" fill="#c0c0c0"/>
<rect x="1236" y="799.5" width="14" height="14" fill="#15192a"/><rect x="1238.5" y="802" width="9" height="9" fill="none" stroke="#5a80d0" stroke-width="1" stroke-dasharray="1.5 1"/>
<path d="M1396 801.5 h10 M1398 803 l-2 -1.5 l2 -1.5 M1404 803 l2 -1.5 l-2 -1.5" stroke="#c0c0c0" stroke-width="1" fill="none"/><rect x="1397.5" y="804.5" width="7" height="6" fill="none" stroke="#c0c0c0" stroke-width="1"/>
<rect x="1410" y="799.5" width="15" height="14" fill="#15192a"/><rect x="1412.5" y="801.5" width="10" height="8" fill="none" stroke="#5a80d0" stroke-width="1"/><path d="M1417 803 l-1.5 3 h3 l-1.5 3" stroke="#5a80d0" stroke-width="0.9" fill="none"/>
<path d="M1430.5 801 v9 h9 v-9 M1433 810 v-5 M1435 810 v-3 M1437 810 v-5" stroke="#c0c0c0" stroke-width="1" fill="none"/>
<rect x="1450" y="800" width="4" height="3.5" fill="#c0c0c0"/><rect x="1446" y="808" width="4" height="3.5" fill="#c0c0c0"/><rect x="1454" y="808" width="4" height="3.5" fill="#c0c0c0"/><path d="M1452 803.5 v2.5 M1448 808 v-2 h8 v2" stroke="#c0c0c0" stroke-width="1" fill="none"/>
<circle cx="1471" cy="806" r="4.2" fill="none" stroke="#c0c0c0" stroke-width="2" stroke-dasharray="3 1.3"/>
</svg>
<div class="t" style="left:960.20px;top:802.98px;font-size:9.00px;color:#c4c4c4;transform:scaleX(0.9013)">12.5%</div>
<div class="t" style="left:1050.40px;top:802.98px;font-size:9.00px;color:#c4c4c4;transform:scaleX(0.9192)">0:00:00:00</div>
<div class="t" style="left:1153.70px;top:802.98px;font-size:9.00px;color:#c4c4c4;transform:scaleX(0.9011)">(Custom...)</div>
<div class="t" style="left:1257.00px;top:802.98px;font-size:9.00px;color:#c4c4c4;transform:scaleX(0.9183)">Active Camera</div>
<div class="t" style="left:1342.30px;top:802.98px;font-size:9.00px;color:#c4c4c4;transform:scaleX(0.9571)">1 View</div>
<div class="t" style="left:1481.20px;top:802.98px;font-size:9.00px;color:#6d9ef0;transform:scaleX(0.8837)">+0.0</div>
<svg style="left:0;top:0" width="1521" height="836">
<path d="M1137 484 L1173.8 484 L1169.8 643 L1122.9 643 Q1124 636 1130 633 L1140.6 628 Z" fill="#b9834b"/>
<path d="M1187.5 490 L1225.5 484 L1221.5 653 L1172.2 653 Q1174 645 1180 642 L1190.4 638.5 Z" fill="#b9834b"/>
<path d="M1133 476 Q1160 490 1200 485 L1232 467 L1233 486 L1225 500 L1187.5 500 L1173.8 497 L1137 497 Z" fill="#b9834b"/>
<path d="M1133 476 Q1160 492 1200 486 L1232 468 L1232 473 L1200 491 Q1160 497 1134 481 Z" fill="#8e5b2c" opacity="0.7"/>
<path d="M1140 330 L1205 330 L1226 330 Q1233 340 1233 360 L1234 465 Q1234 480 1200 485 Q1162 492 1134 476 Q1131 470 1131.5 455 L1134 355 Q1135 335 1140 330 Z" fill="#acdcb6"/>
<path d="M1148 331 L1162 345 L1172 333 M1180 333 L1190 344 L1204 330" stroke="#96cba2" stroke-width="2" fill="none"/>
<path d="M1143 372 L1148 362 L1152 372 Z" fill="#50728c"/><path d="M1150 372 L1155 362 L1159 372 Z" fill="#6aaa5a"/><path d="M1156 372 L1161 362 L1165.5 372 Z" fill="#e05f48"/>
<path d="M1133.5 408 V426.5 H1148 M1151 426.5 H1175 V408" stroke="#7aa090" stroke-width="1" fill="none"/>
<path d="M1196.5 345 Q1196.5 330 1211 330 Q1227 330 1227.5 345 L1227.5 386 L1196.5 386 Z" fill="#c9e9cd"/>
<path d="M1196.8 388 L1227 388 L1226.6 496 Q1226 511 1211 511 Q1197 511 1197 496 L1197 499 L1187.5 499 Q1190 492 1197 488 Z" fill="#f4dfd3"/>
<rect x="1196.5" y="384.3" width="31" height="4.6" fill="#ec7a60"/>
<path d="M1138 248 Q1138 235 1160 232 L1195 232 Q1211 236 1211 255 L1211 290 Q1210 312 1176.8 312 Q1142 312 1141 290 Z" fill="#f4dfd3"/>
<ellipse cx="1213.5" cy="275" rx="5" ry="8" fill="#f4dfd3"/><path d="M1214.5 270 q3 5 0 10" stroke="#e8b8a4" stroke-width="2" fill="none"/>
<rect x="1170.8" y="309" width="12" height="10" fill="#f4dfd3"/>
<path d="M1171 314 l6 2 l6 -2 v4 l-6 -2 l-6 2 Z" fill="#e88060"/>
<path d="M1132.4 245.4 C1142 228 1160 215 1176 214.3 C1190 214 1203 222 1208 234 C1212 245 1212.2 255 1211.7 262.5 L1207.3 262.5 C1206 252 1202 243 1196.5 236.8 C1192 244 1182 252 1171.7 253.2 C1160 254 1145 252 1132.4 245.4 Z" fill="#6c2d0d" stroke="#4e1f08" stroke-width="0.7"/>
<path d="M1139.8 251.7 L1140.4 261" stroke="#6c2d0d" stroke-width="1.5"/>
<path d="M1172.5 252.2 C1182 250 1190 244 1194.2 238.2" stroke="#f3dccb" stroke-width="0.9" fill="none"/>
<rect x="1142.4" y="259.6" width="15.7" height="2.9" fill="#6c2d0d"/><rect x="1177.5" y="259.6" width="18.7" height="2.9" fill="#6c2d0d"/>
<rect x="1137.5" y="264.3" width="25" height="15" rx="3" fill="none" stroke="#d9482b" stroke-width="2.2"/>
<rect x="1172.5" y="264.3" width="29" height="15" rx="3" fill="none" stroke="#d9482b" stroke-width="2.2"/>
<path d="M1162.5 265.5 h10 M1134 265.5 h3 M1201.5 265.5 h2.5" stroke="#d9482b" stroke-width="2.2"/>
<circle cx="1151.4" cy="272.3" r="2.1" fill="#1a1a1a"/><circle cx="1184.3" cy="272.3" r="2.1" fill="#1a1a1a"/>
<path d="M1168 273 L1159.5 286.5 L1169.3 288.7 Z" fill="#e98673"/>
<path d="M1166.3 293.9 Q1172 298 1180.5 290.2" stroke="#2a2a2a" stroke-width="1.2" fill="none"/>
<path d="M1176.1 229 L1176.9 229 L1178 311 L1175.6 311 Z" fill="#a9d3da"/>
<path d="M1176.8 312 L1176.8 326" stroke="#e8d070" stroke-width="2"/>
<path d="M1176.8 326 L1181.8 384.3" stroke="#d4a860" stroke-width="2"/>
<path d="M1181.8 384.3 L1181.6 444.4" stroke="#c99a60" stroke-width="2"/><path d="M1181.6 444.4 L1181.6 478.2" stroke="#c98472" stroke-width="2"/>
<path d="M1211.4 345 L1211.4 418" stroke="#d8aa70" stroke-width="2"/><path d="M1211.4 418 L1211.4 486" stroke="#ecd278" stroke-width="2"/><path d="M1211.4 486 L1211.4 509" stroke="#a8d0d8" stroke-width="2"/>
<path d="M1155 494 L1155 555" stroke="#d08a3c" stroke-width="1.2"/><path d="M1155 555 L1155 629" stroke="#e9b535" stroke-width="2"/>
<path d="M1206 498 L1206.5 559.7" stroke="#d08a3c" stroke-width="1.2"/><path d="M1206.5 559.7 L1206.2 638.3" stroke="#e9b535" stroke-width="2"/>
<path d="M1155 629.2 L1132.5 637.9" stroke="#a9bb9a" stroke-width="2.4"/><path d="M1132.5 637.9 L1122.9 643" stroke="#b49ab0" stroke-width="2"/>
<path d="M1206.2 638.3 L1182.3 647.2" stroke="#a9bb9a" stroke-width="2.4"/><path d="M1182.3 647.2 L1172.2 653.2" stroke="#b49ab0" stroke-width="2"/>
<circle cx="1176.5" cy="229.0" r="1.4" fill="#111"/>
<circle cx="1176.8" cy="312.0" r="1.4" fill="#111"/>
<circle cx="1176.8" cy="326.0" r="1.4" fill="#111"/>
<circle cx="1181.8" cy="384.3" r="1.4" fill="#111"/>
<circle cx="1181.6" cy="444.4" r="1.4" fill="#111"/>
<circle cx="1181.6" cy="478.2" r="1.4" fill="#111"/>
<circle cx="1211.4" cy="345.0" r="1.4" fill="#111"/>
<circle cx="1211.4" cy="418.0" r="1.4" fill="#111"/>
<circle cx="1211.4" cy="486.0" r="1.4" fill="#111"/>
<circle cx="1211.4" cy="509.0" r="1.4" fill="#111"/>
<circle cx="1155.0" cy="555.0" r="1.4" fill="#111"/>
<circle cx="1206.5" cy="559.7" r="1.4" fill="#111"/>
<circle cx="1155.0" cy="629.2" r="1.4" fill="#111"/>
<circle cx="1132.5" cy="637.9" r="1.4" fill="#111"/>
<circle cx="1122.9" cy="643.0" r="1.4" fill="#111"/>
<circle cx="1168.4" cy="643.1" r="1.4" fill="#111"/>
<circle cx="1206.2" cy="638.3" r="1.4" fill="#111"/>
<circle cx="1182.3" cy="647.2" r="1.4" fill="#111"/>
<circle cx="1172.2" cy="653.2" r="1.4" fill="#111"/>
<circle cx="1220.6" cy="653.2" r="1.4" fill="#111"/>
<circle cx="1176.5" cy="229" r="1.4" fill="#b02020"/>
<path d="M1133.2 343 V326.4 H1172.6" stroke="#8a8a8a" stroke-width="0.9" fill="none"/>
</svg>
<svg style="left:0;top:0" width="300" height="836"><path d="M176.3 764.6 L176.3 775.8 L179 773.3 L181.2 777.6 L183 776.8 L180.9 772.5 L184.6 772.5 Z" fill="#0a0a0a" stroke="#f2f2f2" stroke-width="0.9" stroke-linejoin="round"/></svg>
</div></body></html>
